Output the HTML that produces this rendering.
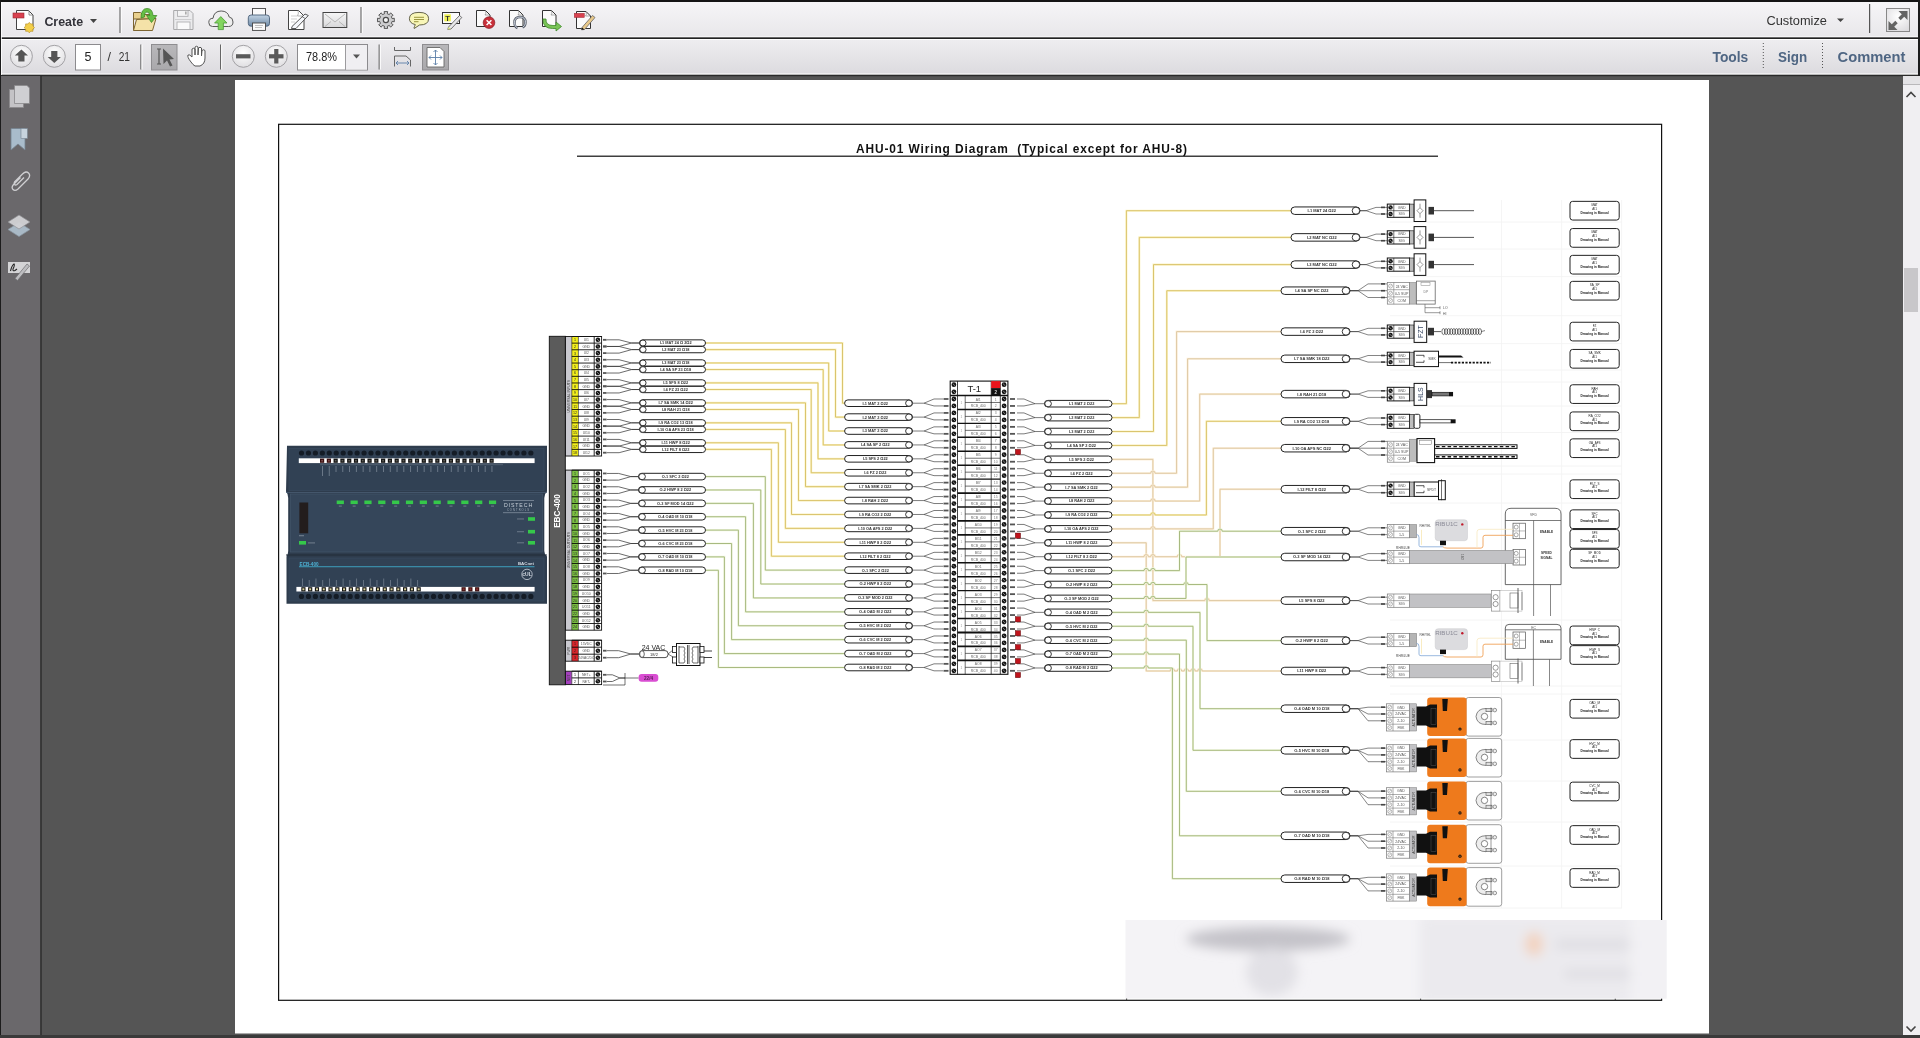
<!DOCTYPE html>
<html><head><meta charset="utf-8"><title>AHU-01 Wiring Diagram</title>
<style>html,body{margin:0;padding:0;width:1920px;height:1038px;overflow:hidden;background:#555555;font-family:"Liberation Sans",sans-serif;} svg{display:block;will-change:transform;}</style>
</head><body>
<svg width="1920" height="1038" viewBox="0 0 1920 1038"><defs>
<linearGradient id="tb1" x1="0" y1="0" x2="0" y2="1"><stop offset="0" stop-color="#f6f5f7"/><stop offset="1" stop-color="#e8e7ea"/></linearGradient>
<linearGradient id="tb2" x1="0" y1="0" x2="0" y2="1"><stop offset="0" stop-color="#eeedf0"/><stop offset="1" stop-color="#dcdbdf"/></linearGradient>
<radialGradient id="btnc" cx="0.5" cy="0.35" r="0.7"><stop offset="0" stop-color="#ffffff"/><stop offset="1" stop-color="#dddcdf"/></radialGradient>
<linearGradient id="prn" x1="0" y1="0" x2="0" y2="1"><stop offset="0" stop-color="#c2d3e3"/><stop offset="1" stop-color="#6f8aa6"/></linearGradient>
<linearGradient id="mail" x1="0" y1="0" x2="0" y2="1"><stop offset="0" stop-color="#f7f7f7"/><stop offset="1" stop-color="#d8d8da"/></linearGradient>
<linearGradient id="selbg" x1="0" y1="0" x2="0" y2="1"><stop offset="0" stop-color="#b9b8bb"/><stop offset="1" stop-color="#a9a8ab"/></linearGradient>
<filter id="blur6" x="-5%" y="-20%" width="110%" height="140%"><feGaussianBlur stdDeviation="6"/></filter></defs><rect x="0" y="0" width="1920" height="1038" fill="#555555"/>
<rect x="0" y="0" width="1920" height="2" fill="#151515"/>
<rect x="0" y="2" width="1920" height="35" fill="url(#tb1)"/>
<rect x="0" y="36.5" width="1920" height="1" fill="#ffffff"/>
<rect x="0" y="37.5" width="1920" height="1.5" fill="#222"/>
<rect x="0" y="39" width="1920" height="1" fill="#ffffff"/>
<rect x="0" y="40" width="1920" height="34" fill="url(#tb2)"/>
<rect x="0" y="73.5" width="1920" height="1.3" fill="#ffffff"/>
<rect x="0" y="74.8" width="1920" height="1.4" fill="#2a2a2a"/>
<rect x="0" y="0" width="1" height="1038" fill="#1c1c1c"/>
<rect x="1" y="2" width="1" height="73" fill="#ffffff" opacity="0.8"/>
<rect x="1918" y="0" width="2" height="76" fill="#1c1c1c"/>
<rect x="1" y="76" width="39.5" height="962" fill="#6a686b"/>
<rect x="40.3" y="76" width="1.4" height="962" fill="#2b2b2b"/>
<rect x="1903" y="76" width="17" height="962" fill="#f0eff2"/>
<rect x="1903" y="76" width="17" height="8" fill="#e4e3e6"/>
<rect x="1903" y="84" width="17" height="1" fill="#b9b8bb"/>
<path d="M1906.5 97 L1911 92.5 L1915.5 97" stroke="#444" stroke-width="1.6" fill="none"/>
<rect x="1904" y="268" width="14" height="44" fill="#c8c7ca"/>
<path d="M1906.5 1026.5 L1911 1031 L1915.5 1026.5" stroke="#444" stroke-width="1.6" fill="none"/>
<rect x="0" y="1035" width="1920" height="3" fill="#3a3a3a"/><path d="M16.5 10.5 L28.5 10.5 L33 15 L33 29.5 L16.5 29.5 Z" fill="#fff" stroke="#444" stroke-width="1"/>
<path d="M29 11 L29 15 L33 15" fill="none" stroke="#777" stroke-width="0.8"/>
<rect x="13" y="13" width="11" height="5" fill="#d8414f" stroke="#9b2a33" stroke-width="0.6"/>
<path d="M34.50 27.60 L32.90 29.09 L32.98 31.28 L30.79 31.20 L29.30 32.80 L27.81 31.20 L25.62 31.28 L25.70 29.09 L24.10 27.60 L25.70 26.11 L25.62 23.92 L27.81 24.00 L29.30 22.40 L30.79 24.00 L32.98 23.92 L32.90 26.11 Z" fill="#f3cf4a" stroke="#b8902a" stroke-width="0.7"/>
<text x="44.4" y="25.5" font-family="Liberation Sans, sans-serif" font-size="13.5" font-weight="bold" fill="#33333a" textLength="38.7" lengthAdjust="spacingAndGlyphs">Create</text>
<path d="M90 19 L97 19 L93.5 23 Z" fill="#444"/>
<rect x="119.5" y="7" width="1.2" height="26" fill="#555"/>
<rect x="120.7" y="7" width="1" height="26" fill="#fff"/>
<rect x="360.5" y="7" width="1.2" height="26" fill="#555"/>
<rect x="361.7" y="7" width="1" height="26" fill="#fff"/>
<path d="M133.5 30.5 V12.5 H140.5 L142.5 14.5 H150 V19 H133.5" fill="#e9d08e" stroke="#7d6530" stroke-width="1"/>
<path d="M136.5 19.5 L156 18.5 L152.5 30.5 L133.5 30.5 Z" fill="#f4e2a8" stroke="#7d6530" stroke-width="1"/>
<path d="M141 18 Q141 8.5 147 8.5 Q152.5 8.5 153 15.5 L156.8 15.5 L151.5 22.5 L146.5 15.5 L149.8 15.5 Q149.5 12 147 12 Q144.5 12 144.5 17 Z" fill="#66bf45" stroke="#3f8a2a" stroke-width="0.8"/>
<path d="M173.7 10.5 L190 10.5 L193 13.5 L193 29.5 L173.7 29.5 Z" fill="#ececee" stroke="#a9a9ab" stroke-width="1"/>
<rect x="177.5" y="10.5" width="10.5" height="5.8" fill="#f4f4f5" stroke="#a9a9ab" stroke-width="0.8"/>
<rect x="185" y="11.5" width="1.6" height="3" fill="#aaa"/>
<rect x="177" y="22" width="13" height="7.5" fill="#fafafa" stroke="#a9a9ab" stroke-width="0.8"/>
<path d="M175 19.5 H191.5" stroke="#c5c5c7" stroke-width="0.8"/>
<path d="M212.5 26.5 Q208.8 26.5 208.8 22.5 Q208.8 18.3 213 18.3 Q214 11 221.2 11 Q227.8 11 229.2 17 Q233 17.5 233 22 Q233 26.5 228.5 26.5 Z" fill="#eeeeee" stroke="#5a5a5a" stroke-width="1"/>
<path d="M220.8 16.6 L227 23 L223.4 23 L223.4 29.6 L218.2 29.6 L218.2 23 L214.6 23 Z" fill="#82d45e" stroke="#4a9a35" stroke-width="0.8"/>
<rect x="252.5" y="8.5" width="13" height="8.5" fill="#fafafa" stroke="#444" stroke-width="0.9"/>
<rect x="248.3" y="15" width="21.2" height="11.2" rx="2.8" fill="url(#prn)" stroke="#4a6078" stroke-width="0.9"/>
<rect x="252.5" y="23" width="13" height="7.4" fill="#fafafa" stroke="#444" stroke-width="0.9"/>
<path d="M255 25.5 H263 M255 27.5 H262" stroke="#999" stroke-width="0.6"/>
<path d="M288.5 10.5 L298.5 10.5 L304 16 L304 29.5 L288.5 29.5 Z" fill="#fff" stroke="#444" stroke-width="1"/>
<path d="M298 10.5 Q299 13.5 297.5 16 H304" fill="none" stroke="#888" stroke-width="0.6"/>
<path d="M291 16 H297 M291 19 H297 M291 22 H295" stroke="#bbb" stroke-width="0.7"/>
<path d="M292 26.5 L305 14 L308.3 15.5 L296 28.5 L291.5 28.5 Z" fill="#f4f6fa" stroke="#444" stroke-width="0.9"/>
<path d="M302 16.5 L305 18.5" stroke="#444" stroke-width="0.7"/>
<rect x="323" y="12.5" width="23.8" height="15" fill="url(#mail)" stroke="#444" stroke-width="1"/>
<path d="M325 14 L335 22 L345 14 M325 26.5 L331 21.5 M345 26.5 L339 21.5" fill="none" stroke="#aaa" stroke-width="0.8"/>
<path d="M394.31 18.21 L394.31 21.79 L392.15 21.39 L391.30 23.44 L393.11 24.68 L390.58 27.21 L389.34 25.40 L387.29 26.25 L387.69 28.41 L384.11 28.41 L384.51 26.25 L382.46 25.40 L381.22 27.21 L378.69 24.68 L380.50 23.44 L379.65 21.39 L377.49 21.79 L377.49 18.21 L379.65 18.61 L380.50 16.56 L378.69 15.32 L381.22 12.79 L382.46 14.60 L384.51 13.75 L384.11 11.59 L387.69 11.59 L387.29 13.75 L389.34 14.60 L390.58 12.79 L393.11 15.32 L391.30 16.56 L392.15 18.61 Z" fill="#cdcdcf" stroke="#4a4a4a" stroke-width="0.9" stroke-linejoin="round"/>
<circle cx="385.9" cy="20" r="2.6" fill="#f4f4f4" stroke="#4a4a4a" stroke-width="1.2"/>
<path d="M419 12.4 Q428.6 12.4 428.6 18.7 Q428.6 25 419.5 25 L414.2 28.5 Q413.5 28.5 414.5 26.5 L415.3 24.6 Q409.4 23.2 409.4 18.7 Q409.4 12.4 419 12.4 Z" fill="#f8f6b8" stroke="#55543a" stroke-width="0.9"/>
<path d="M414 17.3 H424 M414 19.5 H424 M414 21.7 H418.5" stroke="#8f8a30" stroke-width="0.9"/>
<rect x="442.5" y="12.5" width="17" height="11" fill="#fbfbfb" stroke="#333" stroke-width="1"/>
<rect x="444.3" y="14.3" width="6.6" height="7" fill="#eef050"/>
<text x="447.6" y="20.6" font-family="Liberation Sans, sans-serif" font-size="7.5" font-weight="bold" fill="#333" text-anchor="middle">T</text>
<path d="M448.5 27 L459.5 15.5 L461.8 17.5 L451 29 L447.8 29.5 Z" fill="#e8e8ea" stroke="#555" stroke-width="0.8"/>
<path d="M447.8 29.5 L448.5 27 L451 29 Z" fill="#d7e27a"/>
<path d="M476.5 10.5 H485.5 L490 15.0 V26.5 H476.5 Z" fill="#fbfbfb" stroke="#333" stroke-width="1"/><path d="M485.5 10.5 Q486.5 14.0 485.0 15.0 H490" fill="none" stroke="#777" stroke-width="0.6"/>
<circle cx="489" cy="22.6" r="5.8" fill="#c8303a" stroke="#8a1a22" stroke-width="0.7"/>
<path d="M486.6 20.2 L491.4 25 M491.4 20.2 L486.6 25" stroke="#fff" stroke-width="1.5"/>
<path d="M509.5 10.5 H518.5 L523 15.0 V26.5 H509.5 Z" fill="#fbfbfb" stroke="#333" stroke-width="1"/><path d="M518.5 10.5 Q519.5 14.0 518.0 15.0 H523" fill="none" stroke="#777" stroke-width="0.6"/>
<path d="M517.5 28 Q514.5 27 514.5 22.5 Q514.5 17 520 17 Q525.5 17 525.5 22.5 Q525.5 26 522.5 27.5" fill="none" stroke="#555b66" stroke-width="2.4"/>
<path d="M517.5 28 Q514.5 27 514.5 22.5 Q514.5 17 520 17 Q525.5 17 525.5 22.5 Q525.5 26 522.5 27.5" fill="none" stroke="#cfd6e2" stroke-width="1"/>
<path d="M542.5 10.5 H551.5 L556 15.0 V26.5 H542.5 Z" fill="#fbfbfb" stroke="#333" stroke-width="1"/><path d="M551.5 10.5 Q552.5 14.0 551.0 15.0 H556" fill="none" stroke="#777" stroke-width="0.6"/>
<path d="M546 19 Q545.5 25.5 553 25.5 L556 25.5 L556 22 L561.5 26.5 L556 31 L556 28.5 L552.5 28.5 Q542.5 28.5 543 19 Z" fill="#79c456" stroke="#3f8a2a" stroke-width="0.8"/>
<path d="M576.5 11.5 H586.0 L590.5 16.0 V28.5 H576.5 Z" fill="#fbfbfb" stroke="#333" stroke-width="1"/><path d="M586.0 11.5 Q587.0 15.0 585.5 16.0 H590.5" fill="none" stroke="#777" stroke-width="0.6"/>
<rect x="574.3" y="13.3" width="10" height="4.2" fill="#d8414f" stroke="#9b2a33" stroke-width="0.5"/>
<path d="M582 27.5 L592.5 15.5 L595 17.5 L584.5 29.5 L581.5 29.8 Z" fill="#e9c98a" stroke="#666" stroke-width="0.8"/>
<path d="M581.5 29.8 L582 27.5 L584.5 29.5 Z" fill="#111"/>
<text x="1766.5" y="24.5" font-family="Liberation Sans, sans-serif" font-size="12.8" fill="#333">Customize</text>
<path d="M1837 18.5 L1844 18.5 L1840.5 22 Z" fill="#444"/>
<rect x="1869" y="4" width="1.2" height="29" fill="#555"/>
<rect x="1886.5" y="8.5" width="23" height="23" fill="url(#btnc)" stroke="#888" stroke-width="1"/>
<path d="M1898.5 11 L1907.5 11 L1907.5 20 Z M1888.5 30 L1888.5 21 L1897.5 30 Z" fill="#646464"/>
<path d="M1904 14.5 L1899.5 19 M1892 26.5 L1896.5 22" stroke="#646464" stroke-width="3.4"/>
<circle cx="21.4" cy="56.3" r="11" fill="url(#btnc)" stroke="#9b9a9d" stroke-width="0.9"/>
<circle cx="54.3" cy="56.3" r="11" fill="url(#btnc)" stroke="#9b9a9d" stroke-width="0.9"/>
<path d="M21.4 49.5 L28 55.5 L24.5 55.5 L24.5 61.5 L18.3 61.5 L18.3 55.5 L14.8 55.5 Z" fill="#555"/>
<path d="M54.3 63 L60.9 57 L57.4 57 L57.4 51 L51.2 51 L51.2 57 L47.7 57 Z" fill="#555"/>
<rect x="75.5" y="44.5" width="25" height="25.5" fill="#fff" stroke="#8c8b8e" stroke-width="1"/>
<text x="88" y="61" font-family="Liberation Sans, sans-serif" font-size="12.5" fill="#222" text-anchor="middle">5</text>
<text x="107.5" y="61" font-family="Liberation Sans, sans-serif" font-size="12.5" fill="#333">/</text>
<text x="118.7" y="61" font-family="Liberation Sans, sans-serif" font-size="12.5" fill="#333" textLength="11.3" lengthAdjust="spacingAndGlyphs">21</text>
<rect x="140.3" y="44.5" width="1.2" height="25" fill="#666"/>
<rect x="141.5" y="44.5" width="1" height="25" fill="#fff"/>
<rect x="220" y="44.5" width="1.2" height="25" fill="#666"/>
<rect x="221.2" y="44.5" width="1" height="25" fill="#fff"/>
<rect x="378.6" y="44.5" width="1.2" height="25" fill="#666"/>
<rect x="379.8" y="44.5" width="1" height="25" fill="#fff"/>
<rect x="151.5" y="44.5" width="25.5" height="25.5" fill="url(#selbg)" stroke="#8e8d90" stroke-width="1"/>
<path d="M157 49 H161 M159 49 V64 M157 64 H161" stroke="#555" stroke-width="1.2" fill="none"/>
<path d="M163 48.5 L174 59 L169.5 59.5 L172.5 65.5 L170 66.5 L167 60.5 L163.5 64 Z" fill="#555"/>
<path d="M191 62 Q187 57 188 55 Q189.5 54 192 57 L192 49 Q193.5 47.5 195 49 L195 55 L195 47 Q196.5 45.5 198 47 L198 55 L198.5 48 Q200 46.5 201.5 48 L201.5 56 L202 50.5 Q203.5 49 205 50.5 L205 58 Q205 64 200 66 L195 66 Q193 65 191 62 Z" fill="#fff" stroke="#555" stroke-width="1"/>
<circle cx="243.3" cy="56.3" r="11" fill="url(#btnc)" stroke="#9b9a9d" stroke-width="0.9"/>
<rect x="236" y="54.2" width="14.5" height="4.2" fill="#5a5a5a"/>
<circle cx="276.3" cy="56.3" r="11" fill="url(#btnc)" stroke="#9b9a9d" stroke-width="0.9"/>
<rect x="269" y="54.2" width="14.5" height="4.2" fill="#5a5a5a"/><rect x="274.2" y="49" width="4.2" height="14.5" fill="#5a5a5a"/>
<rect x="297.5" y="44.5" width="70" height="25.5" fill="#fff" stroke="#8c8b8e" stroke-width="1"/>
<rect x="345.5" y="45" width="21.5" height="24.5" fill="#f0eff2"/>
<rect x="345" y="44.5" width="1" height="25.5" fill="#9c9b9e"/>
<text x="306" y="61" font-family="Liberation Sans, sans-serif" font-size="12.5" fill="#222" textLength="31" lengthAdjust="spacingAndGlyphs">78.8%</text>
<path d="M353 54.5 L360 54.5 L356.5 58.5 Z" fill="#555"/>
<path d="M394.5 47 V50.5 H410.5 V47" fill="none" stroke="#666" stroke-width="1"/>
<path d="M394.5 66.5 V56 H406 L410.5 60 V66.5" fill="none" stroke="#666" stroke-width="1"/>
<path d="M396 63 H409 M396 63 L398 61 M396 63 L398 65 M409 63 L407 61 M409 63 L407 65" stroke="#5b7fa8" stroke-width="0.9" fill="none"/>
<rect x="422.5" y="44.5" width="26" height="25.5" fill="url(#selbg)" stroke="#8e8d90" stroke-width="1"/>
<path d="M427 47.5 H440 L444 51.5 V67 H427 Z" fill="#fff" stroke="#666" stroke-width="0.9"/>
<path d="M435.5 50 V65 M429 57.5 H442" stroke="#5b7fa8" stroke-width="0.9"/>
<path d="M433.5 52 L435.5 50 L437.5 52 M433.5 63 L435.5 65 L437.5 63 M431 55.5 L429 57.5 L431 59.5 M440 55.5 L442 57.5 L440 59.5" stroke="#5b7fa8" stroke-width="0.9" fill="none"/>
<text x="1712.5" y="62" font-family="Liberation Sans, sans-serif" font-size="15.5" font-weight="bold" fill="#4f6683" textLength="35.8" lengthAdjust="spacingAndGlyphs">Tools</text>
<text x="1778" y="62" font-family="Liberation Sans, sans-serif" font-size="15.5" font-weight="bold" fill="#4f6683" textLength="29.1" lengthAdjust="spacingAndGlyphs">Sign</text>
<text x="1837.5" y="62" font-family="Liberation Sans, sans-serif" font-size="15.5" font-weight="bold" fill="#4f6683" textLength="67.9" lengthAdjust="spacingAndGlyphs">Comment</text>
<line x1="1763.3" y1="43" x2="1763.3" y2="70" stroke="#444" stroke-width="0.9" stroke-dasharray="1,2"/>
<line x1="1822.5" y1="43" x2="1822.5" y2="70" stroke="#444" stroke-width="0.9" stroke-dasharray="1,2"/>
<rect x="9.5" y="89.5" width="14" height="18" fill="#c4c3c6" stroke="#8a898c" stroke-width="0.8"/>
<path d="M14.5 85.5 L27 85.5 L29.5 88 L29.5 103.5 L14.5 103.5 Z" fill="#cfcfd2" stroke="#8a898c" stroke-width="0.8"/>
<path d="M11 128.5 L25 128.5 L25 150 L18 144 L11 150 Z" fill="#a9bccb" stroke="#75838f" stroke-width="0.8"/>
<rect x="21" y="128.5" width="6.5" height="10" fill="#c7d4de" stroke="#75838f" stroke-width="0.6"/>
<path d="M20.5 177.5 L13.5 184.5 Q11 187.5 13 189.5 Q15 191.5 18 189 L28 179 Q31 175.5 28.5 173 Q26 170.5 22.5 174 L14.5 182 Q13.5 183.5 14.5 184.5 Q15.5 185.5 17 184.5 L24 177.5" fill="none" stroke="#cfcfd2" stroke-width="1.3"/>
<path d="M19 222.5 L30 229.5 L19 236.5 L8 229.5 Z" fill="#a9b9c6" stroke="#8a97a2" stroke-width="0.7"/>
<path d="M19 215 L30 222 L19 229 L8 222 Z" fill="#d2d2d5" stroke="#8f8f93" stroke-width="0.7" opacity="0.95"/>
<rect x="8" y="262" width="22" height="11" fill="#d4d4d6"/>
<path d="M10.5 271 Q12 265 14 264 Q15 265 13 269 Q12.5 271.5 15 270.5 L17 269" fill="none" stroke="#222" stroke-width="1.1"/>
<path d="M15 278.5 L27 264 L29.5 266 L17.5 280.5 Z" fill="#bdbdc0" stroke="#6d6d70" stroke-width="0.7"/><rect x="235" y="80" width="1474" height="953.5" fill="#ffffff"/>
<rect x="278.6" y="124.3" width="1383" height="876" fill="none" stroke="#111" stroke-width="1.2"/>
<text x="856" y="152.7" font-family="Liberation Sans, sans-serif" font-size="11.9" font-weight="bold" fill="#111" textLength="331" lengthAdjust="spacing" xml:space="preserve">AHU-01 Wiring Diagram  (Typical except for AHU-8)</text>
<rect x="577" y="155.6" width="861" height="1.2" fill="#111"/>
<rect x="1126.3" y="996" width="0.8" height="4" fill="#222"/>
<rect x="1420.3" y="996" width="0.8" height="4" fill="#222"/>
<rect x="1614.8" y="996" width="0.8" height="4" fill="#222"/><path d="M287 445.7 H547 V491.5 Q544.5 493.5 544.3 498 V551 Q544.5 555 547 556.5 V603.7 H286.5 V556.5 Q288 555 288.2 551 V498 Q288 493.5 286 491.5 Z" fill="#2e3c4d"/>
<rect x="289" y="448.5" width="255" height="42" fill="#314154" stroke="#3b4d61" stroke-width="0.6"/>
<rect x="290.5" y="494" width="252" height="58" fill="#35465a" stroke="#43566b" stroke-width="0.7"/>
<line x1="286" y1="492.5" x2="547" y2="492.5" stroke="#4a5d73" stroke-width="0.8"/>
<line x1="286" y1="555" x2="547" y2="555" stroke="#222c38" stroke-width="1"/>
<rect x="289" y="558" width="255" height="43" fill="#314154" stroke="#3b4d61" stroke-width="0.6"/>
<circle cx="301.50" cy="453" r="2.6" fill="#141c26"/>
<circle cx="308.45" cy="453" r="2.6" fill="#141c26"/>
<circle cx="315.40" cy="453" r="2.6" fill="#141c26"/>
<circle cx="322.35" cy="453" r="2.6" fill="#141c26"/>
<circle cx="329.30" cy="453" r="2.6" fill="#141c26"/>
<circle cx="336.25" cy="453" r="2.6" fill="#141c26"/>
<circle cx="343.20" cy="453" r="2.6" fill="#141c26"/>
<circle cx="350.15" cy="453" r="2.6" fill="#141c26"/>
<circle cx="357.10" cy="453" r="2.6" fill="#141c26"/>
<circle cx="364.05" cy="453" r="2.6" fill="#141c26"/>
<circle cx="371.00" cy="453" r="2.6" fill="#141c26"/>
<circle cx="377.95" cy="453" r="2.6" fill="#141c26"/>
<circle cx="384.90" cy="453" r="2.6" fill="#141c26"/>
<circle cx="391.85" cy="453" r="2.6" fill="#141c26"/>
<circle cx="398.80" cy="453" r="2.6" fill="#141c26"/>
<circle cx="405.75" cy="453" r="2.6" fill="#141c26"/>
<circle cx="412.70" cy="453" r="2.6" fill="#141c26"/>
<circle cx="419.65" cy="453" r="2.6" fill="#141c26"/>
<circle cx="426.60" cy="453" r="2.6" fill="#141c26"/>
<circle cx="433.55" cy="453" r="2.6" fill="#141c26"/>
<circle cx="440.50" cy="453" r="2.6" fill="#141c26"/>
<circle cx="447.45" cy="453" r="2.6" fill="#141c26"/>
<circle cx="454.40" cy="453" r="2.6" fill="#141c26"/>
<circle cx="461.35" cy="453" r="2.6" fill="#141c26"/>
<circle cx="468.30" cy="453" r="2.6" fill="#141c26"/>
<circle cx="475.25" cy="453" r="2.6" fill="#141c26"/>
<circle cx="482.20" cy="453" r="2.6" fill="#141c26"/>
<circle cx="489.15" cy="453" r="2.6" fill="#141c26"/>
<circle cx="496.10" cy="453" r="2.6" fill="#141c26"/>
<circle cx="503.05" cy="453" r="2.6" fill="#141c26"/>
<circle cx="510.00" cy="453" r="2.6" fill="#141c26"/>
<circle cx="516.95" cy="453" r="2.6" fill="#141c26"/>
<circle cx="523.90" cy="453" r="2.6" fill="#141c26"/>
<circle cx="530.85" cy="453" r="2.6" fill="#141c26"/>
<rect x="298.8" y="458.3" width="235.8" height="4.8" fill="#ffffff"/>
<rect x="320.00" y="458.6" width="4.2" height="4.2" fill="#3a0f10"/><rect x="321.20" y="459.9" width="1.8" height="1.6" fill="#7a4a4a"/>
<rect x="326.78" y="458.6" width="4.2" height="4.2" fill="#3a0f10"/><rect x="327.98" y="459.9" width="1.8" height="1.6" fill="#7a4a4a"/>
<rect x="333.56" y="458.6" width="4.2" height="4.2" fill="#131313"/><rect x="334.76" y="459.9" width="1.8" height="1.6" fill="#5a5a55"/>
<rect x="340.34" y="458.6" width="4.2" height="4.2" fill="#131313"/><rect x="341.54" y="459.9" width="1.8" height="1.6" fill="#5a5a55"/>
<rect x="347.12" y="458.6" width="4.2" height="4.2" fill="#131313"/><rect x="348.32" y="459.9" width="1.8" height="1.6" fill="#5a5a55"/>
<rect x="353.90" y="458.6" width="4.2" height="4.2" fill="#131313"/><rect x="355.10" y="459.9" width="1.8" height="1.6" fill="#5a5a55"/>
<rect x="360.68" y="458.6" width="4.2" height="4.2" fill="#131313"/><rect x="361.88" y="459.9" width="1.8" height="1.6" fill="#5a5a55"/>
<rect x="367.46" y="458.6" width="4.2" height="4.2" fill="#131313"/><rect x="368.66" y="459.9" width="1.8" height="1.6" fill="#5a5a55"/>
<rect x="374.24" y="458.6" width="4.2" height="4.2" fill="#131313"/><rect x="375.44" y="459.9" width="1.8" height="1.6" fill="#5a5a55"/>
<rect x="381.02" y="458.6" width="4.2" height="4.2" fill="#131313"/><rect x="382.22" y="459.9" width="1.8" height="1.6" fill="#5a5a55"/>
<rect x="387.80" y="458.6" width="4.2" height="4.2" fill="#131313"/><rect x="389.00" y="459.9" width="1.8" height="1.6" fill="#5a5a55"/>
<rect x="394.58" y="458.6" width="4.2" height="4.2" fill="#131313"/><rect x="395.78" y="459.9" width="1.8" height="1.6" fill="#5a5a55"/>
<rect x="401.36" y="458.6" width="4.2" height="4.2" fill="#131313"/><rect x="402.56" y="459.9" width="1.8" height="1.6" fill="#5a5a55"/>
<rect x="408.14" y="458.6" width="4.2" height="4.2" fill="#131313"/><rect x="409.34" y="459.9" width="1.8" height="1.6" fill="#5a5a55"/>
<rect x="414.92" y="458.6" width="4.2" height="4.2" fill="#131313"/><rect x="416.12" y="459.9" width="1.8" height="1.6" fill="#5a5a55"/>
<rect x="421.70" y="458.6" width="4.2" height="4.2" fill="#131313"/><rect x="422.90" y="459.9" width="1.8" height="1.6" fill="#5a5a55"/>
<rect x="428.48" y="458.6" width="4.2" height="4.2" fill="#131313"/><rect x="429.68" y="459.9" width="1.8" height="1.6" fill="#5a5a55"/>
<rect x="435.26" y="458.6" width="4.2" height="4.2" fill="#131313"/><rect x="436.46" y="459.9" width="1.8" height="1.6" fill="#5a5a55"/>
<rect x="442.04" y="458.6" width="4.2" height="4.2" fill="#131313"/><rect x="443.24" y="459.9" width="1.8" height="1.6" fill="#5a5a55"/>
<rect x="448.82" y="458.6" width="4.2" height="4.2" fill="#131313"/><rect x="450.02" y="459.9" width="1.8" height="1.6" fill="#5a5a55"/>
<rect x="455.60" y="458.6" width="4.2" height="4.2" fill="#131313"/><rect x="456.80" y="459.9" width="1.8" height="1.6" fill="#5a5a55"/>
<rect x="462.38" y="458.6" width="4.2" height="4.2" fill="#131313"/><rect x="463.58" y="459.9" width="1.8" height="1.6" fill="#5a5a55"/>
<rect x="469.16" y="458.6" width="4.2" height="4.2" fill="#131313"/><rect x="470.36" y="459.9" width="1.8" height="1.6" fill="#5a5a55"/>
<rect x="475.94" y="458.6" width="4.2" height="4.2" fill="#131313"/><rect x="477.14" y="459.9" width="1.8" height="1.6" fill="#5a5a55"/>
<rect x="482.72" y="458.6" width="4.2" height="4.2" fill="#131313"/><rect x="483.92" y="459.9" width="1.8" height="1.6" fill="#5a5a55"/>
<rect x="489.50" y="458.6" width="4.2" height="4.2" fill="#131313"/><rect x="490.70" y="459.9" width="1.8" height="1.6" fill="#5a5a55"/>
<rect x="322.00" y="466" width="0.9" height="10" fill="#8c97a5" opacity="0.7"/>
<rect x="328.78" y="466" width="0.9" height="10" fill="#8c97a5" opacity="0.7"/>
<rect x="335.56" y="466" width="0.9" height="6" fill="#8c97a5" opacity="0.7"/>
<rect x="342.34" y="466" width="0.9" height="6" fill="#8c97a5" opacity="0.7"/>
<rect x="349.12" y="466" width="0.9" height="6" fill="#8c97a5" opacity="0.7"/>
<rect x="355.90" y="466" width="0.9" height="6" fill="#8c97a5" opacity="0.7"/>
<rect x="362.68" y="466" width="0.9" height="6" fill="#8c97a5" opacity="0.7"/>
<rect x="369.46" y="466" width="0.9" height="6" fill="#8c97a5" opacity="0.7"/>
<rect x="376.24" y="466" width="0.9" height="6" fill="#8c97a5" opacity="0.7"/>
<rect x="383.02" y="466" width="0.9" height="6" fill="#8c97a5" opacity="0.7"/>
<rect x="389.80" y="466" width="0.9" height="6" fill="#8c97a5" opacity="0.7"/>
<rect x="396.58" y="466" width="0.9" height="6" fill="#8c97a5" opacity="0.7"/>
<rect x="403.36" y="466" width="0.9" height="6" fill="#8c97a5" opacity="0.7"/>
<rect x="410.14" y="466" width="0.9" height="6" fill="#8c97a5" opacity="0.7"/>
<rect x="416.92" y="466" width="0.9" height="6" fill="#8c97a5" opacity="0.7"/>
<rect x="423.70" y="466" width="0.9" height="6" fill="#8c97a5" opacity="0.7"/>
<rect x="430.48" y="466" width="0.9" height="6" fill="#8c97a5" opacity="0.7"/>
<rect x="437.26" y="466" width="0.9" height="6" fill="#8c97a5" opacity="0.7"/>
<rect x="444.04" y="466" width="0.9" height="6" fill="#8c97a5" opacity="0.7"/>
<rect x="450.82" y="466" width="0.9" height="6" fill="#8c97a5" opacity="0.7"/>
<rect x="457.60" y="466" width="0.9" height="6" fill="#8c97a5" opacity="0.7"/>
<rect x="464.38" y="466" width="0.9" height="6" fill="#8c97a5" opacity="0.7"/>
<rect x="471.16" y="466" width="0.9" height="6" fill="#8c97a5" opacity="0.7"/>
<rect x="477.94" y="466" width="0.9" height="6" fill="#8c97a5" opacity="0.7"/>
<rect x="484.72" y="466" width="0.9" height="6" fill="#8c97a5" opacity="0.7"/>
<rect x="491.50" y="466" width="0.9" height="6" fill="#8c97a5" opacity="0.7"/>
<rect x="320" y="464.5" width="183" height="0.6" fill="#7e8a99" opacity="0.7"/>
<rect x="336.70" y="500.5" width="7.2" height="3.6" fill="#35c84a"/>
<rect x="338.80" y="505.5" width="3" height="1.2" fill="#8a96a3" opacity="0.6"/>
<rect x="350.54" y="500.5" width="7.2" height="3.6" fill="#35c84a"/>
<rect x="352.64" y="505.5" width="3" height="1.2" fill="#8a96a3" opacity="0.6"/>
<rect x="364.38" y="500.5" width="7.2" height="3.6" fill="#35c84a"/>
<rect x="366.48" y="505.5" width="3" height="1.2" fill="#8a96a3" opacity="0.6"/>
<rect x="378.22" y="500.5" width="7.2" height="3.6" fill="#35c84a"/>
<rect x="380.32" y="505.5" width="3" height="1.2" fill="#8a96a3" opacity="0.6"/>
<rect x="392.06" y="500.5" width="7.2" height="3.6" fill="#35c84a"/>
<rect x="394.16" y="505.5" width="3" height="1.2" fill="#8a96a3" opacity="0.6"/>
<rect x="405.90" y="500.5" width="7.2" height="3.6" fill="#35c84a"/>
<rect x="408.00" y="505.5" width="3" height="1.2" fill="#8a96a3" opacity="0.6"/>
<rect x="419.74" y="500.5" width="7.2" height="3.6" fill="#35c84a"/>
<rect x="421.84" y="505.5" width="3" height="1.2" fill="#8a96a3" opacity="0.6"/>
<rect x="433.58" y="500.5" width="7.2" height="3.6" fill="#35c84a"/>
<rect x="435.68" y="505.5" width="3" height="1.2" fill="#8a96a3" opacity="0.6"/>
<rect x="447.42" y="500.5" width="7.2" height="3.6" fill="#35c84a"/>
<rect x="449.52" y="505.5" width="3" height="1.2" fill="#8a96a3" opacity="0.6"/>
<rect x="461.26" y="500.5" width="7.2" height="3.6" fill="#35c84a"/>
<rect x="463.36" y="505.5" width="3" height="1.2" fill="#8a96a3" opacity="0.6"/>
<rect x="475.10" y="500.5" width="7.2" height="3.6" fill="#35c84a"/>
<rect x="477.20" y="505.5" width="3" height="1.2" fill="#8a96a3" opacity="0.6"/>
<rect x="488.94" y="500.5" width="7.2" height="3.6" fill="#35c84a"/>
<rect x="491.04" y="505.5" width="3" height="1.2" fill="#8a96a3" opacity="0.6"/>
<rect x="528" y="517.2" width="7" height="3.6" fill="#35c84a"/>
<rect x="517" y="518.3" width="7" height="1.3" fill="#8a96a3" opacity="0.5"/>
<rect x="528" y="529.9000000000001" width="7" height="3.6" fill="#35c84a"/>
<rect x="517" y="531.0" width="7" height="1.3" fill="#8a96a3" opacity="0.5"/>
<rect x="528" y="541.0" width="7" height="3.6" fill="#35c84a"/>
<rect x="517" y="542.0999999999999" width="7" height="1.3" fill="#8a96a3" opacity="0.5"/>
<rect x="299" y="541" width="7" height="3.6" fill="#35c84a"/><rect x="308" y="542.3" width="7" height="1.2" fill="#8a96a3" opacity="0.6"/>
<rect x="299.4" y="502.5" width="8.8" height="30.8" fill="#231d1d"/>
<rect x="299" y="535" width="5" height="1.3" fill="#8a96a3" opacity="0.6"/>
<rect x="503" y="500" width="31" height="0.6" fill="#9aa6b4"/><rect x="503" y="512.5" width="31" height="0.6" fill="#9aa6b4"/>
<text x="518.5" y="506.5" font-family="Liberation Sans, sans-serif" font-size="5.2" fill="#c9d1da" text-anchor="middle" letter-spacing="0.9">DISTECH</text>
<text x="518.5" y="510.8" font-family="Liberation Sans, sans-serif" font-size="2.6" fill="#aab4c0" text-anchor="middle" letter-spacing="1.1">CONTROLS</text>
<text x="299.6" y="565.8" font-family="Liberation Sans, sans-serif" font-size="4.6" font-weight="bold" fill="#4fb3d6">ECB-400</text>
<rect x="299" y="566.3" width="235.5" height="0.9" fill="#3fa8c8"/>
<text x="534" y="564.6" font-family="Liberation Sans, sans-serif" font-size="4.4" font-weight="bold" fill="#d5dce4" text-anchor="end">BACnet</text>
<circle cx="527" cy="574.4" r="5.2" fill="none" stroke="#c9d1da" stroke-width="0.8"/><text x="527" y="576.2" font-family="Liberation Sans, sans-serif" font-size="5" font-weight="bold" fill="#d5dce4" text-anchor="middle">cUL</text>
<rect x="302.00" y="578.5" width="0.8" height="7.5" fill="#8c97a5" opacity="0.7"/>
<rect x="308.78" y="580" width="0.8" height="6" fill="#8c97a5" opacity="0.7"/>
<rect x="315.56" y="578.5" width="0.8" height="7.5" fill="#8c97a5" opacity="0.7"/>
<rect x="322.34" y="580" width="0.8" height="6" fill="#8c97a5" opacity="0.7"/>
<rect x="329.12" y="578.5" width="0.8" height="7.5" fill="#8c97a5" opacity="0.7"/>
<rect x="335.90" y="580" width="0.8" height="6" fill="#8c97a5" opacity="0.7"/>
<rect x="342.68" y="578.5" width="0.8" height="7.5" fill="#8c97a5" opacity="0.7"/>
<rect x="349.46" y="580" width="0.8" height="6" fill="#8c97a5" opacity="0.7"/>
<rect x="356.24" y="578.5" width="0.8" height="7.5" fill="#8c97a5" opacity="0.7"/>
<rect x="363.02" y="580" width="0.8" height="6" fill="#8c97a5" opacity="0.7"/>
<rect x="369.80" y="578.5" width="0.8" height="7.5" fill="#8c97a5" opacity="0.7"/>
<rect x="376.58" y="580" width="0.8" height="6" fill="#8c97a5" opacity="0.7"/>
<rect x="383.36" y="578.5" width="0.8" height="7.5" fill="#8c97a5" opacity="0.7"/>
<rect x="390.14" y="580" width="0.8" height="6" fill="#8c97a5" opacity="0.7"/>
<rect x="396.92" y="578.5" width="0.8" height="7.5" fill="#8c97a5" opacity="0.7"/>
<rect x="403.70" y="580" width="0.8" height="6" fill="#8c97a5" opacity="0.7"/>
<rect x="410.48" y="578.5" width="0.8" height="7.5" fill="#8c97a5" opacity="0.7"/>
<rect x="417.26" y="580" width="0.8" height="6" fill="#8c97a5" opacity="0.7"/>
<rect x="296.4" y="586.9" width="238.2" height="4.6" fill="#ffffff"/>
<rect x="301.30" y="587.2" width="4.2" height="4.2" fill="#141414"/><rect x="302.40" y="588.3" width="2" height="2" fill="#d8d19a"/>
<rect x="308.08" y="587.2" width="4.2" height="4.2" fill="#141414"/><rect x="309.18" y="588.3" width="2" height="2" fill="#d8d19a"/>
<rect x="314.86" y="587.2" width="4.2" height="4.2" fill="#141414"/><rect x="315.96" y="588.3" width="2" height="2" fill="#d8d19a"/>
<rect x="321.64" y="587.2" width="4.2" height="4.2" fill="#141414"/><rect x="322.74" y="588.3" width="2" height="2" fill="#d8d19a"/>
<rect x="328.42" y="587.2" width="4.2" height="4.2" fill="#141414"/><rect x="329.52" y="588.3" width="2" height="2" fill="#d8d19a"/>
<rect x="335.20" y="587.2" width="4.2" height="4.2" fill="#141414"/><rect x="336.30" y="588.3" width="2" height="2" fill="#d8d19a"/>
<rect x="341.98" y="587.2" width="4.2" height="4.2" fill="#141414"/><rect x="343.08" y="588.3" width="2" height="2" fill="#d8d19a"/>
<rect x="348.76" y="587.2" width="4.2" height="4.2" fill="#141414"/><rect x="349.86" y="588.3" width="2" height="2" fill="#d8d19a"/>
<rect x="355.54" y="587.2" width="4.2" height="4.2" fill="#141414"/><rect x="356.64" y="588.3" width="2" height="2" fill="#d8d19a"/>
<rect x="362.32" y="587.2" width="4.2" height="4.2" fill="#141414"/><rect x="363.42" y="588.3" width="2" height="2" fill="#d8d19a"/>
<rect x="369.10" y="587.2" width="4.2" height="4.2" fill="#141414"/><rect x="370.20" y="588.3" width="2" height="2" fill="#d8d19a"/>
<rect x="375.88" y="587.2" width="4.2" height="4.2" fill="#141414"/><rect x="376.98" y="588.3" width="2" height="2" fill="#d8d19a"/>
<rect x="382.66" y="587.2" width="4.2" height="4.2" fill="#141414"/><rect x="383.76" y="588.3" width="2" height="2" fill="#d8d19a"/>
<rect x="389.44" y="587.2" width="4.2" height="4.2" fill="#141414"/><rect x="390.54" y="588.3" width="2" height="2" fill="#d8d19a"/>
<rect x="396.22" y="587.2" width="4.2" height="4.2" fill="#141414"/><rect x="397.32" y="588.3" width="2" height="2" fill="#d8d19a"/>
<rect x="403.00" y="587.2" width="4.2" height="4.2" fill="#141414"/><rect x="404.10" y="588.3" width="2" height="2" fill="#d8d19a"/>
<rect x="409.78" y="587.2" width="4.2" height="4.2" fill="#141414"/><rect x="410.88" y="588.3" width="2" height="2" fill="#d8d19a"/>
<rect x="416.56" y="587.2" width="4.2" height="4.2" fill="#141414"/><rect x="417.66" y="588.3" width="2" height="2" fill="#d8d19a"/>
<rect x="461.50" y="587.2" width="4.2" height="4.2" fill="#3a1010"/><rect x="462.60" y="588.3" width="2" height="2" fill="#8a3030"/>
<rect x="468.28" y="587.2" width="4.2" height="4.2" fill="#3a1010"/><rect x="469.38" y="588.3" width="2" height="2" fill="#8a3030"/>
<rect x="475.06" y="587.2" width="4.2" height="4.2" fill="#3a1010"/><rect x="476.16" y="588.3" width="2" height="2" fill="#8a3030"/>
<circle cx="301.50" cy="596.4" r="2.6" fill="#141c26"/>
<circle cx="308.45" cy="596.4" r="2.6" fill="#141c26"/>
<circle cx="315.40" cy="596.4" r="2.6" fill="#141c26"/>
<circle cx="322.35" cy="596.4" r="2.6" fill="#141c26"/>
<circle cx="329.30" cy="596.4" r="2.6" fill="#141c26"/>
<circle cx="336.25" cy="596.4" r="2.6" fill="#141c26"/>
<circle cx="343.20" cy="596.4" r="2.6" fill="#141c26"/>
<circle cx="350.15" cy="596.4" r="2.6" fill="#141c26"/>
<circle cx="357.10" cy="596.4" r="2.6" fill="#141c26"/>
<circle cx="364.05" cy="596.4" r="2.6" fill="#141c26"/>
<circle cx="371.00" cy="596.4" r="2.6" fill="#141c26"/>
<circle cx="377.95" cy="596.4" r="2.6" fill="#141c26"/>
<circle cx="384.90" cy="596.4" r="2.6" fill="#141c26"/>
<circle cx="391.85" cy="596.4" r="2.6" fill="#141c26"/>
<circle cx="398.80" cy="596.4" r="2.6" fill="#141c26"/>
<circle cx="405.75" cy="596.4" r="2.6" fill="#141c26"/>
<circle cx="412.70" cy="596.4" r="2.6" fill="#141c26"/>
<circle cx="419.65" cy="596.4" r="2.6" fill="#141c26"/>
<circle cx="426.60" cy="596.4" r="2.6" fill="#141c26"/>
<circle cx="433.55" cy="596.4" r="2.6" fill="#141c26"/>
<circle cx="440.50" cy="596.4" r="2.6" fill="#141c26"/>
<circle cx="447.45" cy="596.4" r="2.6" fill="#141c26"/>
<circle cx="454.40" cy="596.4" r="2.6" fill="#141c26"/>
<circle cx="461.35" cy="596.4" r="2.6" fill="#141c26"/>
<circle cx="468.30" cy="596.4" r="2.6" fill="#141c26"/>
<circle cx="475.25" cy="596.4" r="2.6" fill="#141c26"/>
<circle cx="482.20" cy="596.4" r="2.6" fill="#141c26"/>
<circle cx="489.15" cy="596.4" r="2.6" fill="#141c26"/>
<circle cx="496.10" cy="596.4" r="2.6" fill="#141c26"/>
<circle cx="503.05" cy="596.4" r="2.6" fill="#141c26"/>
<circle cx="510.00" cy="596.4" r="2.6" fill="#141c26"/>
<circle cx="516.95" cy="596.4" r="2.6" fill="#141c26"/>
<circle cx="523.90" cy="596.4" r="2.6" fill="#141c26"/>
<circle cx="530.85" cy="596.4" r="2.6" fill="#141c26"/><path d="M705 343.00 H842.5 V403.20 H845" fill="none" stroke="#fcf4c4" stroke-width="2.1"/><path d="M705 343.00 H842.5 V403.20 H845" fill="none" stroke="#d8c168" stroke-width="0.95"/>
<path d="M705 349.60 H835.5 V417.11 H845" fill="none" stroke="#fcf4c4" stroke-width="2.1"/><path d="M705 349.60 H835.5 V417.11 H845" fill="none" stroke="#d8c168" stroke-width="0.95"/>
<path d="M705 362.96 H828.7 V431.02 H845" fill="none" stroke="#fcf4c4" stroke-width="2.1"/><path d="M705 362.96 H828.7 V431.02 H845" fill="none" stroke="#d8c168" stroke-width="0.95"/>
<path d="M705 369.56 H823.2 V444.93 H845" fill="none" stroke="#fcf4c4" stroke-width="2.1"/><path d="M705 369.56 H823.2 V444.93 H845" fill="none" stroke="#d8c168" stroke-width="0.95"/>
<path d="M705 382.92 H818 V458.84 H845" fill="none" stroke="#fcf4c4" stroke-width="2.1"/><path d="M705 382.92 H818 V458.84 H845" fill="none" stroke="#d8c168" stroke-width="0.95"/>
<path d="M705 389.52 H811.2 V472.75 H845" fill="none" stroke="#fcf4c4" stroke-width="2.1"/><path d="M705 389.52 H811.2 V472.75 H845" fill="none" stroke="#d8c168" stroke-width="0.95"/>
<path d="M705 402.88 H805.5 V486.66 H845" fill="none" stroke="#fcf4c4" stroke-width="2.1"/><path d="M705 402.88 H805.5 V486.66 H845" fill="none" stroke="#d8c168" stroke-width="0.95"/>
<path d="M705 409.48 H798.5 V500.57 H845" fill="none" stroke="#fcf4c4" stroke-width="2.1"/><path d="M705 409.48 H798.5 V500.57 H845" fill="none" stroke="#d8c168" stroke-width="0.95"/>
<path d="M705 422.84 H791.5 V514.48 H845" fill="none" stroke="#fcf4c4" stroke-width="2.1"/><path d="M705 422.84 H791.5 V514.48 H845" fill="none" stroke="#d8c168" stroke-width="0.95"/>
<path d="M705 429.44 H785.4 V528.39 H845" fill="none" stroke="#fcf4c4" stroke-width="2.1"/><path d="M705 429.44 H785.4 V528.39 H845" fill="none" stroke="#d8c168" stroke-width="0.95"/>
<path d="M705 442.80 H778.4 V542.30 H845" fill="none" stroke="#fcf4c4" stroke-width="2.1"/><path d="M705 442.80 H778.4 V542.30 H845" fill="none" stroke="#d8c168" stroke-width="0.95"/>
<path d="M705 449.40 H771.4 V556.21 H845" fill="none" stroke="#fcf4c4" stroke-width="2.1"/><path d="M705 449.40 H771.4 V556.21 H845" fill="none" stroke="#d8c168" stroke-width="0.95"/>
<path d="M705 476.60 H765.3 V570.12 H845" fill="none" stroke="#f1f7df" stroke-width="2.1"/><path d="M705 476.60 H765.3 V570.12 H845" fill="none" stroke="#a3b67a" stroke-width="0.95"/>
<path d="M705 489.98 H760.8 V584.03 H845" fill="none" stroke="#f1f7df" stroke-width="2.1"/><path d="M705 489.98 H760.8 V584.03 H845" fill="none" stroke="#a3b67a" stroke-width="0.95"/>
<path d="M705 503.36 H753.4 V597.94 H845" fill="none" stroke="#f1f7df" stroke-width="2.1"/><path d="M705 503.36 H753.4 V597.94 H845" fill="none" stroke="#a3b67a" stroke-width="0.95"/>
<path d="M705 516.74 H745.6 V611.85 H845" fill="none" stroke="#f1f7df" stroke-width="2.1"/><path d="M705 516.74 H745.6 V611.85 H845" fill="none" stroke="#a3b67a" stroke-width="0.95"/>
<path d="M705 530.12 H738.4 V625.76 H845" fill="none" stroke="#f1f7df" stroke-width="2.1"/><path d="M705 530.12 H738.4 V625.76 H845" fill="none" stroke="#a3b67a" stroke-width="0.95"/>
<path d="M705 543.50 H731.6 V639.67 H845" fill="none" stroke="#f1f7df" stroke-width="2.1"/><path d="M705 543.50 H731.6 V639.67 H845" fill="none" stroke="#a3b67a" stroke-width="0.95"/>
<path d="M705 556.88 H724.4 V653.58 H845" fill="none" stroke="#f1f7df" stroke-width="2.1"/><path d="M705 556.88 H724.4 V653.58 H845" fill="none" stroke="#a3b67a" stroke-width="0.95"/>
<path d="M705 570.26 H718.4 V667.49 H845" fill="none" stroke="#f1f7df" stroke-width="2.1"/><path d="M705 570.26 H718.4 V667.49 H845" fill="none" stroke="#a3b67a" stroke-width="0.95"/>
<path d="M607.00 339.82 L619.10 339.82 L631.64 343.00 L640.00 343.00" fill="none" stroke="#3a3a3a" stroke-width="0.75"/><rect x="603.00" y="338.92" width="3.6" height="1.8" fill="#555"/><path d="M607.00 346.46 L619.10 346.46 L631.64 343.00 L640.00 343.00" fill="none" stroke="#3a3a3a" stroke-width="0.75"/><rect x="603.00" y="345.56" width="3.6" height="1.8" fill="#555"/>
<path d="M607.00 346.46 L619.10 346.46 L631.64 349.60 L640.00 349.60" fill="none" stroke="#3a3a3a" stroke-width="0.75"/><rect x="603.00" y="345.56" width="3.6" height="1.8" fill="#555"/><path d="M607.00 353.10 L619.10 353.10 L631.64 349.60 L640.00 349.60" fill="none" stroke="#3a3a3a" stroke-width="0.75"/><rect x="603.00" y="352.20" width="3.6" height="1.8" fill="#555"/>
<path d="M607.00 359.74 L619.10 359.74 L631.64 362.96 L640.00 362.96" fill="none" stroke="#3a3a3a" stroke-width="0.75"/><rect x="603.00" y="358.84" width="3.6" height="1.8" fill="#555"/><path d="M607.00 366.38 L619.10 366.38 L631.64 362.96 L640.00 362.96" fill="none" stroke="#3a3a3a" stroke-width="0.75"/><rect x="603.00" y="365.48" width="3.6" height="1.8" fill="#555"/>
<path d="M607.00 366.38 L619.10 366.38 L631.64 369.56 L640.00 369.56" fill="none" stroke="#3a3a3a" stroke-width="0.75"/><rect x="603.00" y="365.48" width="3.6" height="1.8" fill="#555"/><path d="M607.00 373.02 L619.10 373.02 L631.64 369.56 L640.00 369.56" fill="none" stroke="#3a3a3a" stroke-width="0.75"/><rect x="603.00" y="372.12" width="3.6" height="1.8" fill="#555"/>
<path d="M607.00 379.66 L619.10 379.66 L631.64 382.92 L640.00 382.92" fill="none" stroke="#3a3a3a" stroke-width="0.75"/><rect x="603.00" y="378.76" width="3.6" height="1.8" fill="#555"/><path d="M607.00 386.30 L619.10 386.30 L631.64 382.92 L640.00 382.92" fill="none" stroke="#3a3a3a" stroke-width="0.75"/><rect x="603.00" y="385.40" width="3.6" height="1.8" fill="#555"/>
<path d="M607.00 386.30 L619.10 386.30 L631.64 389.52 L640.00 389.52" fill="none" stroke="#3a3a3a" stroke-width="0.75"/><rect x="603.00" y="385.40" width="3.6" height="1.8" fill="#555"/><path d="M607.00 392.94 L619.10 392.94 L631.64 389.52 L640.00 389.52" fill="none" stroke="#3a3a3a" stroke-width="0.75"/><rect x="603.00" y="392.04" width="3.6" height="1.8" fill="#555"/>
<path d="M607.00 399.58 L619.10 399.58 L631.64 402.88 L640.00 402.88" fill="none" stroke="#3a3a3a" stroke-width="0.75"/><rect x="603.00" y="398.68" width="3.6" height="1.8" fill="#555"/><path d="M607.00 406.22 L619.10 406.22 L631.64 402.88 L640.00 402.88" fill="none" stroke="#3a3a3a" stroke-width="0.75"/><rect x="603.00" y="405.32" width="3.6" height="1.8" fill="#555"/>
<path d="M607.00 406.22 L619.10 406.22 L631.64 409.48 L640.00 409.48" fill="none" stroke="#3a3a3a" stroke-width="0.75"/><rect x="603.00" y="405.32" width="3.6" height="1.8" fill="#555"/><path d="M607.00 412.86 L619.10 412.86 L631.64 409.48 L640.00 409.48" fill="none" stroke="#3a3a3a" stroke-width="0.75"/><rect x="603.00" y="411.96" width="3.6" height="1.8" fill="#555"/>
<path d="M607.00 419.50 L619.10 419.50 L631.64 422.84 L640.00 422.84" fill="none" stroke="#3a3a3a" stroke-width="0.75"/><rect x="603.00" y="418.60" width="3.6" height="1.8" fill="#555"/><path d="M607.00 426.14 L619.10 426.14 L631.64 422.84 L640.00 422.84" fill="none" stroke="#3a3a3a" stroke-width="0.75"/><rect x="603.00" y="425.24" width="3.6" height="1.8" fill="#555"/>
<path d="M607.00 426.14 L619.10 426.14 L631.64 429.44 L640.00 429.44" fill="none" stroke="#3a3a3a" stroke-width="0.75"/><rect x="603.00" y="425.24" width="3.6" height="1.8" fill="#555"/><path d="M607.00 432.78 L619.10 432.78 L631.64 429.44 L640.00 429.44" fill="none" stroke="#3a3a3a" stroke-width="0.75"/><rect x="603.00" y="431.88" width="3.6" height="1.8" fill="#555"/>
<path d="M607.00 439.42 L619.10 439.42 L631.64 442.80 L640.00 442.80" fill="none" stroke="#3a3a3a" stroke-width="0.75"/><rect x="603.00" y="438.52" width="3.6" height="1.8" fill="#555"/><path d="M607.00 446.06 L619.10 446.06 L631.64 442.80 L640.00 442.80" fill="none" stroke="#3a3a3a" stroke-width="0.75"/><rect x="603.00" y="445.16" width="3.6" height="1.8" fill="#555"/>
<path d="M607.00 446.06 L619.10 446.06 L631.64 449.40 L640.00 449.40" fill="none" stroke="#3a3a3a" stroke-width="0.75"/><rect x="603.00" y="445.16" width="3.6" height="1.8" fill="#555"/><path d="M607.00 452.70 L619.10 452.70 L631.64 449.40 L640.00 449.40" fill="none" stroke="#3a3a3a" stroke-width="0.75"/><rect x="603.00" y="451.80" width="3.6" height="1.8" fill="#555"/>
<path d="M607.00 473.44 L618.65 473.44 L630.86 476.60 L639.00 476.60" fill="none" stroke="#3a3a3a" stroke-width="0.75"/><rect x="603.00" y="472.54" width="3.6" height="1.8" fill="#555"/><path d="M607.00 480.11 L618.65 480.11 L630.86 476.60 L639.00 476.60" fill="none" stroke="#3a3a3a" stroke-width="0.75"/><rect x="603.00" y="479.21" width="3.6" height="1.8" fill="#555"/>
<path d="M607.00 486.78 L618.65 486.78 L630.86 489.98 L639.00 489.98" fill="none" stroke="#3a3a3a" stroke-width="0.75"/><rect x="603.00" y="485.88" width="3.6" height="1.8" fill="#555"/><path d="M607.00 493.45 L618.65 493.45 L630.86 489.98 L639.00 489.98" fill="none" stroke="#3a3a3a" stroke-width="0.75"/><rect x="603.00" y="492.55" width="3.6" height="1.8" fill="#555"/>
<path d="M607.00 500.12 L618.65 500.12 L630.86 503.36 L639.00 503.36" fill="none" stroke="#3a3a3a" stroke-width="0.75"/><rect x="603.00" y="499.22" width="3.6" height="1.8" fill="#555"/><path d="M607.00 506.79 L618.65 506.79 L630.86 503.36 L639.00 503.36" fill="none" stroke="#3a3a3a" stroke-width="0.75"/><rect x="603.00" y="505.89" width="3.6" height="1.8" fill="#555"/>
<path d="M607.00 513.46 L618.65 513.46 L630.86 516.74 L639.00 516.74" fill="none" stroke="#3a3a3a" stroke-width="0.75"/><rect x="603.00" y="512.56" width="3.6" height="1.8" fill="#555"/><path d="M607.00 520.12 L618.65 520.12 L630.86 516.74 L639.00 516.74" fill="none" stroke="#3a3a3a" stroke-width="0.75"/><rect x="603.00" y="519.23" width="3.6" height="1.8" fill="#555"/>
<path d="M607.00 526.80 L618.65 526.80 L630.86 530.12 L639.00 530.12" fill="none" stroke="#3a3a3a" stroke-width="0.75"/><rect x="603.00" y="525.90" width="3.6" height="1.8" fill="#555"/><path d="M607.00 533.47 L618.65 533.47 L630.86 530.12 L639.00 530.12" fill="none" stroke="#3a3a3a" stroke-width="0.75"/><rect x="603.00" y="532.57" width="3.6" height="1.8" fill="#555"/>
<path d="M607.00 540.13 L618.65 540.13 L630.86 543.50 L639.00 543.50" fill="none" stroke="#3a3a3a" stroke-width="0.75"/><rect x="603.00" y="539.24" width="3.6" height="1.8" fill="#555"/><path d="M607.00 546.81 L618.65 546.81 L630.86 543.50 L639.00 543.50" fill="none" stroke="#3a3a3a" stroke-width="0.75"/><rect x="603.00" y="545.91" width="3.6" height="1.8" fill="#555"/>
<path d="M607.00 553.48 L618.65 553.48 L630.86 556.88 L639.00 556.88" fill="none" stroke="#3a3a3a" stroke-width="0.75"/><rect x="603.00" y="552.58" width="3.6" height="1.8" fill="#555"/><path d="M607.00 560.14 L618.65 560.14 L630.86 556.88 L639.00 556.88" fill="none" stroke="#3a3a3a" stroke-width="0.75"/><rect x="603.00" y="559.25" width="3.6" height="1.8" fill="#555"/>
<path d="M607.00 566.82 L618.65 566.82 L630.86 570.26 L639.00 570.26" fill="none" stroke="#3a3a3a" stroke-width="0.75"/><rect x="603.00" y="565.92" width="3.6" height="1.8" fill="#555"/><path d="M607.00 573.49 L618.65 573.49 L630.86 570.26 L639.00 570.26" fill="none" stroke="#3a3a3a" stroke-width="0.75"/><rect x="603.00" y="572.59" width="3.6" height="1.8" fill="#555"/>
<rect x="639.50" y="339.85" width="66.00" height="6.30" rx="3.15" fill="#fff" stroke="#222" stroke-width="1.0"/><ellipse cx="642.95" cy="343.00" rx="3.15" ry="2.95" fill="#fff" stroke="#222" stroke-width="0.9"/><text x="675.65" y="344.40" font-family="Liberation Sans, sans-serif" font-size="3.9" font-weight="bold" fill="#333" text-anchor="middle">I-1 MAT 24 Ω 2Ω2</text>
<rect x="639.50" y="346.45" width="66.00" height="6.30" rx="3.15" fill="#fff" stroke="#222" stroke-width="1.0"/><ellipse cx="642.95" cy="349.60" rx="3.15" ry="2.95" fill="#fff" stroke="#222" stroke-width="0.9"/><text x="675.65" y="351.00" font-family="Liberation Sans, sans-serif" font-size="3.9" font-weight="bold" fill="#333" text-anchor="middle">I-2 MAT 23 Ω18</text>
<rect x="639.50" y="359.81" width="66.00" height="6.30" rx="3.15" fill="#fff" stroke="#222" stroke-width="1.0"/><ellipse cx="642.95" cy="362.96" rx="3.15" ry="2.95" fill="#fff" stroke="#222" stroke-width="0.9"/><text x="675.65" y="364.36" font-family="Liberation Sans, sans-serif" font-size="3.9" font-weight="bold" fill="#333" text-anchor="middle">I-3 MAT 23 Ω18</text>
<rect x="639.50" y="366.41" width="66.00" height="6.30" rx="3.15" fill="#fff" stroke="#222" stroke-width="1.0"/><ellipse cx="642.95" cy="369.56" rx="3.15" ry="2.95" fill="#fff" stroke="#222" stroke-width="0.9"/><text x="675.65" y="370.96" font-family="Liberation Sans, sans-serif" font-size="3.9" font-weight="bold" fill="#333" text-anchor="middle">I-4 SA SP 23 Ω18</text>
<rect x="639.50" y="379.77" width="66.00" height="6.30" rx="3.15" fill="#fff" stroke="#222" stroke-width="1.0"/><ellipse cx="642.95" cy="382.92" rx="3.15" ry="2.95" fill="#fff" stroke="#222" stroke-width="0.9"/><text x="675.65" y="384.32" font-family="Liberation Sans, sans-serif" font-size="3.9" font-weight="bold" fill="#333" text-anchor="middle">I-5 SFS 8 Ω22</text>
<rect x="639.50" y="386.37" width="66.00" height="6.30" rx="3.15" fill="#fff" stroke="#222" stroke-width="1.0"/><ellipse cx="642.95" cy="389.52" rx="3.15" ry="2.95" fill="#fff" stroke="#222" stroke-width="0.9"/><text x="675.65" y="390.92" font-family="Liberation Sans, sans-serif" font-size="3.9" font-weight="bold" fill="#333" text-anchor="middle">I-6 FZ 23 Ω22</text>
<rect x="639.50" y="399.73" width="66.00" height="6.30" rx="3.15" fill="#fff" stroke="#222" stroke-width="1.0"/><ellipse cx="642.95" cy="402.88" rx="3.15" ry="2.95" fill="#fff" stroke="#222" stroke-width="0.9"/><text x="675.65" y="404.28" font-family="Liberation Sans, sans-serif" font-size="3.9" font-weight="bold" fill="#333" text-anchor="middle">I-7 SA SMK 14 Ω22</text>
<rect x="639.50" y="406.33" width="66.00" height="6.30" rx="3.15" fill="#fff" stroke="#222" stroke-width="1.0"/><ellipse cx="642.95" cy="409.48" rx="3.15" ry="2.95" fill="#fff" stroke="#222" stroke-width="0.9"/><text x="675.65" y="410.88" font-family="Liberation Sans, sans-serif" font-size="3.9" font-weight="bold" fill="#333" text-anchor="middle">I-8 RAH 21 Ω18</text>
<rect x="639.50" y="419.69" width="66.00" height="6.30" rx="3.15" fill="#fff" stroke="#222" stroke-width="1.0"/><ellipse cx="642.95" cy="422.84" rx="3.15" ry="2.95" fill="#fff" stroke="#222" stroke-width="0.9"/><text x="675.65" y="424.24" font-family="Liberation Sans, sans-serif" font-size="3.9" font-weight="bold" fill="#333" text-anchor="middle">I-9 RA CO2 13 Ω18</text>
<rect x="639.50" y="426.29" width="66.00" height="6.30" rx="3.15" fill="#fff" stroke="#222" stroke-width="1.0"/><ellipse cx="642.95" cy="429.44" rx="3.15" ry="2.95" fill="#fff" stroke="#222" stroke-width="0.9"/><text x="675.65" y="430.84" font-family="Liberation Sans, sans-serif" font-size="3.9" font-weight="bold" fill="#333" text-anchor="middle">I-10 OA AFS 23 Ω18</text>
<rect x="639.50" y="439.65" width="66.00" height="6.30" rx="3.15" fill="#fff" stroke="#222" stroke-width="1.0"/><ellipse cx="642.95" cy="442.80" rx="3.15" ry="2.95" fill="#fff" stroke="#222" stroke-width="0.9"/><text x="675.65" y="444.20" font-family="Liberation Sans, sans-serif" font-size="3.9" font-weight="bold" fill="#333" text-anchor="middle">I-11 HWP 8 Ω22</text>
<rect x="639.50" y="446.25" width="66.00" height="6.30" rx="3.15" fill="#fff" stroke="#222" stroke-width="1.0"/><ellipse cx="642.95" cy="449.40" rx="3.15" ry="2.95" fill="#fff" stroke="#222" stroke-width="0.9"/><text x="675.65" y="450.80" font-family="Liberation Sans, sans-serif" font-size="3.9" font-weight="bold" fill="#333" text-anchor="middle">I-12 FILT 8 Ω22</text>
<rect x="638.50" y="473.30" width="67.00" height="6.60" rx="3.30" fill="#fff" stroke="#222" stroke-width="1.0"/><ellipse cx="642.10" cy="476.60" rx="3.30" ry="3.10" fill="#fff" stroke="#222" stroke-width="0.9"/><text x="675.30" y="478.00" font-family="Liberation Sans, sans-serif" font-size="3.9" font-weight="bold" fill="#333" text-anchor="middle">O-1 SFC 2 Ω22</text>
<rect x="638.50" y="486.68" width="67.00" height="6.60" rx="3.30" fill="#fff" stroke="#222" stroke-width="1.0"/><ellipse cx="642.10" cy="489.98" rx="3.30" ry="3.10" fill="#fff" stroke="#222" stroke-width="0.9"/><text x="675.30" y="491.38" font-family="Liberation Sans, sans-serif" font-size="3.9" font-weight="bold" fill="#333" text-anchor="middle">O-2 HWP 8 2 Ω22</text>
<rect x="638.50" y="500.06" width="67.00" height="6.60" rx="3.30" fill="#fff" stroke="#222" stroke-width="1.0"/><ellipse cx="642.10" cy="503.36" rx="3.30" ry="3.10" fill="#fff" stroke="#222" stroke-width="0.9"/><text x="675.30" y="504.76" font-family="Liberation Sans, sans-serif" font-size="3.9" font-weight="bold" fill="#333" text-anchor="middle">O-3 SF MOD 14 Ω22</text>
<rect x="638.50" y="513.44" width="67.00" height="6.60" rx="3.30" fill="#fff" stroke="#222" stroke-width="1.0"/><ellipse cx="642.10" cy="516.74" rx="3.30" ry="3.10" fill="#fff" stroke="#222" stroke-width="0.9"/><text x="675.30" y="518.14" font-family="Liberation Sans, sans-serif" font-size="3.9" font-weight="bold" fill="#333" text-anchor="middle">O-4 OAD M 10 Ω18</text>
<rect x="638.50" y="526.82" width="67.00" height="6.60" rx="3.30" fill="#fff" stroke="#222" stroke-width="1.0"/><ellipse cx="642.10" cy="530.12" rx="3.30" ry="3.10" fill="#fff" stroke="#222" stroke-width="0.9"/><text x="675.30" y="531.52" font-family="Liberation Sans, sans-serif" font-size="3.9" font-weight="bold" fill="#333" text-anchor="middle">O-5 HVC M 23 Ω18</text>
<rect x="638.50" y="540.20" width="67.00" height="6.60" rx="3.30" fill="#fff" stroke="#222" stroke-width="1.0"/><ellipse cx="642.10" cy="543.50" rx="3.30" ry="3.10" fill="#fff" stroke="#222" stroke-width="0.9"/><text x="675.30" y="544.90" font-family="Liberation Sans, sans-serif" font-size="3.9" font-weight="bold" fill="#333" text-anchor="middle">O-6 CVC M 23 Ω18</text>
<rect x="638.50" y="553.58" width="67.00" height="6.60" rx="3.30" fill="#fff" stroke="#222" stroke-width="1.0"/><ellipse cx="642.10" cy="556.88" rx="3.30" ry="3.10" fill="#fff" stroke="#222" stroke-width="0.9"/><text x="675.30" y="558.28" font-family="Liberation Sans, sans-serif" font-size="3.9" font-weight="bold" fill="#333" text-anchor="middle">O-7 OAD M 10 Ω18</text>
<rect x="638.50" y="566.96" width="67.00" height="6.60" rx="3.30" fill="#fff" stroke="#222" stroke-width="1.0"/><ellipse cx="642.10" cy="570.26" rx="3.30" ry="3.10" fill="#fff" stroke="#222" stroke-width="0.9"/><text x="675.30" y="571.66" font-family="Liberation Sans, sans-serif" font-size="3.9" font-weight="bold" fill="#333" text-anchor="middle">O-8 RAD M 10 Ω18</text>
<path d="M607.00 650.70 L618.65 650.70 L630.86 654.00 L639.00 654.00" fill="none" stroke="#3a3a3a" stroke-width="0.75"/><rect x="603.00" y="649.80" width="3.6" height="1.8" fill="#555"/><path d="M607.00 657.70 L618.65 657.70 L630.86 654.00 L639.00 654.00" fill="none" stroke="#3a3a3a" stroke-width="0.75"/><rect x="603.00" y="656.80" width="3.6" height="1.8" fill="#555"/>
<text x="653.5" y="650" font-family="Liberation Sans, sans-serif" font-size="7" fill="#222" text-anchor="middle">24 VAC</text>
<rect x="639.5" y="650.6" width="28.5" height="7" rx="3" fill="#fff" stroke="#222" stroke-width="0.8"/>
<ellipse cx="642" cy="654.1" rx="2.3" ry="3.3" fill="#fff" stroke="#222" stroke-width="0.7"/>
<text x="654" y="656" font-family="Liberation Sans, sans-serif" font-size="4" fill="#333" text-anchor="middle">18/2</text>
<path d="M668 654 L673 650 M668 654 L673 657" stroke="#222" stroke-width="0.6"/>
<rect x="676.5" y="643.5" width="23.5" height="22" fill="#fff" stroke="#111" stroke-width="1"/>
<rect x="672.5" y="646.5" width="4" height="6" fill="#fff" stroke="#111" stroke-width="0.8"/><rect x="672.5" y="657" width="4" height="6" fill="#fff" stroke="#111" stroke-width="0.8"/>
<rect x="700" y="646.5" width="4" height="6" fill="#fff" stroke="#111" stroke-width="0.8"/><rect x="700" y="657" width="4" height="6" fill="#fff" stroke="#111" stroke-width="0.8"/>
<path d="M679 646 V663 M698 646 V663 M687.5 645 V664 M689 645 V664" stroke="#111" stroke-width="0.7"/>
<path d="M679 647 H684 Q686 649 684 651 Q686 653 684 655 Q686 657 684 659 Q686 661 684 663 H679 M698 647 H693 Q691 649 693 651 Q691 653 693 655 Q691 657 693 659 Q691 661 693 663 H698" stroke="#111" stroke-width="0.6" fill="none"/>
<path d="M704 651 H712 M704 657.5 H712" stroke="#111" stroke-width="0.8"/>
<path d="M607.00 674.80 L612.35 674.80 L619.94 678.00 L625.00 678.00" fill="none" stroke="#3a3a3a" stroke-width="0.75"/><rect x="603.00" y="673.90" width="3.6" height="1.8" fill="#555"/><path d="M607.00 681.50 L612.35 681.50 L619.94 678.00 L625.00 678.00" fill="none" stroke="#3a3a3a" stroke-width="0.75"/><rect x="603.00" y="680.60" width="3.6" height="1.8" fill="#555"/>
<path d="M603 685 H625 V673" stroke="#111" stroke-width="0.6" fill="none"/>
<path d="M625 678 H638.6" stroke="#111" stroke-width="0.6"/>
<rect x="638.6" y="674" width="19.7" height="7.7" rx="3" fill="#d94ed2"/>
<text x="648.5" y="679.8" font-family="Liberation Sans, sans-serif" font-size="4.6" font-weight="bold" fill="#5a1b58" text-anchor="middle">22/4</text><rect x="549.3" y="336.3" width="16" height="348.5" fill="#5b5b5b" stroke="#111" stroke-width="0.9"/>
<text transform="translate(560.2,511) rotate(-90)" font-family="Liberation Sans, sans-serif" font-size="8.2" font-weight="bold" fill="#fff" text-anchor="middle">EBC-400</text>
<rect x="565.5" y="336.50" width="6.3" height="119.52" fill="#c9c9d0"/>
<rect x="571.8" y="336.50" width="6.6" height="119.52" fill="#f2ef1c"/>
<rect x="578.4" y="336.50" width="15.8" height="119.52" fill="#fff"/>
<line x1="571.8" y1="336.50" x2="601.6" y2="336.50" stroke="#000" stroke-width="0.85"/>
<text x="575.1" y="341.28" font-family="Liberation Sans, sans-serif" font-size="3.6" fill="#222" text-anchor="middle">1</text>
<text x="586.3" y="341.15" font-family="Liberation Sans, sans-serif" font-size="3.4" fill="#555" text-anchor="middle">UI1</text>
<circle cx="597.90" cy="339.82" r="2.30" fill="#141414"/><path d="M596.75 338.67 L599.05 340.97" stroke="#ddd" stroke-width="0.55"/>
<line x1="571.8" y1="343.14" x2="601.6" y2="343.14" stroke="#000" stroke-width="0.85"/>
<text x="575.1" y="347.92" font-family="Liberation Sans, sans-serif" font-size="3.6" fill="#222" text-anchor="middle">2</text>
<text x="586.3" y="347.79" font-family="Liberation Sans, sans-serif" font-size="3.4" fill="#555" text-anchor="middle">GND</text>
<circle cx="597.90" cy="346.46" r="2.30" fill="#141414"/><path d="M596.75 345.31 L599.05 347.61" stroke="#ddd" stroke-width="0.55"/>
<line x1="571.8" y1="349.78" x2="601.6" y2="349.78" stroke="#000" stroke-width="0.85"/>
<text x="575.1" y="354.56" font-family="Liberation Sans, sans-serif" font-size="3.6" fill="#222" text-anchor="middle">3</text>
<text x="586.3" y="354.43" font-family="Liberation Sans, sans-serif" font-size="3.4" fill="#555" text-anchor="middle">UI2</text>
<circle cx="597.90" cy="353.10" r="2.30" fill="#141414"/><path d="M596.75 351.95 L599.05 354.25" stroke="#ddd" stroke-width="0.55"/>
<line x1="571.8" y1="356.42" x2="601.6" y2="356.42" stroke="#000" stroke-width="0.85"/>
<text x="575.1" y="361.20" font-family="Liberation Sans, sans-serif" font-size="3.6" fill="#222" text-anchor="middle">4</text>
<text x="586.3" y="361.07" font-family="Liberation Sans, sans-serif" font-size="3.4" fill="#555" text-anchor="middle">UI3</text>
<circle cx="597.90" cy="359.74" r="2.30" fill="#141414"/><path d="M596.75 358.59 L599.05 360.89" stroke="#ddd" stroke-width="0.55"/>
<line x1="571.8" y1="363.06" x2="601.6" y2="363.06" stroke="#000" stroke-width="0.85"/>
<text x="575.1" y="367.84" font-family="Liberation Sans, sans-serif" font-size="3.6" fill="#222" text-anchor="middle">5</text>
<text x="586.3" y="367.71" font-family="Liberation Sans, sans-serif" font-size="3.4" fill="#555" text-anchor="middle">GND</text>
<circle cx="597.90" cy="366.38" r="2.30" fill="#141414"/><path d="M596.75 365.23 L599.05 367.53" stroke="#ddd" stroke-width="0.55"/>
<line x1="571.8" y1="369.70" x2="601.6" y2="369.70" stroke="#000" stroke-width="0.85"/>
<text x="575.1" y="374.48" font-family="Liberation Sans, sans-serif" font-size="3.6" fill="#222" text-anchor="middle">6</text>
<text x="586.3" y="374.35" font-family="Liberation Sans, sans-serif" font-size="3.4" fill="#555" text-anchor="middle">UI4</text>
<circle cx="597.90" cy="373.02" r="2.30" fill="#141414"/><path d="M596.75 371.87 L599.05 374.17" stroke="#ddd" stroke-width="0.55"/>
<line x1="571.8" y1="376.34" x2="601.6" y2="376.34" stroke="#000" stroke-width="0.85"/>
<text x="575.1" y="381.12" font-family="Liberation Sans, sans-serif" font-size="3.6" fill="#222" text-anchor="middle">7</text>
<text x="586.3" y="380.99" font-family="Liberation Sans, sans-serif" font-size="3.4" fill="#555" text-anchor="middle">UI5</text>
<circle cx="597.90" cy="379.66" r="2.30" fill="#141414"/><path d="M596.75 378.51 L599.05 380.81" stroke="#ddd" stroke-width="0.55"/>
<line x1="571.8" y1="382.98" x2="601.6" y2="382.98" stroke="#000" stroke-width="0.85"/>
<text x="575.1" y="387.76" font-family="Liberation Sans, sans-serif" font-size="3.6" fill="#222" text-anchor="middle">8</text>
<text x="586.3" y="387.63" font-family="Liberation Sans, sans-serif" font-size="3.4" fill="#555" text-anchor="middle">GND</text>
<circle cx="597.90" cy="386.30" r="2.30" fill="#141414"/><path d="M596.75 385.15 L599.05 387.45" stroke="#ddd" stroke-width="0.55"/>
<line x1="571.8" y1="389.62" x2="601.6" y2="389.62" stroke="#000" stroke-width="0.85"/>
<text x="575.1" y="394.40" font-family="Liberation Sans, sans-serif" font-size="3.6" fill="#222" text-anchor="middle">9</text>
<text x="586.3" y="394.27" font-family="Liberation Sans, sans-serif" font-size="3.4" fill="#555" text-anchor="middle">UI6</text>
<circle cx="597.90" cy="392.94" r="2.30" fill="#141414"/><path d="M596.75 391.79 L599.05 394.09" stroke="#ddd" stroke-width="0.55"/>
<line x1="571.8" y1="396.26" x2="601.6" y2="396.26" stroke="#000" stroke-width="0.85"/>
<text x="575.1" y="401.04" font-family="Liberation Sans, sans-serif" font-size="3.6" fill="#222" text-anchor="middle">10</text>
<text x="586.3" y="400.91" font-family="Liberation Sans, sans-serif" font-size="3.4" fill="#555" text-anchor="middle">UI7</text>
<circle cx="597.90" cy="399.58" r="2.30" fill="#141414"/><path d="M596.75 398.43 L599.05 400.73" stroke="#ddd" stroke-width="0.55"/>
<line x1="571.8" y1="402.90" x2="601.6" y2="402.90" stroke="#000" stroke-width="0.85"/>
<text x="575.1" y="407.68" font-family="Liberation Sans, sans-serif" font-size="3.6" fill="#222" text-anchor="middle">11</text>
<text x="586.3" y="407.55" font-family="Liberation Sans, sans-serif" font-size="3.4" fill="#555" text-anchor="middle">GND</text>
<circle cx="597.90" cy="406.22" r="2.30" fill="#141414"/><path d="M596.75 405.07 L599.05 407.37" stroke="#ddd" stroke-width="0.55"/>
<line x1="571.8" y1="409.54" x2="601.6" y2="409.54" stroke="#000" stroke-width="0.85"/>
<text x="575.1" y="414.32" font-family="Liberation Sans, sans-serif" font-size="3.6" fill="#222" text-anchor="middle">12</text>
<text x="586.3" y="414.19" font-family="Liberation Sans, sans-serif" font-size="3.4" fill="#555" text-anchor="middle">UI8</text>
<circle cx="597.90" cy="412.86" r="2.30" fill="#141414"/><path d="M596.75 411.71 L599.05 414.01" stroke="#ddd" stroke-width="0.55"/>
<line x1="571.8" y1="416.18" x2="601.6" y2="416.18" stroke="#000" stroke-width="0.85"/>
<text x="575.1" y="420.96" font-family="Liberation Sans, sans-serif" font-size="3.6" fill="#222" text-anchor="middle">13</text>
<text x="586.3" y="420.83" font-family="Liberation Sans, sans-serif" font-size="3.4" fill="#555" text-anchor="middle">UI9</text>
<circle cx="597.90" cy="419.50" r="2.30" fill="#141414"/><path d="M596.75 418.35 L599.05 420.65" stroke="#ddd" stroke-width="0.55"/>
<line x1="571.8" y1="422.82" x2="601.6" y2="422.82" stroke="#000" stroke-width="0.85"/>
<text x="575.1" y="427.60" font-family="Liberation Sans, sans-serif" font-size="3.6" fill="#222" text-anchor="middle">14</text>
<text x="586.3" y="427.47" font-family="Liberation Sans, sans-serif" font-size="3.4" fill="#555" text-anchor="middle">GND</text>
<circle cx="597.90" cy="426.14" r="2.30" fill="#141414"/><path d="M596.75 424.99 L599.05 427.29" stroke="#ddd" stroke-width="0.55"/>
<line x1="571.8" y1="429.46" x2="601.6" y2="429.46" stroke="#000" stroke-width="0.85"/>
<text x="575.1" y="434.24" font-family="Liberation Sans, sans-serif" font-size="3.6" fill="#222" text-anchor="middle">15</text>
<text x="586.3" y="434.11" font-family="Liberation Sans, sans-serif" font-size="3.4" fill="#555" text-anchor="middle">UI10</text>
<circle cx="597.90" cy="432.78" r="2.30" fill="#141414"/><path d="M596.75 431.63 L599.05 433.93" stroke="#ddd" stroke-width="0.55"/>
<line x1="571.8" y1="436.10" x2="601.6" y2="436.10" stroke="#000" stroke-width="0.85"/>
<text x="575.1" y="440.88" font-family="Liberation Sans, sans-serif" font-size="3.6" fill="#222" text-anchor="middle">16</text>
<text x="586.3" y="440.75" font-family="Liberation Sans, sans-serif" font-size="3.4" fill="#555" text-anchor="middle">UI11</text>
<circle cx="597.90" cy="439.42" r="2.30" fill="#141414"/><path d="M596.75 438.27 L599.05 440.57" stroke="#ddd" stroke-width="0.55"/>
<line x1="571.8" y1="442.74" x2="601.6" y2="442.74" stroke="#000" stroke-width="0.85"/>
<text x="575.1" y="447.52" font-family="Liberation Sans, sans-serif" font-size="3.6" fill="#222" text-anchor="middle">17</text>
<text x="586.3" y="447.39" font-family="Liberation Sans, sans-serif" font-size="3.4" fill="#555" text-anchor="middle">GND</text>
<circle cx="597.90" cy="446.06" r="2.30" fill="#141414"/><path d="M596.75 444.91 L599.05 447.21" stroke="#ddd" stroke-width="0.55"/>
<line x1="571.8" y1="449.38" x2="601.6" y2="449.38" stroke="#000" stroke-width="0.85"/>
<text x="575.1" y="454.16" font-family="Liberation Sans, sans-serif" font-size="3.6" fill="#222" text-anchor="middle">18</text>
<text x="586.3" y="454.03" font-family="Liberation Sans, sans-serif" font-size="3.4" fill="#555" text-anchor="middle">UI12</text>
<circle cx="597.90" cy="452.70" r="2.30" fill="#141414"/><path d="M596.75 451.55 L599.05 453.85" stroke="#ddd" stroke-width="0.55"/>
<rect x="565.5" y="336.50" width="36.1" height="119.52" fill="none" stroke="#111" stroke-width="0.9"/>
<line x1="578.4" y1="336.50" x2="578.4" y2="456.02" stroke="#111" stroke-width="0.6"/>
<line x1="594.2" y1="336.50" x2="594.2" y2="456.02" stroke="#111" stroke-width="0.9"/>
<line x1="571.8" y1="336.50" x2="571.8" y2="456.02" stroke="#111" stroke-width="0.6"/>
<text transform="translate(569.90,396.26) rotate(-90)" font-family="Liberation Sans, sans-serif" font-size="3.4" fill="#444" text-anchor="middle">UNIVERSAL INPUTS</text>
<rect x="565.5" y="470.10" width="6.3" height="160.08" fill="#c9c9d0"/>
<rect x="571.8" y="470.10" width="6.6" height="160.08" fill="#7cc143"/>
<rect x="578.4" y="470.10" width="15.8" height="160.08" fill="#fff"/>
<line x1="571.8" y1="470.10" x2="601.6" y2="470.10" stroke="#000" stroke-width="0.85"/>
<text x="575.1" y="474.90" font-family="Liberation Sans, sans-serif" font-size="3.6" fill="#222" text-anchor="middle">1</text>
<text x="586.3" y="474.77" font-family="Liberation Sans, sans-serif" font-size="3.4" fill="#555" text-anchor="middle">UO1</text>
<circle cx="597.90" cy="473.44" r="2.30" fill="#141414"/><path d="M596.75 472.29 L599.05 474.58" stroke="#ddd" stroke-width="0.55"/>
<line x1="571.8" y1="476.77" x2="601.6" y2="476.77" stroke="#000" stroke-width="0.85"/>
<text x="575.1" y="481.57" font-family="Liberation Sans, sans-serif" font-size="3.6" fill="#222" text-anchor="middle">2</text>
<text x="586.3" y="481.44" font-family="Liberation Sans, sans-serif" font-size="3.4" fill="#555" text-anchor="middle">GND</text>
<circle cx="597.90" cy="480.11" r="2.30" fill="#141414"/><path d="M596.75 478.96 L599.05 481.25" stroke="#ddd" stroke-width="0.55"/>
<line x1="571.8" y1="483.44" x2="601.6" y2="483.44" stroke="#000" stroke-width="0.85"/>
<text x="575.1" y="488.24" font-family="Liberation Sans, sans-serif" font-size="3.6" fill="#222" text-anchor="middle">3</text>
<text x="586.3" y="488.11" font-family="Liberation Sans, sans-serif" font-size="3.4" fill="#555" text-anchor="middle">UO2</text>
<circle cx="597.90" cy="486.77" r="2.30" fill="#141414"/><path d="M596.75 485.62 L599.05 487.92" stroke="#ddd" stroke-width="0.55"/>
<line x1="571.8" y1="490.11" x2="601.6" y2="490.11" stroke="#000" stroke-width="0.85"/>
<text x="575.1" y="494.91" font-family="Liberation Sans, sans-serif" font-size="3.6" fill="#222" text-anchor="middle">4</text>
<text x="586.3" y="494.78" font-family="Liberation Sans, sans-serif" font-size="3.4" fill="#555" text-anchor="middle">GND</text>
<circle cx="597.90" cy="493.44" r="2.30" fill="#141414"/><path d="M596.75 492.30 L599.05 494.59" stroke="#ddd" stroke-width="0.55"/>
<line x1="571.8" y1="496.78" x2="601.6" y2="496.78" stroke="#000" stroke-width="0.85"/>
<text x="575.1" y="501.58" font-family="Liberation Sans, sans-serif" font-size="3.6" fill="#222" text-anchor="middle">5</text>
<text x="586.3" y="501.45" font-family="Liberation Sans, sans-serif" font-size="3.4" fill="#555" text-anchor="middle">UO3</text>
<circle cx="597.90" cy="500.12" r="2.30" fill="#141414"/><path d="M596.75 498.97 L599.05 501.26" stroke="#ddd" stroke-width="0.55"/>
<line x1="571.8" y1="503.45" x2="601.6" y2="503.45" stroke="#000" stroke-width="0.85"/>
<text x="575.1" y="508.25" font-family="Liberation Sans, sans-serif" font-size="3.6" fill="#222" text-anchor="middle">6</text>
<text x="586.3" y="508.12" font-family="Liberation Sans, sans-serif" font-size="3.4" fill="#555" text-anchor="middle">GND</text>
<circle cx="597.90" cy="506.79" r="2.30" fill="#141414"/><path d="M596.75 505.64 L599.05 507.94" stroke="#ddd" stroke-width="0.55"/>
<line x1="571.8" y1="510.12" x2="601.6" y2="510.12" stroke="#000" stroke-width="0.85"/>
<text x="575.1" y="514.92" font-family="Liberation Sans, sans-serif" font-size="3.6" fill="#222" text-anchor="middle">7</text>
<text x="586.3" y="514.79" font-family="Liberation Sans, sans-serif" font-size="3.4" fill="#555" text-anchor="middle">UO4</text>
<circle cx="597.90" cy="513.46" r="2.30" fill="#141414"/><path d="M596.75 512.31 L599.05 514.61" stroke="#ddd" stroke-width="0.55"/>
<line x1="571.8" y1="516.79" x2="601.6" y2="516.79" stroke="#000" stroke-width="0.85"/>
<text x="575.1" y="521.59" font-family="Liberation Sans, sans-serif" font-size="3.6" fill="#222" text-anchor="middle">8</text>
<text x="586.3" y="521.46" font-family="Liberation Sans, sans-serif" font-size="3.4" fill="#555" text-anchor="middle">GND</text>
<circle cx="597.90" cy="520.12" r="2.30" fill="#141414"/><path d="M596.75 518.98 L599.05 521.27" stroke="#ddd" stroke-width="0.55"/>
<line x1="571.8" y1="523.46" x2="601.6" y2="523.46" stroke="#000" stroke-width="0.85"/>
<text x="575.1" y="528.26" font-family="Liberation Sans, sans-serif" font-size="3.6" fill="#222" text-anchor="middle">9</text>
<text x="586.3" y="528.13" font-family="Liberation Sans, sans-serif" font-size="3.4" fill="#555" text-anchor="middle">UO5</text>
<circle cx="597.90" cy="526.80" r="2.30" fill="#141414"/><path d="M596.75 525.65 L599.05 527.95" stroke="#ddd" stroke-width="0.55"/>
<line x1="571.8" y1="530.13" x2="601.6" y2="530.13" stroke="#000" stroke-width="0.85"/>
<text x="575.1" y="534.93" font-family="Liberation Sans, sans-serif" font-size="3.6" fill="#222" text-anchor="middle">10</text>
<text x="586.3" y="534.80" font-family="Liberation Sans, sans-serif" font-size="3.4" fill="#555" text-anchor="middle">GND</text>
<circle cx="597.90" cy="533.47" r="2.30" fill="#141414"/><path d="M596.75 532.32 L599.05 534.62" stroke="#ddd" stroke-width="0.55"/>
<line x1="571.8" y1="536.80" x2="601.6" y2="536.80" stroke="#000" stroke-width="0.85"/>
<text x="575.1" y="541.60" font-family="Liberation Sans, sans-serif" font-size="3.6" fill="#222" text-anchor="middle">11</text>
<text x="586.3" y="541.47" font-family="Liberation Sans, sans-serif" font-size="3.4" fill="#555" text-anchor="middle">UO6</text>
<circle cx="597.90" cy="540.14" r="2.30" fill="#141414"/><path d="M596.75 538.99 L599.05 541.29" stroke="#ddd" stroke-width="0.55"/>
<line x1="571.8" y1="543.47" x2="601.6" y2="543.47" stroke="#000" stroke-width="0.85"/>
<text x="575.1" y="548.27" font-family="Liberation Sans, sans-serif" font-size="3.6" fill="#222" text-anchor="middle">12</text>
<text x="586.3" y="548.14" font-family="Liberation Sans, sans-serif" font-size="3.4" fill="#555" text-anchor="middle">GND</text>
<circle cx="597.90" cy="546.81" r="2.30" fill="#141414"/><path d="M596.75 545.66 L599.05 547.96" stroke="#ddd" stroke-width="0.55"/>
<line x1="571.8" y1="550.14" x2="601.6" y2="550.14" stroke="#000" stroke-width="0.85"/>
<text x="575.1" y="554.94" font-family="Liberation Sans, sans-serif" font-size="3.6" fill="#222" text-anchor="middle">13</text>
<text x="586.3" y="554.81" font-family="Liberation Sans, sans-serif" font-size="3.4" fill="#555" text-anchor="middle">UO7</text>
<circle cx="597.90" cy="553.48" r="2.30" fill="#141414"/><path d="M596.75 552.33 L599.05 554.62" stroke="#ddd" stroke-width="0.55"/>
<line x1="571.8" y1="556.81" x2="601.6" y2="556.81" stroke="#000" stroke-width="0.85"/>
<text x="575.1" y="561.61" font-family="Liberation Sans, sans-serif" font-size="3.6" fill="#222" text-anchor="middle">14</text>
<text x="586.3" y="561.48" font-family="Liberation Sans, sans-serif" font-size="3.4" fill="#555" text-anchor="middle">GND</text>
<circle cx="597.90" cy="560.15" r="2.30" fill="#141414"/><path d="M596.75 559.00 L599.05 561.30" stroke="#ddd" stroke-width="0.55"/>
<line x1="571.8" y1="563.48" x2="601.6" y2="563.48" stroke="#000" stroke-width="0.85"/>
<text x="575.1" y="568.28" font-family="Liberation Sans, sans-serif" font-size="3.6" fill="#222" text-anchor="middle">15</text>
<text x="586.3" y="568.15" font-family="Liberation Sans, sans-serif" font-size="3.4" fill="#555" text-anchor="middle">UO8</text>
<circle cx="597.90" cy="566.82" r="2.30" fill="#141414"/><path d="M596.75 565.67 L599.05 567.97" stroke="#ddd" stroke-width="0.55"/>
<line x1="571.8" y1="570.15" x2="601.6" y2="570.15" stroke="#000" stroke-width="0.85"/>
<text x="575.1" y="574.95" font-family="Liberation Sans, sans-serif" font-size="3.6" fill="#222" text-anchor="middle">16</text>
<text x="586.3" y="574.82" font-family="Liberation Sans, sans-serif" font-size="3.4" fill="#555" text-anchor="middle">GND</text>
<circle cx="597.90" cy="573.49" r="2.30" fill="#141414"/><path d="M596.75 572.34 L599.05 574.63" stroke="#ddd" stroke-width="0.55"/>
<line x1="571.8" y1="576.82" x2="601.6" y2="576.82" stroke="#000" stroke-width="0.85"/>
<text x="575.1" y="581.62" font-family="Liberation Sans, sans-serif" font-size="3.6" fill="#222" text-anchor="middle">17</text>
<text x="586.3" y="581.49" font-family="Liberation Sans, sans-serif" font-size="3.4" fill="#555" text-anchor="middle">UO9</text>
<circle cx="597.90" cy="580.16" r="2.30" fill="#141414"/><path d="M596.75 579.01 L599.05 581.31" stroke="#ddd" stroke-width="0.55"/>
<line x1="571.8" y1="583.49" x2="601.6" y2="583.49" stroke="#000" stroke-width="0.85"/>
<text x="575.1" y="588.29" font-family="Liberation Sans, sans-serif" font-size="3.6" fill="#222" text-anchor="middle">18</text>
<text x="586.3" y="588.16" font-family="Liberation Sans, sans-serif" font-size="3.4" fill="#555" text-anchor="middle">GND</text>
<circle cx="597.90" cy="586.83" r="2.30" fill="#141414"/><path d="M596.75 585.68 L599.05 587.98" stroke="#ddd" stroke-width="0.55"/>
<line x1="571.8" y1="590.16" x2="601.6" y2="590.16" stroke="#000" stroke-width="0.85"/>
<text x="575.1" y="594.96" font-family="Liberation Sans, sans-serif" font-size="3.6" fill="#222" text-anchor="middle">19</text>
<text x="586.3" y="594.83" font-family="Liberation Sans, sans-serif" font-size="3.4" fill="#555" text-anchor="middle">UO10</text>
<circle cx="597.90" cy="593.50" r="2.30" fill="#141414"/><path d="M596.75 592.35 L599.05 594.65" stroke="#ddd" stroke-width="0.55"/>
<line x1="571.8" y1="596.83" x2="601.6" y2="596.83" stroke="#000" stroke-width="0.85"/>
<text x="575.1" y="601.63" font-family="Liberation Sans, sans-serif" font-size="3.6" fill="#222" text-anchor="middle">20</text>
<text x="586.3" y="601.50" font-family="Liberation Sans, sans-serif" font-size="3.4" fill="#555" text-anchor="middle">GND</text>
<circle cx="597.90" cy="600.17" r="2.30" fill="#141414"/><path d="M596.75 599.02 L599.05 601.32" stroke="#ddd" stroke-width="0.55"/>
<line x1="571.8" y1="603.50" x2="601.6" y2="603.50" stroke="#000" stroke-width="0.85"/>
<text x="575.1" y="608.30" font-family="Liberation Sans, sans-serif" font-size="3.6" fill="#222" text-anchor="middle">21</text>
<text x="586.3" y="608.17" font-family="Liberation Sans, sans-serif" font-size="3.4" fill="#555" text-anchor="middle">UO11</text>
<circle cx="597.90" cy="606.84" r="2.30" fill="#141414"/><path d="M596.75 605.69 L599.05 607.99" stroke="#ddd" stroke-width="0.55"/>
<line x1="571.8" y1="610.17" x2="601.6" y2="610.17" stroke="#000" stroke-width="0.85"/>
<text x="575.1" y="614.97" font-family="Liberation Sans, sans-serif" font-size="3.6" fill="#222" text-anchor="middle">22</text>
<text x="586.3" y="614.84" font-family="Liberation Sans, sans-serif" font-size="3.4" fill="#555" text-anchor="middle">GND</text>
<circle cx="597.90" cy="613.51" r="2.30" fill="#141414"/><path d="M596.75 612.36 L599.05 614.66" stroke="#ddd" stroke-width="0.55"/>
<line x1="571.8" y1="616.84" x2="601.6" y2="616.84" stroke="#000" stroke-width="0.85"/>
<text x="575.1" y="621.64" font-family="Liberation Sans, sans-serif" font-size="3.6" fill="#222" text-anchor="middle">23</text>
<text x="586.3" y="621.51" font-family="Liberation Sans, sans-serif" font-size="3.4" fill="#555" text-anchor="middle">UO12</text>
<circle cx="597.90" cy="620.18" r="2.30" fill="#141414"/><path d="M596.75 619.03 L599.05 621.33" stroke="#ddd" stroke-width="0.55"/>
<line x1="571.8" y1="623.51" x2="601.6" y2="623.51" stroke="#000" stroke-width="0.85"/>
<text x="575.1" y="628.31" font-family="Liberation Sans, sans-serif" font-size="3.6" fill="#222" text-anchor="middle">24</text>
<text x="586.3" y="628.18" font-family="Liberation Sans, sans-serif" font-size="3.4" fill="#555" text-anchor="middle">GND</text>
<circle cx="597.90" cy="626.85" r="2.30" fill="#141414"/><path d="M596.75 625.70 L599.05 628.00" stroke="#ddd" stroke-width="0.55"/>
<rect x="565.5" y="470.10" width="36.1" height="160.08" fill="none" stroke="#111" stroke-width="0.9"/>
<line x1="578.4" y1="470.10" x2="578.4" y2="630.18" stroke="#111" stroke-width="0.6"/>
<line x1="594.2" y1="470.10" x2="594.2" y2="630.18" stroke="#111" stroke-width="0.9"/>
<line x1="571.8" y1="470.10" x2="571.8" y2="630.18" stroke="#111" stroke-width="0.6"/>
<text transform="translate(569.90,550.14) rotate(-90)" font-family="Liberation Sans, sans-serif" font-size="3.4" fill="#444" text-anchor="middle">UNIVERSAL OUTPUTS</text>
<rect x="565.5" y="640.20" width="6.3" height="21.00" fill="#c9c9d0"/>
<rect x="571.8" y="640.20" width="6.6" height="21.00" fill="#d7252b"/>
<rect x="578.4" y="640.20" width="15.8" height="21.00" fill="#fff"/>
<line x1="571.8" y1="640.20" x2="601.6" y2="640.20" stroke="#000" stroke-width="0.85"/>
<text x="575.1" y="645.24" font-family="Liberation Sans, sans-serif" font-size="3.6" fill="#222" text-anchor="middle">1</text>
<text x="586.3" y="645.10" font-family="Liberation Sans, sans-serif" font-size="3.4" fill="#555" text-anchor="middle">15VDC</text>
<circle cx="597.90" cy="643.70" r="2.30" fill="#141414"/><path d="M596.75 642.55 L599.05 644.85" stroke="#ddd" stroke-width="0.55"/>
<line x1="571.8" y1="647.20" x2="601.6" y2="647.20" stroke="#000" stroke-width="0.85"/>
<text x="575.1" y="652.24" font-family="Liberation Sans, sans-serif" font-size="3.6" fill="#222" text-anchor="middle">2</text>
<text x="586.3" y="652.10" font-family="Liberation Sans, sans-serif" font-size="3.4" fill="#555" text-anchor="middle">GND</text>
<circle cx="597.90" cy="650.70" r="2.30" fill="#141414"/><path d="M596.75 649.55 L599.05 651.85" stroke="#ddd" stroke-width="0.55"/>
<line x1="571.8" y1="654.20" x2="601.6" y2="654.20" stroke="#000" stroke-width="0.85"/>
<text x="575.1" y="659.24" font-family="Liberation Sans, sans-serif" font-size="3.6" fill="#222" text-anchor="middle">3</text>
<text x="586.3" y="659.10" font-family="Liberation Sans, sans-serif" font-size="3.4" fill="#555" text-anchor="middle">24VAC/DC</text>
<circle cx="597.90" cy="657.70" r="2.30" fill="#141414"/><path d="M596.75 656.55 L599.05 658.85" stroke="#ddd" stroke-width="0.55"/>
<rect x="565.5" y="640.20" width="36.1" height="21.00" fill="none" stroke="#111" stroke-width="0.9"/>
<line x1="578.4" y1="640.20" x2="578.4" y2="661.20" stroke="#111" stroke-width="0.6"/>
<line x1="594.2" y1="640.20" x2="594.2" y2="661.20" stroke="#111" stroke-width="0.9"/>
<line x1="571.8" y1="640.20" x2="571.8" y2="661.20" stroke="#111" stroke-width="0.6"/>
<text transform="translate(569.90,650.70) rotate(-90)" font-family="Liberation Sans, sans-serif" font-size="3.4" fill="#444" text-anchor="middle">PWR</text>
<rect x="565.5" y="671.20" width="6.3" height="13.40" fill="#a43fbe"/>
<rect x="571.8" y="671.20" width="6.6" height="13.40" fill="#ffffff"/>
<rect x="578.4" y="671.20" width="15.8" height="13.40" fill="#fff"/>
<line x1="571.8" y1="671.20" x2="601.6" y2="671.20" stroke="#000" stroke-width="0.85"/>
<text x="575.1" y="676.02" font-family="Liberation Sans, sans-serif" font-size="3.6" fill="#222" text-anchor="middle">1</text>
<text x="586.3" y="675.89" font-family="Liberation Sans, sans-serif" font-size="3.4" fill="#555" text-anchor="middle">NET+</text>
<circle cx="597.90" cy="674.55" r="2.30" fill="#141414"/><path d="M596.75 673.40 L599.05 675.70" stroke="#ddd" stroke-width="0.55"/>
<line x1="571.8" y1="677.90" x2="601.6" y2="677.90" stroke="#000" stroke-width="0.85"/>
<text x="575.1" y="682.72" font-family="Liberation Sans, sans-serif" font-size="3.6" fill="#222" text-anchor="middle">2</text>
<text x="586.3" y="682.59" font-family="Liberation Sans, sans-serif" font-size="3.4" fill="#555" text-anchor="middle">NET-</text>
<circle cx="597.90" cy="681.25" r="2.30" fill="#141414"/><path d="M596.75 680.10 L599.05 682.40" stroke="#ddd" stroke-width="0.55"/>
<rect x="565.5" y="671.20" width="36.1" height="13.40" fill="none" stroke="#111" stroke-width="0.9"/>
<line x1="578.4" y1="671.20" x2="578.4" y2="684.60" stroke="#111" stroke-width="0.6"/>
<line x1="594.2" y1="671.20" x2="594.2" y2="684.60" stroke="#111" stroke-width="0.9"/>
<line x1="571.8" y1="671.20" x2="571.8" y2="684.60" stroke="#111" stroke-width="0.6"/>
<text transform="translate(569.90,677.90) rotate(-90)" font-family="Liberation Sans, sans-serif" font-size="3.4" fill="#444" text-anchor="middle">NET</text><path d="M1112.00 403.70 H1126.40 V210.70 L1126.40 210.70 H1291.00" fill="none" stroke="#fcf4c4" stroke-width="2.1"/><path d="M1112.00 403.70 H1126.40 V210.70 L1126.40 210.70 H1291.00" fill="none" stroke="#d8c168" stroke-width="0.95"/>
<path d="M1112.00 417.61 H1139.30 V237.40 L1139.30 237.40 H1291.00" fill="none" stroke="#fcf4c4" stroke-width="2.1"/><path d="M1112.00 417.61 H1139.30 V237.40 L1139.30 237.40 H1291.00" fill="none" stroke="#d8c168" stroke-width="0.95"/>
<path d="M1112.00 431.52 H1153.50 V264.60 L1153.50 264.60 H1291.00" fill="none" stroke="#fcf4c4" stroke-width="2.1"/><path d="M1112.00 431.52 H1153.50 V264.60 L1153.50 264.60 H1291.00" fill="none" stroke="#d8c168" stroke-width="0.95"/>
<path d="M1112.00 445.43 H1166.80 V290.70 L1166.80 290.70 H1281.00" fill="none" stroke="#fcf4c4" stroke-width="2.1"/><path d="M1112.00 445.43 H1166.80 V290.70 L1166.80 290.70 H1281.00" fill="none" stroke="#d8c168" stroke-width="0.95"/>
<path d="M1112.00 459.34 H1152.90 V600.60 L1152.90 600.60 H1204.80 A2.2 2.2 0 0 1 1209.20 600.60 H1281.00" fill="none" stroke="#fdf0da" stroke-width="2.1"/><path d="M1112.00 459.34 H1152.90 V600.60 L1152.90 600.60 H1204.80 A2.2 2.2 0 0 1 1209.20 600.60 H1281.00" fill="none" stroke="#dcc6a0" stroke-width="0.95"/>
<path d="M1112.00 473.25 H1150.70 A2.2 2.2 0 0 1 1155.10 473.25 H1176.60 V331.60 L1176.60 331.60 H1281.00" fill="none" stroke="#fdf0da" stroke-width="2.1"/><path d="M1112.00 473.25 H1150.70 A2.2 2.2 0 0 1 1155.10 473.25 H1176.60 V331.60 L1176.60 331.60 H1281.00" fill="none" stroke="#dcc6a0" stroke-width="0.95"/>
<path d="M1112.00 487.16 H1150.70 A2.2 2.2 0 0 1 1155.10 487.16 H1187.60 V358.80 L1187.60 358.80 H1281.00" fill="none" stroke="#fdf0da" stroke-width="2.1"/><path d="M1112.00 487.16 H1150.70 A2.2 2.2 0 0 1 1155.10 487.16 H1187.60 V358.80 L1187.60 358.80 H1281.00" fill="none" stroke="#dcc6a0" stroke-width="0.95"/>
<path d="M1112.00 501.07 H1150.70 A2.2 2.2 0 0 1 1155.10 501.07 H1199.70 V394.10 L1199.70 394.10 H1281.00" fill="none" stroke="#fdf0da" stroke-width="2.1"/><path d="M1112.00 501.07 H1150.70 A2.2 2.2 0 0 1 1155.10 501.07 H1199.70 V394.10 L1199.70 394.10 H1281.00" fill="none" stroke="#dcc6a0" stroke-width="0.95"/>
<path d="M1112.00 514.98 H1150.70 A2.2 2.2 0 0 1 1155.10 514.98 H1206.40 V421.30 L1206.40 421.30 H1281.00" fill="none" stroke="#fcf4c4" stroke-width="2.1"/><path d="M1112.00 514.98 H1150.70 A2.2 2.2 0 0 1 1155.10 514.98 H1206.40 V421.30 L1206.40 421.30 H1281.00" fill="none" stroke="#d8c168" stroke-width="0.95"/>
<path d="M1112.00 528.89 H1150.70 A2.2 2.2 0 0 1 1155.10 528.89 H1213.30 V448.20 L1213.30 448.20 H1281.00" fill="none" stroke="#fdf0da" stroke-width="2.1"/><path d="M1112.00 528.89 H1150.70 A2.2 2.2 0 0 1 1155.10 528.89 H1213.30 V448.20 L1213.30 448.20 H1281.00" fill="none" stroke="#dcc6a0" stroke-width="0.95"/>
<path d="M1112.00 542.80 H1146.20 V671.00 L1146.20 671.00 H1170.20 A2.2 2.2 0 0 1 1174.60 671.00 H1177.30 A2.2 2.2 0 0 1 1181.70 671.00 H1184.10 A2.2 2.2 0 0 1 1188.50 671.00 H1190.80 A2.2 2.2 0 0 1 1195.20 671.00 H1197.80 A2.2 2.2 0 0 1 1202.20 671.00 H1281.00" fill="none" stroke="#fdf0da" stroke-width="2.1"/><path d="M1112.00 542.80 H1146.20 V671.00 L1146.20 671.00 H1170.20 A2.2 2.2 0 0 1 1174.60 671.00 H1177.30 A2.2 2.2 0 0 1 1181.70 671.00 H1184.10 A2.2 2.2 0 0 1 1188.50 671.00 H1190.80 A2.2 2.2 0 0 1 1195.20 671.00 H1197.80 A2.2 2.2 0 0 1 1202.20 671.00 H1281.00" fill="none" stroke="#dcc6a0" stroke-width="0.95"/>
<path d="M1112.00 556.71 H1144.00 A2.2 2.2 0 0 1 1148.40 556.71 H1150.70 A2.2 2.2 0 0 1 1155.10 556.71 H1177.30 A2.2 2.2 0 0 1 1181.70 556.71 H1220.00 V489.20 L1220.00 489.20 H1281.00" fill="none" stroke="#fdf0da" stroke-width="2.1"/><path d="M1112.00 556.71 H1144.00 A2.2 2.2 0 0 1 1148.40 556.71 H1150.70 A2.2 2.2 0 0 1 1155.10 556.71 H1177.30 A2.2 2.2 0 0 1 1181.70 556.71 H1220.00 V489.20 L1220.00 489.20 H1281.00" fill="none" stroke="#dcc6a0" stroke-width="0.95"/>
<path d="M1112.00 570.62 H1144.00 A2.2 2.2 0 0 1 1148.40 570.62 H1150.70 A2.2 2.2 0 0 1 1155.10 570.62 H1179.50 V531.20 L1179.50 531.20 H1217.80 A2.2 2.2 0 0 1 1222.20 531.20 H1281.00" fill="none" stroke="#f1f7df" stroke-width="2.1"/><path d="M1112.00 570.62 H1144.00 A2.2 2.2 0 0 1 1148.40 570.62 H1150.70 A2.2 2.2 0 0 1 1155.10 570.62 H1179.50 V531.20 L1179.50 531.20 H1217.80 A2.2 2.2 0 0 1 1222.20 531.20 H1281.00" fill="none" stroke="#a3b67a" stroke-width="0.95"/>
<path d="M1112.00 584.53 H1144.00 A2.2 2.2 0 0 1 1148.40 584.53 H1150.70 A2.2 2.2 0 0 1 1155.10 584.53 H1183.80 A2.2 2.2 0 0 1 1188.20 584.53 H1207.00 V640.60 L1207.00 640.60 H1281.00" fill="none" stroke="#f1f7df" stroke-width="2.1"/><path d="M1112.00 584.53 H1144.00 A2.2 2.2 0 0 1 1148.40 584.53 H1150.70 A2.2 2.2 0 0 1 1155.10 584.53 H1183.80 A2.2 2.2 0 0 1 1188.20 584.53 H1207.00 V640.60 L1207.00 640.60 H1281.00" fill="none" stroke="#a3b67a" stroke-width="0.95"/>
<path d="M1112.00 598.44 H1144.00 A2.2 2.2 0 0 1 1148.40 598.44 H1150.70 A2.2 2.2 0 0 1 1155.10 598.44 H1186.00 V557.00 L1186.00 557.00 H1281.00" fill="none" stroke="#f1f7df" stroke-width="2.1"/><path d="M1112.00 598.44 H1144.00 A2.2 2.2 0 0 1 1148.40 598.44 H1150.70 A2.2 2.2 0 0 1 1155.10 598.44 H1186.00 V557.00 L1186.00 557.00 H1281.00" fill="none" stroke="#a3b67a" stroke-width="0.95"/>
<path d="M1112.00 612.35 H1144.00 A2.2 2.2 0 0 1 1148.40 612.35 H1200.00 V708.70 L1200.00 708.70 H1281.00" fill="none" stroke="#f1f7df" stroke-width="2.1"/><path d="M1112.00 612.35 H1144.00 A2.2 2.2 0 0 1 1148.40 612.35 H1200.00 V708.70 L1200.00 708.70 H1281.00" fill="none" stroke="#a3b67a" stroke-width="0.95"/>
<path d="M1112.00 626.26 H1144.00 A2.2 2.2 0 0 1 1148.40 626.26 H1193.00 V750.30 L1193.00 750.30 H1281.00" fill="none" stroke="#f1f7df" stroke-width="2.1"/><path d="M1112.00 626.26 H1144.00 A2.2 2.2 0 0 1 1148.40 626.26 H1193.00 V750.30 L1193.00 750.30 H1281.00" fill="none" stroke="#a3b67a" stroke-width="0.95"/>
<path d="M1112.00 640.17 H1144.00 A2.2 2.2 0 0 1 1148.40 640.17 H1186.30 V791.30 L1186.30 791.30 H1281.00" fill="none" stroke="#f1f7df" stroke-width="2.1"/><path d="M1112.00 640.17 H1144.00 A2.2 2.2 0 0 1 1148.40 640.17 H1186.30 V791.30 L1186.30 791.30 H1281.00" fill="none" stroke="#a3b67a" stroke-width="0.95"/>
<path d="M1112.00 654.08 H1144.00 A2.2 2.2 0 0 1 1148.40 654.08 H1179.50 V835.80 L1179.50 835.80 H1281.00" fill="none" stroke="#f1f7df" stroke-width="2.1"/><path d="M1112.00 654.08 H1144.00 A2.2 2.2 0 0 1 1148.40 654.08 H1179.50 V835.80 L1179.50 835.80 H1281.00" fill="none" stroke="#a3b67a" stroke-width="0.95"/>
<path d="M1112.00 667.99 H1144.00 A2.2 2.2 0 0 1 1148.40 667.99 H1172.40 V878.70 L1172.40 878.70 H1281.00" fill="none" stroke="#f1f7df" stroke-width="2.1"/><path d="M1112.00 667.99 H1144.00 A2.2 2.2 0 0 1 1148.40 667.99 H1172.40 V878.70 L1172.40 878.70 H1281.00" fill="none" stroke="#a3b67a" stroke-width="0.95"/><path d="M912.5 403.20 L924 403.20 L934 398.99 L943 398.99 M924 403.20 L934 405.95 L943 405.95" fill="none" stroke="#444" stroke-width="0.7"/>
<rect x="943.5" y="398.09" width="5" height="1.8" fill="#555"/><rect x="943.5" y="405.06" width="5" height="1.8" fill="#555"/>
<path d="M1017 398.99 L1024 398.99 L1035 403.70 L1045 403.70 M1017 405.95 L1024 405.95 L1035 403.70" fill="none" stroke="#444" stroke-width="0.7"/>
<rect x="1010" y="398.09" width="5" height="1.8" fill="#555"/><rect x="1010" y="405.06" width="5" height="1.8" fill="#555"/>
<rect x="844.60" y="399.90" width="67.90" height="6.60" rx="3.30" fill="#fff" stroke="#222" stroke-width="1.0"/><ellipse cx="908.90" cy="403.20" rx="3.30" ry="3.10" fill="#fff" stroke="#222" stroke-width="0.9"/><text x="875.25" y="404.60" font-family="Liberation Sans, sans-serif" font-size="3.9" font-weight="bold" fill="#333" text-anchor="middle">I-1 MAT 2 Ω22</text>
<rect x="1044.50" y="400.40" width="67.50" height="6.60" rx="3.30" fill="#fff" stroke="#222" stroke-width="1.0"/><ellipse cx="1048.10" cy="403.70" rx="3.30" ry="3.10" fill="#fff" stroke="#222" stroke-width="0.9"/><text x="1081.55" y="405.10" font-family="Liberation Sans, sans-serif" font-size="3.9" font-weight="bold" fill="#333" text-anchor="middle">I-1 MAT 2 Ω22</text>
<path d="M912.5 417.11 L924 417.11 L934 412.93 L943 412.93 M924 417.11 L934 419.89 L943 419.89" fill="none" stroke="#444" stroke-width="0.7"/>
<rect x="943.5" y="412.03" width="5" height="1.8" fill="#555"/><rect x="943.5" y="419.00" width="5" height="1.8" fill="#555"/>
<path d="M1017 412.93 L1024 412.93 L1035 417.61 L1045 417.61 M1017 419.89 L1024 419.89 L1035 417.61" fill="none" stroke="#444" stroke-width="0.7"/>
<rect x="1010" y="412.03" width="5" height="1.8" fill="#555"/><rect x="1010" y="419.00" width="5" height="1.8" fill="#555"/>
<rect x="844.60" y="413.81" width="67.90" height="6.60" rx="3.30" fill="#fff" stroke="#222" stroke-width="1.0"/><ellipse cx="908.90" cy="417.11" rx="3.30" ry="3.10" fill="#fff" stroke="#222" stroke-width="0.9"/><text x="875.25" y="418.51" font-family="Liberation Sans, sans-serif" font-size="3.9" font-weight="bold" fill="#333" text-anchor="middle">I-2 MAT 2 Ω22</text>
<rect x="1044.50" y="414.31" width="67.50" height="6.60" rx="3.30" fill="#fff" stroke="#222" stroke-width="1.0"/><ellipse cx="1048.10" cy="417.61" rx="3.30" ry="3.10" fill="#fff" stroke="#222" stroke-width="0.9"/><text x="1081.55" y="419.01" font-family="Liberation Sans, sans-serif" font-size="3.9" font-weight="bold" fill="#333" text-anchor="middle">I-2 MAT 2 Ω22</text>
<path d="M912.5 431.02 L924 431.02 L934 426.87 L943 426.87 M924 431.02 L934 433.83 L943 433.83" fill="none" stroke="#444" stroke-width="0.7"/>
<rect x="943.5" y="425.97" width="5" height="1.8" fill="#555"/><rect x="943.5" y="432.94" width="5" height="1.8" fill="#555"/>
<path d="M1017 426.87 L1024 426.87 L1035 431.52 L1045 431.52 M1017 433.83 L1024 433.83 L1035 431.52" fill="none" stroke="#444" stroke-width="0.7"/>
<rect x="1010" y="425.97" width="5" height="1.8" fill="#555"/><rect x="1010" y="432.94" width="5" height="1.8" fill="#555"/>
<rect x="844.60" y="427.72" width="67.90" height="6.60" rx="3.30" fill="#fff" stroke="#222" stroke-width="1.0"/><ellipse cx="908.90" cy="431.02" rx="3.30" ry="3.10" fill="#fff" stroke="#222" stroke-width="0.9"/><text x="875.25" y="432.42" font-family="Liberation Sans, sans-serif" font-size="3.9" font-weight="bold" fill="#333" text-anchor="middle">I-3 MAT 2 Ω22</text>
<rect x="1044.50" y="428.22" width="67.50" height="6.60" rx="3.30" fill="#fff" stroke="#222" stroke-width="1.0"/><ellipse cx="1048.10" cy="431.52" rx="3.30" ry="3.10" fill="#fff" stroke="#222" stroke-width="0.9"/><text x="1081.55" y="432.92" font-family="Liberation Sans, sans-serif" font-size="3.9" font-weight="bold" fill="#333" text-anchor="middle">I-3 MAT 2 Ω22</text>
<path d="M912.5 444.93 L924 444.93 L934 440.81 L943 440.81 M924 444.93 L934 447.77 L943 447.77" fill="none" stroke="#444" stroke-width="0.7"/>
<rect x="943.5" y="439.91" width="5" height="1.8" fill="#555"/><rect x="943.5" y="446.88" width="5" height="1.8" fill="#555"/>
<path d="M1017 440.81 L1024 440.81 L1035 445.43 L1045 445.43 M1017 447.77 L1024 447.77 L1035 445.43" fill="none" stroke="#444" stroke-width="0.7"/>
<rect x="1010" y="439.91" width="5" height="1.8" fill="#555"/><rect x="1010" y="446.88" width="5" height="1.8" fill="#555"/>
<rect x="844.60" y="441.63" width="67.90" height="6.60" rx="3.30" fill="#fff" stroke="#222" stroke-width="1.0"/><ellipse cx="908.90" cy="444.93" rx="3.30" ry="3.10" fill="#fff" stroke="#222" stroke-width="0.9"/><text x="875.25" y="446.33" font-family="Liberation Sans, sans-serif" font-size="3.9" font-weight="bold" fill="#333" text-anchor="middle">I-4 SA SP 2 Ω22</text>
<rect x="1044.50" y="442.13" width="67.50" height="6.60" rx="3.30" fill="#fff" stroke="#222" stroke-width="1.0"/><ellipse cx="1048.10" cy="445.43" rx="3.30" ry="3.10" fill="#fff" stroke="#222" stroke-width="0.9"/><text x="1081.55" y="446.83" font-family="Liberation Sans, sans-serif" font-size="3.9" font-weight="bold" fill="#333" text-anchor="middle">I-4 SA SP 2 Ω22</text>
<path d="M912.5 458.84 L924 458.84 L934 454.75 L943 454.75 M924 458.84 L934 461.72 L943 461.72" fill="none" stroke="#444" stroke-width="0.7"/>
<rect x="943.5" y="453.85" width="5" height="1.8" fill="#555"/><rect x="943.5" y="460.82" width="5" height="1.8" fill="#555"/>
<path d="M1017 454.75 L1024 454.75 L1035 459.34 L1045 459.34 M1017 461.72 L1024 461.72 L1035 459.34" fill="none" stroke="#444" stroke-width="0.7"/>
<rect x="1010" y="453.85" width="5" height="1.8" fill="#555"/><rect x="1010" y="460.82" width="5" height="1.8" fill="#555"/>
<rect x="844.60" y="455.54" width="67.90" height="6.60" rx="3.30" fill="#fff" stroke="#222" stroke-width="1.0"/><ellipse cx="908.90" cy="458.84" rx="3.30" ry="3.10" fill="#fff" stroke="#222" stroke-width="0.9"/><text x="875.25" y="460.24" font-family="Liberation Sans, sans-serif" font-size="3.9" font-weight="bold" fill="#333" text-anchor="middle">I-5 SFS 2 Ω22</text>
<rect x="1044.50" y="456.04" width="67.50" height="6.60" rx="3.30" fill="#fff" stroke="#222" stroke-width="1.0"/><ellipse cx="1048.10" cy="459.34" rx="3.30" ry="3.10" fill="#fff" stroke="#222" stroke-width="0.9"/><text x="1081.55" y="460.74" font-family="Liberation Sans, sans-serif" font-size="3.9" font-weight="bold" fill="#333" text-anchor="middle">I-5 SFS 2 Ω22</text>
<path d="M912.5 472.75 L924 472.75 L934 468.69 L943 468.69 M924 472.75 L934 475.65 L943 475.65" fill="none" stroke="#444" stroke-width="0.7"/>
<rect x="943.5" y="467.79" width="5" height="1.8" fill="#555"/><rect x="943.5" y="474.75" width="5" height="1.8" fill="#555"/>
<path d="M1017 468.69 L1024 468.69 L1035 473.25 L1045 473.25 M1017 475.65 L1024 475.65 L1035 473.25" fill="none" stroke="#444" stroke-width="0.7"/>
<rect x="1010" y="467.79" width="5" height="1.8" fill="#555"/><rect x="1010" y="474.75" width="5" height="1.8" fill="#555"/>
<rect x="844.60" y="469.45" width="67.90" height="6.60" rx="3.30" fill="#fff" stroke="#222" stroke-width="1.0"/><ellipse cx="908.90" cy="472.75" rx="3.30" ry="3.10" fill="#fff" stroke="#222" stroke-width="0.9"/><text x="875.25" y="474.15" font-family="Liberation Sans, sans-serif" font-size="3.9" font-weight="bold" fill="#333" text-anchor="middle">I-6 FZ 2 Ω22</text>
<rect x="1044.50" y="469.95" width="67.50" height="6.60" rx="3.30" fill="#fff" stroke="#222" stroke-width="1.0"/><ellipse cx="1048.10" cy="473.25" rx="3.30" ry="3.10" fill="#fff" stroke="#222" stroke-width="0.9"/><text x="1081.55" y="474.65" font-family="Liberation Sans, sans-serif" font-size="3.9" font-weight="bold" fill="#333" text-anchor="middle">I-6 FZ 2 Ω22</text>
<path d="M912.5 486.66 L924 486.66 L934 482.62 L943 482.62 M924 486.66 L934 489.60 L943 489.60" fill="none" stroke="#444" stroke-width="0.7"/>
<rect x="943.5" y="481.73" width="5" height="1.8" fill="#555"/><rect x="943.5" y="488.70" width="5" height="1.8" fill="#555"/>
<path d="M1017 482.62 L1024 482.62 L1035 487.16 L1045 487.16 M1017 489.60 L1024 489.60 L1035 487.16" fill="none" stroke="#444" stroke-width="0.7"/>
<rect x="1010" y="481.73" width="5" height="1.8" fill="#555"/><rect x="1010" y="488.70" width="5" height="1.8" fill="#555"/>
<rect x="844.60" y="483.36" width="67.90" height="6.60" rx="3.30" fill="#fff" stroke="#222" stroke-width="1.0"/><ellipse cx="908.90" cy="486.66" rx="3.30" ry="3.10" fill="#fff" stroke="#222" stroke-width="0.9"/><text x="875.25" y="488.06" font-family="Liberation Sans, sans-serif" font-size="3.9" font-weight="bold" fill="#333" text-anchor="middle">I-7 SA SMK 2 Ω22</text>
<rect x="1044.50" y="483.86" width="67.50" height="6.60" rx="3.30" fill="#fff" stroke="#222" stroke-width="1.0"/><ellipse cx="1048.10" cy="487.16" rx="3.30" ry="3.10" fill="#fff" stroke="#222" stroke-width="0.9"/><text x="1081.55" y="488.56" font-family="Liberation Sans, sans-serif" font-size="3.9" font-weight="bold" fill="#333" text-anchor="middle">I-7 SA SMK 2 Ω22</text>
<path d="M912.5 500.57 L924 500.57 L934 496.56 L943 496.56 M924 500.57 L934 503.53 L943 503.53" fill="none" stroke="#444" stroke-width="0.7"/>
<rect x="943.5" y="495.67" width="5" height="1.8" fill="#555"/><rect x="943.5" y="502.63" width="5" height="1.8" fill="#555"/>
<path d="M1017 496.56 L1024 496.56 L1035 501.07 L1045 501.07 M1017 503.53 L1024 503.53 L1035 501.07" fill="none" stroke="#444" stroke-width="0.7"/>
<rect x="1010" y="495.67" width="5" height="1.8" fill="#555"/><rect x="1010" y="502.63" width="5" height="1.8" fill="#555"/>
<rect x="844.60" y="497.27" width="67.90" height="6.60" rx="3.30" fill="#fff" stroke="#222" stroke-width="1.0"/><ellipse cx="908.90" cy="500.57" rx="3.30" ry="3.10" fill="#fff" stroke="#222" stroke-width="0.9"/><text x="875.25" y="501.97" font-family="Liberation Sans, sans-serif" font-size="3.9" font-weight="bold" fill="#333" text-anchor="middle">I-8 RAH 2 Ω22</text>
<rect x="1044.50" y="497.77" width="67.50" height="6.60" rx="3.30" fill="#fff" stroke="#222" stroke-width="1.0"/><ellipse cx="1048.10" cy="501.07" rx="3.30" ry="3.10" fill="#fff" stroke="#222" stroke-width="0.9"/><text x="1081.55" y="502.47" font-family="Liberation Sans, sans-serif" font-size="3.9" font-weight="bold" fill="#333" text-anchor="middle">I-8 RAH 2 Ω22</text>
<path d="M912.5 514.48 L924 514.48 L934 510.50 L943 510.50 M924 514.48 L934 517.48 L943 517.48" fill="none" stroke="#444" stroke-width="0.7"/>
<rect x="943.5" y="509.61" width="5" height="1.8" fill="#555"/><rect x="943.5" y="516.58" width="5" height="1.8" fill="#555"/>
<path d="M1017 510.50 L1024 510.50 L1035 514.98 L1045 514.98 M1017 517.48 L1024 517.48 L1035 514.98" fill="none" stroke="#444" stroke-width="0.7"/>
<rect x="1010" y="509.61" width="5" height="1.8" fill="#555"/><rect x="1010" y="516.58" width="5" height="1.8" fill="#555"/>
<rect x="844.60" y="511.18" width="67.90" height="6.60" rx="3.30" fill="#fff" stroke="#222" stroke-width="1.0"/><ellipse cx="908.90" cy="514.48" rx="3.30" ry="3.10" fill="#fff" stroke="#222" stroke-width="0.9"/><text x="875.25" y="515.88" font-family="Liberation Sans, sans-serif" font-size="3.9" font-weight="bold" fill="#333" text-anchor="middle">I-9 RA CO2 2 Ω22</text>
<rect x="1044.50" y="511.68" width="67.50" height="6.60" rx="3.30" fill="#fff" stroke="#222" stroke-width="1.0"/><ellipse cx="1048.10" cy="514.98" rx="3.30" ry="3.10" fill="#fff" stroke="#222" stroke-width="0.9"/><text x="1081.55" y="516.38" font-family="Liberation Sans, sans-serif" font-size="3.9" font-weight="bold" fill="#333" text-anchor="middle">I-9 RA CO2 2 Ω22</text>
<path d="M912.5 528.39 L924 528.39 L934 524.44 L943 524.44 M924 528.39 L934 531.41 L943 531.41" fill="none" stroke="#444" stroke-width="0.7"/>
<rect x="943.5" y="523.54" width="5" height="1.8" fill="#555"/><rect x="943.5" y="530.51" width="5" height="1.8" fill="#555"/>
<path d="M1017 524.44 L1024 524.44 L1035 528.89 L1045 528.89 M1017 531.41 L1024 531.41 L1035 528.89" fill="none" stroke="#444" stroke-width="0.7"/>
<rect x="1010" y="523.54" width="5" height="1.8" fill="#555"/><rect x="1010" y="530.51" width="5" height="1.8" fill="#555"/>
<rect x="844.60" y="525.09" width="67.90" height="6.60" rx="3.30" fill="#fff" stroke="#222" stroke-width="1.0"/><ellipse cx="908.90" cy="528.39" rx="3.30" ry="3.10" fill="#fff" stroke="#222" stroke-width="0.9"/><text x="875.25" y="529.79" font-family="Liberation Sans, sans-serif" font-size="3.9" font-weight="bold" fill="#333" text-anchor="middle">I-10 OA AFS 2 Ω22</text>
<rect x="1044.50" y="525.59" width="67.50" height="6.60" rx="3.30" fill="#fff" stroke="#222" stroke-width="1.0"/><ellipse cx="1048.10" cy="528.89" rx="3.30" ry="3.10" fill="#fff" stroke="#222" stroke-width="0.9"/><text x="1081.55" y="530.29" font-family="Liberation Sans, sans-serif" font-size="3.9" font-weight="bold" fill="#333" text-anchor="middle">I-10 OA AFS 2 Ω22</text>
<path d="M912.5 542.30 L924 542.30 L934 538.38 L943 538.38 M924 542.30 L934 545.36 L943 545.36" fill="none" stroke="#444" stroke-width="0.7"/>
<rect x="943.5" y="537.49" width="5" height="1.8" fill="#555"/><rect x="943.5" y="544.46" width="5" height="1.8" fill="#555"/>
<path d="M1017 538.38 L1024 538.38 L1035 542.80 L1045 542.80 M1017 545.36 L1024 545.36 L1035 542.80" fill="none" stroke="#444" stroke-width="0.7"/>
<rect x="1010" y="537.49" width="5" height="1.8" fill="#555"/><rect x="1010" y="544.46" width="5" height="1.8" fill="#555"/>
<rect x="844.60" y="539.00" width="67.90" height="6.60" rx="3.30" fill="#fff" stroke="#222" stroke-width="1.0"/><ellipse cx="908.90" cy="542.30" rx="3.30" ry="3.10" fill="#fff" stroke="#222" stroke-width="0.9"/><text x="875.25" y="543.70" font-family="Liberation Sans, sans-serif" font-size="3.9" font-weight="bold" fill="#333" text-anchor="middle">I-11 HWP 8 2 Ω22</text>
<rect x="1044.50" y="539.50" width="67.50" height="6.60" rx="3.30" fill="#fff" stroke="#222" stroke-width="1.0"/><ellipse cx="1048.10" cy="542.80" rx="3.30" ry="3.10" fill="#fff" stroke="#222" stroke-width="0.9"/><text x="1081.55" y="544.20" font-family="Liberation Sans, sans-serif" font-size="3.9" font-weight="bold" fill="#333" text-anchor="middle">I-11 HWP 8 2 Ω22</text>
<path d="M912.5 556.21 L924 556.21 L934 552.33 L943 552.33 M924 556.21 L934 559.29 L943 559.29" fill="none" stroke="#444" stroke-width="0.7"/>
<rect x="943.5" y="551.43" width="5" height="1.8" fill="#555"/><rect x="943.5" y="558.39" width="5" height="1.8" fill="#555"/>
<path d="M1017 552.33 L1024 552.33 L1035 556.71 L1045 556.71 M1017 559.29 L1024 559.29 L1035 556.71" fill="none" stroke="#444" stroke-width="0.7"/>
<rect x="1010" y="551.43" width="5" height="1.8" fill="#555"/><rect x="1010" y="558.39" width="5" height="1.8" fill="#555"/>
<rect x="844.60" y="552.91" width="67.90" height="6.60" rx="3.30" fill="#fff" stroke="#222" stroke-width="1.0"/><ellipse cx="908.90" cy="556.21" rx="3.30" ry="3.10" fill="#fff" stroke="#222" stroke-width="0.9"/><text x="875.25" y="557.61" font-family="Liberation Sans, sans-serif" font-size="3.9" font-weight="bold" fill="#333" text-anchor="middle">I-12 FILT 8 2 Ω22</text>
<rect x="1044.50" y="553.41" width="67.50" height="6.60" rx="3.30" fill="#fff" stroke="#222" stroke-width="1.0"/><ellipse cx="1048.10" cy="556.71" rx="3.30" ry="3.10" fill="#fff" stroke="#222" stroke-width="0.9"/><text x="1081.55" y="558.11" font-family="Liberation Sans, sans-serif" font-size="3.9" font-weight="bold" fill="#333" text-anchor="middle">I-12 FILT 8 2 Ω22</text>
<path d="M912.5 570.12 L924 570.12 L934 566.26 L943 566.26 M924 570.12 L934 573.24 L943 573.24" fill="none" stroke="#444" stroke-width="0.7"/>
<rect x="943.5" y="565.37" width="5" height="1.8" fill="#555"/><rect x="943.5" y="572.34" width="5" height="1.8" fill="#555"/>
<path d="M1017 566.26 L1024 566.26 L1035 570.62 L1045 570.62 M1017 573.24 L1024 573.24 L1035 570.62" fill="none" stroke="#444" stroke-width="0.7"/>
<rect x="1010" y="565.37" width="5" height="1.8" fill="#555"/><rect x="1010" y="572.34" width="5" height="1.8" fill="#555"/>
<rect x="844.60" y="566.82" width="67.90" height="6.60" rx="3.30" fill="#fff" stroke="#222" stroke-width="1.0"/><ellipse cx="908.90" cy="570.12" rx="3.30" ry="3.10" fill="#fff" stroke="#222" stroke-width="0.9"/><text x="875.25" y="571.52" font-family="Liberation Sans, sans-serif" font-size="3.9" font-weight="bold" fill="#333" text-anchor="middle">O-1 SFC 2 Ω22</text>
<rect x="1044.50" y="567.32" width="67.50" height="6.60" rx="3.30" fill="#fff" stroke="#222" stroke-width="1.0"/><ellipse cx="1048.10" cy="570.62" rx="3.30" ry="3.10" fill="#fff" stroke="#222" stroke-width="0.9"/><text x="1081.55" y="572.02" font-family="Liberation Sans, sans-serif" font-size="3.9" font-weight="bold" fill="#333" text-anchor="middle">O-1 SFC 2 Ω22</text>
<path d="M912.5 584.03 L924 584.03 L934 580.20 L943 580.20 M924 584.03 L934 587.17 L943 587.17" fill="none" stroke="#444" stroke-width="0.7"/>
<rect x="943.5" y="579.30" width="5" height="1.8" fill="#555"/><rect x="943.5" y="586.27" width="5" height="1.8" fill="#555"/>
<path d="M1017 580.20 L1024 580.20 L1035 584.53 L1045 584.53 M1017 587.17 L1024 587.17 L1035 584.53" fill="none" stroke="#444" stroke-width="0.7"/>
<rect x="1010" y="579.30" width="5" height="1.8" fill="#555"/><rect x="1010" y="586.27" width="5" height="1.8" fill="#555"/>
<rect x="844.60" y="580.73" width="67.90" height="6.60" rx="3.30" fill="#fff" stroke="#222" stroke-width="1.0"/><ellipse cx="908.90" cy="584.03" rx="3.30" ry="3.10" fill="#fff" stroke="#222" stroke-width="0.9"/><text x="875.25" y="585.43" font-family="Liberation Sans, sans-serif" font-size="3.9" font-weight="bold" fill="#333" text-anchor="middle">O-2 HWP 8 2 Ω22</text>
<rect x="1044.50" y="581.23" width="67.50" height="6.60" rx="3.30" fill="#fff" stroke="#222" stroke-width="1.0"/><ellipse cx="1048.10" cy="584.53" rx="3.30" ry="3.10" fill="#fff" stroke="#222" stroke-width="0.9"/><text x="1081.55" y="585.93" font-family="Liberation Sans, sans-serif" font-size="3.9" font-weight="bold" fill="#333" text-anchor="middle">O-2 HWP 8 2 Ω22</text>
<path d="M912.5 597.94 L924 597.94 L934 594.14 L943 594.14 M924 597.94 L934 601.12 L943 601.12" fill="none" stroke="#444" stroke-width="0.7"/>
<rect x="943.5" y="593.25" width="5" height="1.8" fill="#555"/><rect x="943.5" y="600.22" width="5" height="1.8" fill="#555"/>
<path d="M1017 594.14 L1024 594.14 L1035 598.44 L1045 598.44 M1017 601.12 L1024 601.12 L1035 598.44" fill="none" stroke="#444" stroke-width="0.7"/>
<rect x="1010" y="593.25" width="5" height="1.8" fill="#555"/><rect x="1010" y="600.22" width="5" height="1.8" fill="#555"/>
<rect x="844.60" y="594.64" width="67.90" height="6.60" rx="3.30" fill="#fff" stroke="#222" stroke-width="1.0"/><ellipse cx="908.90" cy="597.94" rx="3.30" ry="3.10" fill="#fff" stroke="#222" stroke-width="0.9"/><text x="875.25" y="599.34" font-family="Liberation Sans, sans-serif" font-size="3.9" font-weight="bold" fill="#333" text-anchor="middle">O-3 SF MOD 2 Ω22</text>
<rect x="1044.50" y="595.14" width="67.50" height="6.60" rx="3.30" fill="#fff" stroke="#222" stroke-width="1.0"/><ellipse cx="1048.10" cy="598.44" rx="3.30" ry="3.10" fill="#fff" stroke="#222" stroke-width="0.9"/><text x="1081.55" y="599.84" font-family="Liberation Sans, sans-serif" font-size="3.9" font-weight="bold" fill="#333" text-anchor="middle">O-3 SF MOD 2 Ω22</text>
<path d="M912.5 611.85 L924 611.85 L934 608.09 L943 608.09 M924 611.85 L934 615.05 L943 615.05" fill="none" stroke="#444" stroke-width="0.7"/>
<rect x="943.5" y="607.19" width="5" height="1.8" fill="#555"/><rect x="943.5" y="614.15" width="5" height="1.8" fill="#555"/>
<path d="M1017 608.09 L1024 608.09 L1035 612.35 L1045 612.35 M1017 615.05 L1024 615.05 L1035 612.35" fill="none" stroke="#444" stroke-width="0.7"/>
<rect x="1010" y="607.19" width="5" height="1.8" fill="#555"/><rect x="1010" y="614.15" width="5" height="1.8" fill="#555"/>
<rect x="844.60" y="608.55" width="67.90" height="6.60" rx="3.30" fill="#fff" stroke="#222" stroke-width="1.0"/><ellipse cx="908.90" cy="611.85" rx="3.30" ry="3.10" fill="#fff" stroke="#222" stroke-width="0.9"/><text x="875.25" y="613.25" font-family="Liberation Sans, sans-serif" font-size="3.9" font-weight="bold" fill="#333" text-anchor="middle">O-4 OAD M 2 Ω22</text>
<rect x="1044.50" y="609.05" width="67.50" height="6.60" rx="3.30" fill="#fff" stroke="#222" stroke-width="1.0"/><ellipse cx="1048.10" cy="612.35" rx="3.30" ry="3.10" fill="#fff" stroke="#222" stroke-width="0.9"/><text x="1081.55" y="613.75" font-family="Liberation Sans, sans-serif" font-size="3.9" font-weight="bold" fill="#333" text-anchor="middle">O-4 OAD M 2 Ω22</text>
<path d="M912.5 625.76 L924 625.76 L934 622.02 L943 622.02 M924 625.76 L934 629.00 L943 629.00" fill="none" stroke="#444" stroke-width="0.7"/>
<rect x="943.5" y="621.12" width="5" height="1.8" fill="#555"/><rect x="943.5" y="628.10" width="5" height="1.8" fill="#555"/>
<path d="M1017 622.02 L1024 622.02 L1035 626.26 L1045 626.26 M1017 629.00 L1024 629.00 L1035 626.26" fill="none" stroke="#444" stroke-width="0.7"/>
<rect x="1010" y="621.12" width="5" height="1.8" fill="#555"/><rect x="1010" y="628.10" width="5" height="1.8" fill="#555"/>
<rect x="844.60" y="622.46" width="67.90" height="6.60" rx="3.30" fill="#fff" stroke="#222" stroke-width="1.0"/><ellipse cx="908.90" cy="625.76" rx="3.30" ry="3.10" fill="#fff" stroke="#222" stroke-width="0.9"/><text x="875.25" y="627.16" font-family="Liberation Sans, sans-serif" font-size="3.9" font-weight="bold" fill="#333" text-anchor="middle">O-5 HVC M 2 Ω22</text>
<rect x="1044.50" y="622.96" width="67.50" height="6.60" rx="3.30" fill="#fff" stroke="#222" stroke-width="1.0"/><ellipse cx="1048.10" cy="626.26" rx="3.30" ry="3.10" fill="#fff" stroke="#222" stroke-width="0.9"/><text x="1081.55" y="627.66" font-family="Liberation Sans, sans-serif" font-size="3.9" font-weight="bold" fill="#333" text-anchor="middle">O-5 HVC M 2 Ω22</text>
<path d="M912.5 639.67 L924 639.67 L934 635.97 L943 635.97 M924 639.67 L934 642.93 L943 642.93" fill="none" stroke="#444" stroke-width="0.7"/>
<rect x="943.5" y="635.07" width="5" height="1.8" fill="#555"/><rect x="943.5" y="642.03" width="5" height="1.8" fill="#555"/>
<path d="M1017 635.97 L1024 635.97 L1035 640.17 L1045 640.17 M1017 642.93 L1024 642.93 L1035 640.17" fill="none" stroke="#444" stroke-width="0.7"/>
<rect x="1010" y="635.07" width="5" height="1.8" fill="#555"/><rect x="1010" y="642.03" width="5" height="1.8" fill="#555"/>
<rect x="844.60" y="636.37" width="67.90" height="6.60" rx="3.30" fill="#fff" stroke="#222" stroke-width="1.0"/><ellipse cx="908.90" cy="639.67" rx="3.30" ry="3.10" fill="#fff" stroke="#222" stroke-width="0.9"/><text x="875.25" y="641.07" font-family="Liberation Sans, sans-serif" font-size="3.9" font-weight="bold" fill="#333" text-anchor="middle">O-6 CVC M 2 Ω22</text>
<rect x="1044.50" y="636.87" width="67.50" height="6.60" rx="3.30" fill="#fff" stroke="#222" stroke-width="1.0"/><ellipse cx="1048.10" cy="640.17" rx="3.30" ry="3.10" fill="#fff" stroke="#222" stroke-width="0.9"/><text x="1081.55" y="641.57" font-family="Liberation Sans, sans-serif" font-size="3.9" font-weight="bold" fill="#333" text-anchor="middle">O-6 CVC M 2 Ω22</text>
<path d="M912.5 653.58 L924 653.58 L934 649.90 L943 649.90 M924 653.58 L934 656.88 L943 656.88" fill="none" stroke="#444" stroke-width="0.7"/>
<rect x="943.5" y="649.00" width="5" height="1.8" fill="#555"/><rect x="943.5" y="655.98" width="5" height="1.8" fill="#555"/>
<path d="M1017 649.90 L1024 649.90 L1035 654.08 L1045 654.08 M1017 656.88 L1024 656.88 L1035 654.08" fill="none" stroke="#444" stroke-width="0.7"/>
<rect x="1010" y="649.00" width="5" height="1.8" fill="#555"/><rect x="1010" y="655.98" width="5" height="1.8" fill="#555"/>
<rect x="844.60" y="650.28" width="67.90" height="6.60" rx="3.30" fill="#fff" stroke="#222" stroke-width="1.0"/><ellipse cx="908.90" cy="653.58" rx="3.30" ry="3.10" fill="#fff" stroke="#222" stroke-width="0.9"/><text x="875.25" y="654.98" font-family="Liberation Sans, sans-serif" font-size="3.9" font-weight="bold" fill="#333" text-anchor="middle">O-7 OAD M 2 Ω22</text>
<rect x="1044.50" y="650.78" width="67.50" height="6.60" rx="3.30" fill="#fff" stroke="#222" stroke-width="1.0"/><ellipse cx="1048.10" cy="654.08" rx="3.30" ry="3.10" fill="#fff" stroke="#222" stroke-width="0.9"/><text x="1081.55" y="655.48" font-family="Liberation Sans, sans-serif" font-size="3.9" font-weight="bold" fill="#333" text-anchor="middle">O-7 OAD M 2 Ω22</text>
<path d="M912.5 667.49 L924 667.49 L934 663.85 L943 663.85 M924 667.49 L934 670.82 L943 670.82" fill="none" stroke="#444" stroke-width="0.7"/>
<rect x="943.5" y="662.95" width="5" height="1.8" fill="#555"/><rect x="943.5" y="669.92" width="5" height="1.8" fill="#555"/>
<path d="M1017 663.85 L1024 663.85 L1035 667.99 L1045 667.99 M1017 670.82 L1024 670.82 L1035 667.99" fill="none" stroke="#444" stroke-width="0.7"/>
<rect x="1010" y="662.95" width="5" height="1.8" fill="#555"/><rect x="1010" y="669.92" width="5" height="1.8" fill="#555"/>
<rect x="844.60" y="664.19" width="67.90" height="6.60" rx="3.30" fill="#fff" stroke="#222" stroke-width="1.0"/><ellipse cx="908.90" cy="667.49" rx="3.30" ry="3.10" fill="#fff" stroke="#222" stroke-width="0.9"/><text x="875.25" y="668.89" font-family="Liberation Sans, sans-serif" font-size="3.9" font-weight="bold" fill="#333" text-anchor="middle">O-8 RAD M 2 Ω22</text>
<rect x="1044.50" y="664.69" width="67.50" height="6.60" rx="3.30" fill="#fff" stroke="#222" stroke-width="1.0"/><ellipse cx="1048.10" cy="667.99" rx="3.30" ry="3.10" fill="#fff" stroke="#222" stroke-width="0.9"/><text x="1081.55" y="669.39" font-family="Liberation Sans, sans-serif" font-size="3.9" font-weight="bold" fill="#333" text-anchor="middle">O-8 RAD M 2 Ω22</text>
<rect x="1015.3" y="449.38" width="5.3" height="5.3" fill="#c0141c" stroke="#400" stroke-width="0.4"/>
<rect x="1015.3" y="533.01" width="5.3" height="5.3" fill="#c0141c" stroke="#400" stroke-width="0.4"/>
<rect x="1015.3" y="616.65" width="5.3" height="5.3" fill="#c0141c" stroke="#400" stroke-width="0.4"/>
<rect x="1015.3" y="630.60" width="5.3" height="5.3" fill="#c0141c" stroke="#400" stroke-width="0.4"/>
<rect x="1015.3" y="644.53" width="5.3" height="5.3" fill="#c0141c" stroke="#400" stroke-width="0.4"/>
<rect x="1015.3" y="658.48" width="5.3" height="5.3" fill="#c0141c" stroke="#400" stroke-width="0.4"/>
<rect x="1015.3" y="672.42" width="5.3" height="5.3" fill="#c0141c" stroke="#400" stroke-width="0.4"/><rect x="950.2" y="381.1" width="57.70" height="293.20" fill="#fff" stroke="#111" stroke-width="1.1"/>
<line x1="957.5" y1="381.1" x2="957.5" y2="674.30" stroke="#111" stroke-width="0.8"/>
<line x1="1000.3" y1="381.1" x2="1000.3" y2="674.30" stroke="#111" stroke-width="0.8"/>
<line x1="965.2" y1="395.5" x2="965.2" y2="674.30" stroke="#111" stroke-width="0.6"/>
<line x1="991.2" y1="381.1" x2="991.2" y2="674.30" stroke="#111" stroke-width="0.7"/>
<rect x="991.2" y="381.1" width="9.1" height="7" fill="#e8141b"/>
<rect x="991.2" y="388.1" width="9.1" height="7.4" fill="#111"/>
<text x="995.7" y="394" font-family="Liberation Sans, sans-serif" font-size="4.5" font-weight="bold" fill="#ddd" text-anchor="middle">2</text>
<text x="974.3" y="391.5" font-family="Liberation Sans, sans-serif" font-size="9.5" fill="#222" text-anchor="middle">T-1</text>
<line x1="950.2" y1="395.5" x2="1007.9" y2="395.5" stroke="#111" stroke-width="1.5"/>
<circle cx="953.90" cy="384.70" r="2.40" fill="#141414"/><path d="M952.70 383.50 L955.10 385.90" stroke="#ddd" stroke-width="0.55"/>
<circle cx="953.90" cy="391.80" r="2.40" fill="#141414"/><path d="M952.70 390.60 L955.10 393.00" stroke="#ddd" stroke-width="0.55"/>
<circle cx="1004.10" cy="384.70" r="2.40" fill="#141414"/><path d="M1002.90 383.50 L1005.30 385.90" stroke="#ddd" stroke-width="0.55"/>
<circle cx="1004.10" cy="391.80" r="2.40" fill="#141414"/><path d="M1002.90 390.60 L1005.30 393.00" stroke="#ddd" stroke-width="0.55"/>
<circle cx="953.90" cy="398.99" r="2.40" fill="#141414"/><path d="M952.70 397.79 L955.10 400.19" stroke="#ddd" stroke-width="0.55"/>
<circle cx="1004.10" cy="398.99" r="2.40" fill="#141414"/><path d="M1002.90 397.79 L1005.30 400.19" stroke="#ddd" stroke-width="0.55"/>
<text x="978.2" y="400.52" font-family="Liberation Sans, sans-serif" font-size="3.4" fill="#666" text-anchor="middle">AI1</text>
<text x="995.7" y="400.52" font-family="Liberation Sans, sans-serif" font-size="3.4" fill="#777" text-anchor="middle">1</text>
<text x="961.3" y="403.67" font-family="Liberation Sans, sans-serif" font-size="3.2" fill="#999" text-anchor="middle">1</text>
<line x1="965.2" y1="402.47" x2="1000.3" y2="402.47" stroke="#111" stroke-width="0.6"/>
<circle cx="953.90" cy="405.96" r="2.40" fill="#141414"/><path d="M952.70 404.76 L955.10 407.16" stroke="#ddd" stroke-width="0.55"/>
<circle cx="1004.10" cy="405.96" r="2.40" fill="#141414"/><path d="M1002.90 404.76 L1005.30 407.16" stroke="#ddd" stroke-width="0.55"/>
<text x="978.2" y="407.49" font-family="Liberation Sans, sans-serif" font-size="3.4" fill="#666" text-anchor="middle">RCB_400</text>
<text x="995.7" y="407.49" font-family="Liberation Sans, sans-serif" font-size="3.4" fill="#777" text-anchor="middle">2</text>
<line x1="957.5" y1="409.44" x2="1000.3" y2="409.44" stroke="#111" stroke-width="1.4"/>
<circle cx="953.90" cy="412.93" r="2.40" fill="#141414"/><path d="M952.70 411.73 L955.10 414.12" stroke="#ddd" stroke-width="0.55"/>
<circle cx="1004.10" cy="412.93" r="2.40" fill="#141414"/><path d="M1002.90 411.73 L1005.30 414.12" stroke="#ddd" stroke-width="0.55"/>
<text x="978.2" y="414.46" font-family="Liberation Sans, sans-serif" font-size="3.4" fill="#666" text-anchor="middle">AI2</text>
<text x="995.7" y="414.46" font-family="Liberation Sans, sans-serif" font-size="3.4" fill="#777" text-anchor="middle">3</text>
<text x="961.3" y="417.61" font-family="Liberation Sans, sans-serif" font-size="3.2" fill="#999" text-anchor="middle">1</text>
<line x1="965.2" y1="416.41" x2="1000.3" y2="416.41" stroke="#111" stroke-width="0.6"/>
<circle cx="953.90" cy="419.90" r="2.40" fill="#141414"/><path d="M952.70 418.70 L955.10 421.10" stroke="#ddd" stroke-width="0.55"/>
<circle cx="1004.10" cy="419.90" r="2.40" fill="#141414"/><path d="M1002.90 418.70 L1005.30 421.10" stroke="#ddd" stroke-width="0.55"/>
<text x="978.2" y="421.43" font-family="Liberation Sans, sans-serif" font-size="3.4" fill="#666" text-anchor="middle">RCB_400</text>
<text x="995.7" y="421.43" font-family="Liberation Sans, sans-serif" font-size="3.4" fill="#777" text-anchor="middle">4</text>
<line x1="957.5" y1="423.38" x2="1000.3" y2="423.38" stroke="#111" stroke-width="1.4"/>
<circle cx="953.90" cy="426.87" r="2.40" fill="#141414"/><path d="M952.70 425.67 L955.10 428.06" stroke="#ddd" stroke-width="0.55"/>
<circle cx="1004.10" cy="426.87" r="2.40" fill="#141414"/><path d="M1002.90 425.67 L1005.30 428.06" stroke="#ddd" stroke-width="0.55"/>
<text x="978.2" y="428.40" font-family="Liberation Sans, sans-serif" font-size="3.4" fill="#666" text-anchor="middle">AI3</text>
<text x="995.7" y="428.40" font-family="Liberation Sans, sans-serif" font-size="3.4" fill="#777" text-anchor="middle">5</text>
<text x="961.3" y="431.55" font-family="Liberation Sans, sans-serif" font-size="3.2" fill="#999" text-anchor="middle">1</text>
<line x1="965.2" y1="430.35" x2="1000.3" y2="430.35" stroke="#111" stroke-width="0.6"/>
<circle cx="953.90" cy="433.84" r="2.40" fill="#141414"/><path d="M952.70 432.64 L955.10 435.04" stroke="#ddd" stroke-width="0.55"/>
<circle cx="1004.10" cy="433.84" r="2.40" fill="#141414"/><path d="M1002.90 432.64 L1005.30 435.04" stroke="#ddd" stroke-width="0.55"/>
<text x="978.2" y="435.37" font-family="Liberation Sans, sans-serif" font-size="3.4" fill="#666" text-anchor="middle">RCB_400</text>
<text x="995.7" y="435.37" font-family="Liberation Sans, sans-serif" font-size="3.4" fill="#777" text-anchor="middle">6</text>
<line x1="957.5" y1="437.32" x2="1000.3" y2="437.32" stroke="#111" stroke-width="1.4"/>
<circle cx="953.90" cy="440.81" r="2.40" fill="#141414"/><path d="M952.70 439.61 L955.10 442.00" stroke="#ddd" stroke-width="0.55"/>
<circle cx="1004.10" cy="440.81" r="2.40" fill="#141414"/><path d="M1002.90 439.61 L1005.30 442.00" stroke="#ddd" stroke-width="0.55"/>
<text x="978.2" y="442.34" font-family="Liberation Sans, sans-serif" font-size="3.4" fill="#666" text-anchor="middle">BI4</text>
<text x="995.7" y="442.34" font-family="Liberation Sans, sans-serif" font-size="3.4" fill="#777" text-anchor="middle">7</text>
<text x="961.3" y="445.49" font-family="Liberation Sans, sans-serif" font-size="3.2" fill="#999" text-anchor="middle">1</text>
<line x1="965.2" y1="444.29" x2="1000.3" y2="444.29" stroke="#111" stroke-width="0.6"/>
<circle cx="953.90" cy="447.78" r="2.40" fill="#141414"/><path d="M952.70 446.58 L955.10 448.98" stroke="#ddd" stroke-width="0.55"/>
<circle cx="1004.10" cy="447.78" r="2.40" fill="#141414"/><path d="M1002.90 446.58 L1005.30 448.98" stroke="#ddd" stroke-width="0.55"/>
<text x="978.2" y="449.31" font-family="Liberation Sans, sans-serif" font-size="3.4" fill="#666" text-anchor="middle">RCB_400</text>
<text x="995.7" y="449.31" font-family="Liberation Sans, sans-serif" font-size="3.4" fill="#777" text-anchor="middle">8</text>
<line x1="957.5" y1="451.26" x2="1000.3" y2="451.26" stroke="#111" stroke-width="1.4"/>
<circle cx="953.90" cy="454.75" r="2.40" fill="#141414"/><path d="M952.70 453.55 L955.10 455.94" stroke="#ddd" stroke-width="0.55"/>
<circle cx="1004.10" cy="454.75" r="2.40" fill="#141414"/><path d="M1002.90 453.55 L1005.30 455.94" stroke="#ddd" stroke-width="0.55"/>
<text x="978.2" y="456.28" font-family="Liberation Sans, sans-serif" font-size="3.4" fill="#666" text-anchor="middle">BI5</text>
<text x="995.7" y="456.28" font-family="Liberation Sans, sans-serif" font-size="3.4" fill="#777" text-anchor="middle">9</text>
<text x="961.3" y="459.43" font-family="Liberation Sans, sans-serif" font-size="3.2" fill="#999" text-anchor="middle">1</text>
<line x1="965.2" y1="458.23" x2="1000.3" y2="458.23" stroke="#111" stroke-width="0.6"/>
<circle cx="953.90" cy="461.72" r="2.40" fill="#141414"/><path d="M952.70 460.52 L955.10 462.92" stroke="#ddd" stroke-width="0.55"/>
<circle cx="1004.10" cy="461.72" r="2.40" fill="#141414"/><path d="M1002.90 460.52 L1005.30 462.92" stroke="#ddd" stroke-width="0.55"/>
<text x="978.2" y="463.25" font-family="Liberation Sans, sans-serif" font-size="3.4" fill="#666" text-anchor="middle">RCB_400</text>
<text x="995.7" y="463.25" font-family="Liberation Sans, sans-serif" font-size="3.4" fill="#777" text-anchor="middle">10</text>
<line x1="957.5" y1="465.20" x2="1000.3" y2="465.20" stroke="#111" stroke-width="1.4"/>
<circle cx="953.90" cy="468.69" r="2.40" fill="#141414"/><path d="M952.70 467.49 L955.10 469.88" stroke="#ddd" stroke-width="0.55"/>
<circle cx="1004.10" cy="468.69" r="2.40" fill="#141414"/><path d="M1002.90 467.49 L1005.30 469.88" stroke="#ddd" stroke-width="0.55"/>
<text x="978.2" y="470.22" font-family="Liberation Sans, sans-serif" font-size="3.4" fill="#666" text-anchor="middle">BI6</text>
<text x="995.7" y="470.22" font-family="Liberation Sans, sans-serif" font-size="3.4" fill="#777" text-anchor="middle">11</text>
<text x="961.3" y="473.37" font-family="Liberation Sans, sans-serif" font-size="3.2" fill="#999" text-anchor="middle">1</text>
<line x1="965.2" y1="472.17" x2="1000.3" y2="472.17" stroke="#111" stroke-width="0.6"/>
<circle cx="953.90" cy="475.66" r="2.40" fill="#141414"/><path d="M952.70 474.46 L955.10 476.86" stroke="#ddd" stroke-width="0.55"/>
<circle cx="1004.10" cy="475.66" r="2.40" fill="#141414"/><path d="M1002.90 474.46 L1005.30 476.86" stroke="#ddd" stroke-width="0.55"/>
<text x="978.2" y="477.19" font-family="Liberation Sans, sans-serif" font-size="3.4" fill="#666" text-anchor="middle">RCB_400</text>
<text x="995.7" y="477.19" font-family="Liberation Sans, sans-serif" font-size="3.4" fill="#777" text-anchor="middle">12</text>
<line x1="957.5" y1="479.14" x2="1000.3" y2="479.14" stroke="#111" stroke-width="1.4"/>
<circle cx="953.90" cy="482.62" r="2.40" fill="#141414"/><path d="M952.70 481.43 L955.10 483.82" stroke="#ddd" stroke-width="0.55"/>
<circle cx="1004.10" cy="482.62" r="2.40" fill="#141414"/><path d="M1002.90 481.43 L1005.30 483.82" stroke="#ddd" stroke-width="0.55"/>
<text x="978.2" y="484.16" font-family="Liberation Sans, sans-serif" font-size="3.4" fill="#666" text-anchor="middle">BI7</text>
<text x="995.7" y="484.16" font-family="Liberation Sans, sans-serif" font-size="3.4" fill="#777" text-anchor="middle">13</text>
<text x="961.3" y="487.31" font-family="Liberation Sans, sans-serif" font-size="3.2" fill="#999" text-anchor="middle">1</text>
<line x1="965.2" y1="486.11" x2="1000.3" y2="486.11" stroke="#111" stroke-width="0.6"/>
<circle cx="953.90" cy="489.60" r="2.40" fill="#141414"/><path d="M952.70 488.40 L955.10 490.80" stroke="#ddd" stroke-width="0.55"/>
<circle cx="1004.10" cy="489.60" r="2.40" fill="#141414"/><path d="M1002.90 488.40 L1005.30 490.80" stroke="#ddd" stroke-width="0.55"/>
<text x="978.2" y="491.13" font-family="Liberation Sans, sans-serif" font-size="3.4" fill="#666" text-anchor="middle">RCB_400</text>
<text x="995.7" y="491.13" font-family="Liberation Sans, sans-serif" font-size="3.4" fill="#777" text-anchor="middle">14</text>
<line x1="957.5" y1="493.08" x2="1000.3" y2="493.08" stroke="#111" stroke-width="1.8"/>
<circle cx="953.90" cy="496.56" r="2.40" fill="#141414"/><path d="M952.70 495.37 L955.10 497.76" stroke="#ddd" stroke-width="0.55"/>
<circle cx="1004.10" cy="496.56" r="2.40" fill="#141414"/><path d="M1002.90 495.37 L1005.30 497.76" stroke="#ddd" stroke-width="0.55"/>
<text x="978.2" y="498.10" font-family="Liberation Sans, sans-serif" font-size="3.4" fill="#666" text-anchor="middle">AI8</text>
<text x="995.7" y="498.10" font-family="Liberation Sans, sans-serif" font-size="3.4" fill="#777" text-anchor="middle">15</text>
<text x="961.3" y="501.25" font-family="Liberation Sans, sans-serif" font-size="3.2" fill="#999" text-anchor="middle">1</text>
<line x1="965.2" y1="500.05" x2="1000.3" y2="500.05" stroke="#111" stroke-width="0.6"/>
<circle cx="953.90" cy="503.54" r="2.40" fill="#141414"/><path d="M952.70 502.34 L955.10 504.74" stroke="#ddd" stroke-width="0.55"/>
<circle cx="1004.10" cy="503.54" r="2.40" fill="#141414"/><path d="M1002.90 502.34 L1005.30 504.74" stroke="#ddd" stroke-width="0.55"/>
<text x="978.2" y="505.07" font-family="Liberation Sans, sans-serif" font-size="3.4" fill="#666" text-anchor="middle">RCB_400</text>
<text x="995.7" y="505.07" font-family="Liberation Sans, sans-serif" font-size="3.4" fill="#777" text-anchor="middle">16</text>
<line x1="957.5" y1="507.02" x2="1000.3" y2="507.02" stroke="#111" stroke-width="1.4"/>
<circle cx="953.90" cy="510.50" r="2.40" fill="#141414"/><path d="M952.70 509.31 L955.10 511.70" stroke="#ddd" stroke-width="0.55"/>
<circle cx="1004.10" cy="510.50" r="2.40" fill="#141414"/><path d="M1002.90 509.31 L1005.30 511.70" stroke="#ddd" stroke-width="0.55"/>
<text x="978.2" y="512.04" font-family="Liberation Sans, sans-serif" font-size="3.4" fill="#666" text-anchor="middle">AI9</text>
<text x="995.7" y="512.04" font-family="Liberation Sans, sans-serif" font-size="3.4" fill="#777" text-anchor="middle">17</text>
<text x="961.3" y="515.19" font-family="Liberation Sans, sans-serif" font-size="3.2" fill="#999" text-anchor="middle">1</text>
<line x1="965.2" y1="513.99" x2="1000.3" y2="513.99" stroke="#111" stroke-width="0.6"/>
<circle cx="953.90" cy="517.48" r="2.40" fill="#141414"/><path d="M952.70 516.27 L955.10 518.68" stroke="#ddd" stroke-width="0.55"/>
<circle cx="1004.10" cy="517.48" r="2.40" fill="#141414"/><path d="M1002.90 516.27 L1005.30 518.68" stroke="#ddd" stroke-width="0.55"/>
<text x="978.2" y="519.01" font-family="Liberation Sans, sans-serif" font-size="3.4" fill="#666" text-anchor="middle">RCB_400</text>
<text x="995.7" y="519.01" font-family="Liberation Sans, sans-serif" font-size="3.4" fill="#777" text-anchor="middle">18</text>
<line x1="957.5" y1="520.96" x2="1000.3" y2="520.96" stroke="#111" stroke-width="1.8"/>
<circle cx="953.90" cy="524.45" r="2.40" fill="#141414"/><path d="M952.70 523.25 L955.10 525.65" stroke="#ddd" stroke-width="0.55"/>
<circle cx="1004.10" cy="524.45" r="2.40" fill="#141414"/><path d="M1002.90 523.25 L1005.30 525.65" stroke="#ddd" stroke-width="0.55"/>
<text x="978.2" y="525.98" font-family="Liberation Sans, sans-serif" font-size="3.4" fill="#666" text-anchor="middle">AI10</text>
<text x="995.7" y="525.98" font-family="Liberation Sans, sans-serif" font-size="3.4" fill="#777" text-anchor="middle">19</text>
<text x="961.3" y="529.13" font-family="Liberation Sans, sans-serif" font-size="3.2" fill="#999" text-anchor="middle">1</text>
<line x1="965.2" y1="527.93" x2="1000.3" y2="527.93" stroke="#111" stroke-width="0.6"/>
<circle cx="953.90" cy="531.42" r="2.40" fill="#141414"/><path d="M952.70 530.22 L955.10 532.62" stroke="#ddd" stroke-width="0.55"/>
<circle cx="1004.10" cy="531.42" r="2.40" fill="#141414"/><path d="M1002.90 530.22 L1005.30 532.62" stroke="#ddd" stroke-width="0.55"/>
<text x="978.2" y="532.95" font-family="Liberation Sans, sans-serif" font-size="3.4" fill="#666" text-anchor="middle">RCB_400</text>
<text x="995.7" y="532.95" font-family="Liberation Sans, sans-serif" font-size="3.4" fill="#777" text-anchor="middle">20</text>
<line x1="957.5" y1="534.90" x2="1000.3" y2="534.90" stroke="#111" stroke-width="1.8"/>
<circle cx="953.90" cy="538.38" r="2.40" fill="#141414"/><path d="M952.70 537.18 L955.10 539.59" stroke="#ddd" stroke-width="0.55"/>
<circle cx="1004.10" cy="538.38" r="2.40" fill="#141414"/><path d="M1002.90 537.18 L1005.30 539.59" stroke="#ddd" stroke-width="0.55"/>
<text x="978.2" y="539.92" font-family="Liberation Sans, sans-serif" font-size="3.4" fill="#666" text-anchor="middle">BI11</text>
<text x="995.7" y="539.92" font-family="Liberation Sans, sans-serif" font-size="3.4" fill="#777" text-anchor="middle">21</text>
<text x="961.3" y="543.07" font-family="Liberation Sans, sans-serif" font-size="3.2" fill="#999" text-anchor="middle">1</text>
<line x1="965.2" y1="541.87" x2="1000.3" y2="541.87" stroke="#111" stroke-width="0.6"/>
<circle cx="953.90" cy="545.36" r="2.40" fill="#141414"/><path d="M952.70 544.15 L955.10 546.56" stroke="#ddd" stroke-width="0.55"/>
<circle cx="1004.10" cy="545.36" r="2.40" fill="#141414"/><path d="M1002.90 544.15 L1005.30 546.56" stroke="#ddd" stroke-width="0.55"/>
<text x="978.2" y="546.89" font-family="Liberation Sans, sans-serif" font-size="3.4" fill="#666" text-anchor="middle">RCB_400</text>
<text x="995.7" y="546.89" font-family="Liberation Sans, sans-serif" font-size="3.4" fill="#777" text-anchor="middle">22</text>
<line x1="957.5" y1="548.84" x2="1000.3" y2="548.84" stroke="#111" stroke-width="1.4"/>
<circle cx="953.90" cy="552.33" r="2.40" fill="#141414"/><path d="M952.70 551.12 L955.10 553.53" stroke="#ddd" stroke-width="0.55"/>
<circle cx="1004.10" cy="552.33" r="2.40" fill="#141414"/><path d="M1002.90 551.12 L1005.30 553.53" stroke="#ddd" stroke-width="0.55"/>
<text x="978.2" y="553.86" font-family="Liberation Sans, sans-serif" font-size="3.4" fill="#666" text-anchor="middle">BI12</text>
<text x="995.7" y="553.86" font-family="Liberation Sans, sans-serif" font-size="3.4" fill="#777" text-anchor="middle">23</text>
<text x="961.3" y="557.01" font-family="Liberation Sans, sans-serif" font-size="3.2" fill="#999" text-anchor="middle">1</text>
<line x1="965.2" y1="555.81" x2="1000.3" y2="555.81" stroke="#111" stroke-width="0.6"/>
<circle cx="953.90" cy="559.29" r="2.40" fill="#141414"/><path d="M952.70 558.09 L955.10 560.50" stroke="#ddd" stroke-width="0.55"/>
<circle cx="1004.10" cy="559.29" r="2.40" fill="#141414"/><path d="M1002.90 558.09 L1005.30 560.50" stroke="#ddd" stroke-width="0.55"/>
<text x="978.2" y="560.83" font-family="Liberation Sans, sans-serif" font-size="3.4" fill="#666" text-anchor="middle">RCB_400</text>
<text x="995.7" y="560.83" font-family="Liberation Sans, sans-serif" font-size="3.4" fill="#777" text-anchor="middle">24</text>
<line x1="957.5" y1="562.78" x2="1000.3" y2="562.78" stroke="#111" stroke-width="1.4"/>
<circle cx="953.90" cy="566.26" r="2.40" fill="#141414"/><path d="M952.70 565.06 L955.10 567.47" stroke="#ddd" stroke-width="0.55"/>
<circle cx="1004.10" cy="566.26" r="2.40" fill="#141414"/><path d="M1002.90 565.06 L1005.30 567.47" stroke="#ddd" stroke-width="0.55"/>
<text x="978.2" y="567.80" font-family="Liberation Sans, sans-serif" font-size="3.4" fill="#666" text-anchor="middle">BO1</text>
<text x="995.7" y="567.80" font-family="Liberation Sans, sans-serif" font-size="3.4" fill="#777" text-anchor="middle">25</text>
<text x="961.3" y="570.95" font-family="Liberation Sans, sans-serif" font-size="3.2" fill="#999" text-anchor="middle">1</text>
<line x1="965.2" y1="569.75" x2="1000.3" y2="569.75" stroke="#111" stroke-width="0.6"/>
<circle cx="953.90" cy="573.24" r="2.40" fill="#141414"/><path d="M952.70 572.03 L955.10 574.44" stroke="#ddd" stroke-width="0.55"/>
<circle cx="1004.10" cy="573.24" r="2.40" fill="#141414"/><path d="M1002.90 572.03 L1005.30 574.44" stroke="#ddd" stroke-width="0.55"/>
<text x="978.2" y="574.77" font-family="Liberation Sans, sans-serif" font-size="3.4" fill="#666" text-anchor="middle">RCB_400</text>
<text x="995.7" y="574.77" font-family="Liberation Sans, sans-serif" font-size="3.4" fill="#777" text-anchor="middle">26</text>
<line x1="957.5" y1="576.72" x2="1000.3" y2="576.72" stroke="#111" stroke-width="1.4"/>
<circle cx="953.90" cy="580.21" r="2.40" fill="#141414"/><path d="M952.70 579.00 L955.10 581.41" stroke="#ddd" stroke-width="0.55"/>
<circle cx="1004.10" cy="580.21" r="2.40" fill="#141414"/><path d="M1002.90 579.00 L1005.30 581.41" stroke="#ddd" stroke-width="0.55"/>
<text x="978.2" y="581.74" font-family="Liberation Sans, sans-serif" font-size="3.4" fill="#666" text-anchor="middle">BO2</text>
<text x="995.7" y="581.74" font-family="Liberation Sans, sans-serif" font-size="3.4" fill="#777" text-anchor="middle">27</text>
<text x="961.3" y="584.89" font-family="Liberation Sans, sans-serif" font-size="3.2" fill="#999" text-anchor="middle">1</text>
<line x1="965.2" y1="583.69" x2="1000.3" y2="583.69" stroke="#111" stroke-width="0.6"/>
<circle cx="953.90" cy="587.18" r="2.40" fill="#141414"/><path d="M952.70 585.98 L955.10 588.38" stroke="#ddd" stroke-width="0.55"/>
<circle cx="1004.10" cy="587.18" r="2.40" fill="#141414"/><path d="M1002.90 585.98 L1005.30 588.38" stroke="#ddd" stroke-width="0.55"/>
<text x="978.2" y="588.71" font-family="Liberation Sans, sans-serif" font-size="3.4" fill="#666" text-anchor="middle">RCB_400</text>
<text x="995.7" y="588.71" font-family="Liberation Sans, sans-serif" font-size="3.4" fill="#777" text-anchor="middle">28</text>
<line x1="957.5" y1="590.66" x2="1000.3" y2="590.66" stroke="#111" stroke-width="1.4"/>
<circle cx="953.90" cy="594.14" r="2.40" fill="#141414"/><path d="M952.70 592.94 L955.10 595.35" stroke="#ddd" stroke-width="0.55"/>
<circle cx="1004.10" cy="594.14" r="2.40" fill="#141414"/><path d="M1002.90 592.94 L1005.30 595.35" stroke="#ddd" stroke-width="0.55"/>
<text x="978.2" y="595.68" font-family="Liberation Sans, sans-serif" font-size="3.4" fill="#666" text-anchor="middle">AO3</text>
<text x="995.7" y="595.68" font-family="Liberation Sans, sans-serif" font-size="3.4" fill="#777" text-anchor="middle">29</text>
<text x="961.3" y="598.83" font-family="Liberation Sans, sans-serif" font-size="3.2" fill="#999" text-anchor="middle">1</text>
<line x1="965.2" y1="597.63" x2="1000.3" y2="597.63" stroke="#111" stroke-width="0.6"/>
<circle cx="953.90" cy="601.12" r="2.40" fill="#141414"/><path d="M952.70 599.91 L955.10 602.32" stroke="#ddd" stroke-width="0.55"/>
<circle cx="1004.10" cy="601.12" r="2.40" fill="#141414"/><path d="M1002.90 599.91 L1005.30 602.32" stroke="#ddd" stroke-width="0.55"/>
<text x="978.2" y="602.65" font-family="Liberation Sans, sans-serif" font-size="3.4" fill="#666" text-anchor="middle">RCB_400</text>
<text x="995.7" y="602.65" font-family="Liberation Sans, sans-serif" font-size="3.4" fill="#777" text-anchor="middle">30</text>
<line x1="957.5" y1="604.60" x2="1000.3" y2="604.60" stroke="#111" stroke-width="1.4"/>
<circle cx="953.90" cy="608.09" r="2.40" fill="#141414"/><path d="M952.70 606.88 L955.10 609.29" stroke="#ddd" stroke-width="0.55"/>
<circle cx="1004.10" cy="608.09" r="2.40" fill="#141414"/><path d="M1002.90 606.88 L1005.30 609.29" stroke="#ddd" stroke-width="0.55"/>
<text x="978.2" y="609.62" font-family="Liberation Sans, sans-serif" font-size="3.4" fill="#666" text-anchor="middle">AO4</text>
<text x="995.7" y="609.62" font-family="Liberation Sans, sans-serif" font-size="3.4" fill="#777" text-anchor="middle">31</text>
<text x="961.3" y="612.77" font-family="Liberation Sans, sans-serif" font-size="3.2" fill="#999" text-anchor="middle">1</text>
<line x1="965.2" y1="611.57" x2="1000.3" y2="611.57" stroke="#111" stroke-width="0.6"/>
<circle cx="953.90" cy="615.05" r="2.40" fill="#141414"/><path d="M952.70 613.85 L955.10 616.25" stroke="#ddd" stroke-width="0.55"/>
<circle cx="1004.10" cy="615.05" r="2.40" fill="#141414"/><path d="M1002.90 613.85 L1005.30 616.25" stroke="#ddd" stroke-width="0.55"/>
<text x="978.2" y="616.59" font-family="Liberation Sans, sans-serif" font-size="3.4" fill="#666" text-anchor="middle">RCB_400</text>
<text x="995.7" y="616.59" font-family="Liberation Sans, sans-serif" font-size="3.4" fill="#777" text-anchor="middle">32</text>
<line x1="957.5" y1="618.54" x2="1000.3" y2="618.54" stroke="#111" stroke-width="1.4"/>
<circle cx="953.90" cy="622.02" r="2.40" fill="#141414"/><path d="M952.70 620.82 L955.10 623.23" stroke="#ddd" stroke-width="0.55"/>
<circle cx="1004.10" cy="622.02" r="2.40" fill="#141414"/><path d="M1002.90 620.82 L1005.30 623.23" stroke="#ddd" stroke-width="0.55"/>
<text x="978.2" y="623.56" font-family="Liberation Sans, sans-serif" font-size="3.4" fill="#666" text-anchor="middle">AO5</text>
<text x="995.7" y="623.56" font-family="Liberation Sans, sans-serif" font-size="3.4" fill="#777" text-anchor="middle">33</text>
<text x="961.3" y="626.71" font-family="Liberation Sans, sans-serif" font-size="3.2" fill="#999" text-anchor="middle">1</text>
<line x1="965.2" y1="625.51" x2="1000.3" y2="625.51" stroke="#111" stroke-width="0.6"/>
<circle cx="953.90" cy="629.00" r="2.40" fill="#141414"/><path d="M952.70 627.79 L955.10 630.20" stroke="#ddd" stroke-width="0.55"/>
<circle cx="1004.10" cy="629.00" r="2.40" fill="#141414"/><path d="M1002.90 627.79 L1005.30 630.20" stroke="#ddd" stroke-width="0.55"/>
<text x="978.2" y="630.53" font-family="Liberation Sans, sans-serif" font-size="3.4" fill="#666" text-anchor="middle">RCB_400</text>
<text x="995.7" y="630.53" font-family="Liberation Sans, sans-serif" font-size="3.4" fill="#777" text-anchor="middle">34</text>
<line x1="957.5" y1="632.48" x2="1000.3" y2="632.48" stroke="#111" stroke-width="1.8"/>
<circle cx="953.90" cy="635.97" r="2.40" fill="#141414"/><path d="M952.70 634.76 L955.10 637.17" stroke="#ddd" stroke-width="0.55"/>
<circle cx="1004.10" cy="635.97" r="2.40" fill="#141414"/><path d="M1002.90 634.76 L1005.30 637.17" stroke="#ddd" stroke-width="0.55"/>
<text x="978.2" y="637.50" font-family="Liberation Sans, sans-serif" font-size="3.4" fill="#666" text-anchor="middle">AO6</text>
<text x="995.7" y="637.50" font-family="Liberation Sans, sans-serif" font-size="3.4" fill="#777" text-anchor="middle">35</text>
<text x="961.3" y="640.65" font-family="Liberation Sans, sans-serif" font-size="3.2" fill="#999" text-anchor="middle">1</text>
<line x1="965.2" y1="639.45" x2="1000.3" y2="639.45" stroke="#111" stroke-width="0.6"/>
<circle cx="953.90" cy="642.94" r="2.40" fill="#141414"/><path d="M952.70 641.74 L955.10 644.14" stroke="#ddd" stroke-width="0.55"/>
<circle cx="1004.10" cy="642.94" r="2.40" fill="#141414"/><path d="M1002.90 641.74 L1005.30 644.14" stroke="#ddd" stroke-width="0.55"/>
<text x="978.2" y="644.47" font-family="Liberation Sans, sans-serif" font-size="3.4" fill="#666" text-anchor="middle">RCB_400</text>
<text x="995.7" y="644.47" font-family="Liberation Sans, sans-serif" font-size="3.4" fill="#777" text-anchor="middle">36</text>
<line x1="957.5" y1="646.42" x2="1000.3" y2="646.42" stroke="#111" stroke-width="1.8"/>
<circle cx="953.90" cy="649.90" r="2.40" fill="#141414"/><path d="M952.70 648.70 L955.10 651.11" stroke="#ddd" stroke-width="0.55"/>
<circle cx="1004.10" cy="649.90" r="2.40" fill="#141414"/><path d="M1002.90 648.70 L1005.30 651.11" stroke="#ddd" stroke-width="0.55"/>
<text x="978.2" y="651.44" font-family="Liberation Sans, sans-serif" font-size="3.4" fill="#666" text-anchor="middle">AO7</text>
<text x="995.7" y="651.44" font-family="Liberation Sans, sans-serif" font-size="3.4" fill="#777" text-anchor="middle">37</text>
<text x="961.3" y="654.59" font-family="Liberation Sans, sans-serif" font-size="3.2" fill="#999" text-anchor="middle">1</text>
<line x1="965.2" y1="653.39" x2="1000.3" y2="653.39" stroke="#111" stroke-width="0.6"/>
<circle cx="953.90" cy="656.88" r="2.40" fill="#141414"/><path d="M952.70 655.67 L955.10 658.08" stroke="#ddd" stroke-width="0.55"/>
<circle cx="1004.10" cy="656.88" r="2.40" fill="#141414"/><path d="M1002.90 655.67 L1005.30 658.08" stroke="#ddd" stroke-width="0.55"/>
<text x="978.2" y="658.41" font-family="Liberation Sans, sans-serif" font-size="3.4" fill="#666" text-anchor="middle">RCB_400</text>
<text x="995.7" y="658.41" font-family="Liberation Sans, sans-serif" font-size="3.4" fill="#777" text-anchor="middle">38</text>
<line x1="957.5" y1="660.36" x2="1000.3" y2="660.36" stroke="#111" stroke-width="1.8"/>
<circle cx="953.90" cy="663.85" r="2.40" fill="#141414"/><path d="M952.70 662.64 L955.10 665.05" stroke="#ddd" stroke-width="0.55"/>
<circle cx="1004.10" cy="663.85" r="2.40" fill="#141414"/><path d="M1002.90 662.64 L1005.30 665.05" stroke="#ddd" stroke-width="0.55"/>
<text x="978.2" y="665.38" font-family="Liberation Sans, sans-serif" font-size="3.4" fill="#666" text-anchor="middle">AO8</text>
<text x="995.7" y="665.38" font-family="Liberation Sans, sans-serif" font-size="3.4" fill="#777" text-anchor="middle">39</text>
<text x="961.3" y="668.53" font-family="Liberation Sans, sans-serif" font-size="3.2" fill="#999" text-anchor="middle">1</text>
<line x1="965.2" y1="667.33" x2="1000.3" y2="667.33" stroke="#111" stroke-width="0.6"/>
<circle cx="953.90" cy="670.81" r="2.40" fill="#141414"/><path d="M952.70 669.61 L955.10 672.01" stroke="#ddd" stroke-width="0.55"/>
<circle cx="1004.10" cy="670.81" r="2.40" fill="#141414"/><path d="M1002.90 669.61 L1005.30 672.01" stroke="#ddd" stroke-width="0.55"/>
<text x="978.2" y="672.35" font-family="Liberation Sans, sans-serif" font-size="3.4" fill="#666" text-anchor="middle">RCB_400</text>
<text x="995.7" y="672.35" font-family="Liberation Sans, sans-serif" font-size="3.4" fill="#777" text-anchor="middle">40</text><line x1="1390" y1="222.00" x2="1622" y2="222.00" stroke="#f1f1f1" stroke-width="0.8"/>
<line x1="1390" y1="249.00" x2="1622" y2="249.00" stroke="#f1f1f1" stroke-width="0.8"/>
<line x1="1390" y1="276.60" x2="1622" y2="276.60" stroke="#f1f1f1" stroke-width="0.8"/>
<line x1="1390" y1="315.70" x2="1622" y2="315.70" stroke="#f1f1f1" stroke-width="0.8"/>
<line x1="1390" y1="343.60" x2="1622" y2="343.60" stroke="#f1f1f1" stroke-width="0.8"/>
<line x1="1390" y1="370.00" x2="1622" y2="370.00" stroke="#f1f1f1" stroke-width="0.8"/>
<line x1="1390" y1="382.00" x2="1622" y2="382.00" stroke="#f1f1f1" stroke-width="0.8"/>
<line x1="1390" y1="406.00" x2="1622" y2="406.00" stroke="#f1f1f1" stroke-width="0.8"/>
<line x1="1390" y1="432.50" x2="1622" y2="432.50" stroke="#f1f1f1" stroke-width="0.8"/>
<line x1="1390" y1="466.00" x2="1622" y2="466.00" stroke="#f1f1f1" stroke-width="0.8"/>
<line x1="1390" y1="474.00" x2="1622" y2="474.00" stroke="#f1f1f1" stroke-width="0.8"/>
<line x1="1390" y1="503.00" x2="1622" y2="503.00" stroke="#f1f1f1" stroke-width="0.8"/>
<line x1="1390" y1="620.00" x2="1622" y2="620.00" stroke="#f1f1f1" stroke-width="0.8"/>
<line x1="1390" y1="686.00" x2="1622" y2="686.00" stroke="#f1f1f1" stroke-width="0.8"/>
<line x1="1390" y1="694.00" x2="1622" y2="694.00" stroke="#f1f1f1" stroke-width="0.8"/>
<line x1="1390" y1="740.00" x2="1622" y2="740.00" stroke="#f1f1f1" stroke-width="0.8"/>
<line x1="1390" y1="781.00" x2="1622" y2="781.00" stroke="#f1f1f1" stroke-width="0.8"/>
<line x1="1390" y1="822.00" x2="1622" y2="822.00" stroke="#f1f1f1" stroke-width="0.8"/>
<line x1="1390" y1="866.00" x2="1622" y2="866.00" stroke="#f1f1f1" stroke-width="0.8"/>
<line x1="1390" y1="908.00" x2="1622" y2="908.00" stroke="#f1f1f1" stroke-width="0.8"/>
<line x1="1501.5" y1="200" x2="1501.5" y2="908" stroke="#f3f3f3" stroke-width="0.8"/>
<line x1="1561.6" y1="200" x2="1561.6" y2="908" stroke="#f3f3f3" stroke-width="0.8"/>
<line x1="1621.6" y1="200" x2="1621.6" y2="908" stroke="#f3f3f3" stroke-width="0.8"/>
<rect x="1291.00" y="206.95" width="69.00" height="7.50" rx="3.75" fill="#fff" stroke="#222" stroke-width="1.0"/><ellipse cx="1355.95" cy="210.70" rx="3.75" ry="3.55" fill="#fff" stroke="#222" stroke-width="0.9"/><text x="1321.75" y="212.10" font-family="Liberation Sans, sans-serif" font-size="4" font-weight="bold" fill="#333" text-anchor="middle">I-1 MAT 24 Ω22</text>
<rect x="1291.00" y="233.65" width="69.00" height="7.50" rx="3.75" fill="#fff" stroke="#222" stroke-width="1.0"/><ellipse cx="1355.95" cy="237.40" rx="3.75" ry="3.55" fill="#fff" stroke="#222" stroke-width="0.9"/><text x="1321.75" y="238.80" font-family="Liberation Sans, sans-serif" font-size="4" font-weight="bold" fill="#333" text-anchor="middle">I-2 MAT NC Ω22</text>
<rect x="1291.00" y="260.85" width="69.00" height="7.50" rx="3.75" fill="#fff" stroke="#222" stroke-width="1.0"/><ellipse cx="1355.95" cy="264.60" rx="3.75" ry="3.55" fill="#fff" stroke="#222" stroke-width="0.9"/><text x="1321.75" y="266.00" font-family="Liberation Sans, sans-serif" font-size="4" font-weight="bold" fill="#333" text-anchor="middle">I-3 MAT NC Ω22</text>
<rect x="1281.00" y="286.95" width="69.00" height="7.50" rx="3.75" fill="#fff" stroke="#222" stroke-width="1.0"/><ellipse cx="1345.95" cy="290.70" rx="3.75" ry="3.55" fill="#fff" stroke="#222" stroke-width="0.9"/><text x="1311.75" y="292.10" font-family="Liberation Sans, sans-serif" font-size="4" font-weight="bold" fill="#333" text-anchor="middle">I-4 SA SP NC Ω22</text>
<rect x="1281.00" y="327.85" width="69.00" height="7.50" rx="3.75" fill="#fff" stroke="#222" stroke-width="1.0"/><ellipse cx="1345.95" cy="331.60" rx="3.75" ry="3.55" fill="#fff" stroke="#222" stroke-width="0.9"/><text x="1311.75" y="333.00" font-family="Liberation Sans, sans-serif" font-size="4" font-weight="bold" fill="#333" text-anchor="middle">I-6 FZ 2 Ω22</text>
<rect x="1281.00" y="355.05" width="69.00" height="7.50" rx="3.75" fill="#fff" stroke="#222" stroke-width="1.0"/><ellipse cx="1345.95" cy="358.80" rx="3.75" ry="3.55" fill="#fff" stroke="#222" stroke-width="0.9"/><text x="1311.75" y="360.20" font-family="Liberation Sans, sans-serif" font-size="4" font-weight="bold" fill="#333" text-anchor="middle">I-7 SA SMK 18 Ω22</text>
<rect x="1281.00" y="390.35" width="69.00" height="7.50" rx="3.75" fill="#fff" stroke="#222" stroke-width="1.0"/><ellipse cx="1345.95" cy="394.10" rx="3.75" ry="3.55" fill="#fff" stroke="#222" stroke-width="0.9"/><text x="1311.75" y="395.50" font-family="Liberation Sans, sans-serif" font-size="4" font-weight="bold" fill="#333" text-anchor="middle">I-8 RAH 21 Ω18</text>
<rect x="1281.00" y="417.55" width="69.00" height="7.50" rx="3.75" fill="#fff" stroke="#222" stroke-width="1.0"/><ellipse cx="1345.95" cy="421.30" rx="3.75" ry="3.55" fill="#fff" stroke="#222" stroke-width="0.9"/><text x="1311.75" y="422.70" font-family="Liberation Sans, sans-serif" font-size="4" font-weight="bold" fill="#333" text-anchor="middle">I-9 RA CO2 13 Ω18</text>
<rect x="1281.00" y="444.45" width="69.00" height="7.50" rx="3.75" fill="#fff" stroke="#222" stroke-width="1.0"/><ellipse cx="1345.95" cy="448.20" rx="3.75" ry="3.55" fill="#fff" stroke="#222" stroke-width="0.9"/><text x="1311.75" y="449.60" font-family="Liberation Sans, sans-serif" font-size="4" font-weight="bold" fill="#333" text-anchor="middle">I-10 OA AFS NC Ω22</text>
<rect x="1281.00" y="485.45" width="69.00" height="7.50" rx="3.75" fill="#fff" stroke="#222" stroke-width="1.0"/><ellipse cx="1345.95" cy="489.20" rx="3.75" ry="3.55" fill="#fff" stroke="#222" stroke-width="0.9"/><text x="1311.75" y="490.60" font-family="Liberation Sans, sans-serif" font-size="4" font-weight="bold" fill="#333" text-anchor="middle">I-12 FILT 8 Ω22</text>
<rect x="1281.00" y="527.45" width="69.00" height="7.50" rx="3.75" fill="#fff" stroke="#222" stroke-width="1.0"/><ellipse cx="1345.95" cy="531.20" rx="3.75" ry="3.55" fill="#fff" stroke="#222" stroke-width="0.9"/><text x="1311.75" y="532.60" font-family="Liberation Sans, sans-serif" font-size="4" font-weight="bold" fill="#333" text-anchor="middle">O-1 SFC 2 Ω22</text>
<rect x="1281.00" y="553.25" width="69.00" height="7.50" rx="3.75" fill="#fff" stroke="#222" stroke-width="1.0"/><ellipse cx="1345.95" cy="557.00" rx="3.75" ry="3.55" fill="#fff" stroke="#222" stroke-width="0.9"/><text x="1311.75" y="558.40" font-family="Liberation Sans, sans-serif" font-size="4" font-weight="bold" fill="#333" text-anchor="middle">O-3 SF MOD 14 Ω22</text>
<rect x="1281.00" y="596.85" width="69.00" height="7.50" rx="3.75" fill="#fff" stroke="#222" stroke-width="1.0"/><ellipse cx="1345.95" cy="600.60" rx="3.75" ry="3.55" fill="#fff" stroke="#222" stroke-width="0.9"/><text x="1311.75" y="602.00" font-family="Liberation Sans, sans-serif" font-size="4" font-weight="bold" fill="#333" text-anchor="middle">I-5 SFS 8 Ω22</text>
<rect x="1281.00" y="636.85" width="69.00" height="7.50" rx="3.75" fill="#fff" stroke="#222" stroke-width="1.0"/><ellipse cx="1345.95" cy="640.60" rx="3.75" ry="3.55" fill="#fff" stroke="#222" stroke-width="0.9"/><text x="1311.75" y="642.00" font-family="Liberation Sans, sans-serif" font-size="4" font-weight="bold" fill="#333" text-anchor="middle">O-2 HWP 8 2 Ω22</text>
<rect x="1281.00" y="667.25" width="69.00" height="7.50" rx="3.75" fill="#fff" stroke="#222" stroke-width="1.0"/><ellipse cx="1345.95" cy="671.00" rx="3.75" ry="3.55" fill="#fff" stroke="#222" stroke-width="0.9"/><text x="1311.75" y="672.40" font-family="Liberation Sans, sans-serif" font-size="4" font-weight="bold" fill="#333" text-anchor="middle">I-11 HWP 8 Ω22</text>
<rect x="1281.00" y="704.95" width="69.00" height="7.50" rx="3.75" fill="#fff" stroke="#222" stroke-width="1.0"/><ellipse cx="1345.95" cy="708.70" rx="3.75" ry="3.55" fill="#fff" stroke="#222" stroke-width="0.9"/><text x="1311.75" y="710.10" font-family="Liberation Sans, sans-serif" font-size="4" font-weight="bold" fill="#333" text-anchor="middle">O-4 OAD M 10 Ω18</text>
<rect x="1281.00" y="746.55" width="69.00" height="7.50" rx="3.75" fill="#fff" stroke="#222" stroke-width="1.0"/><ellipse cx="1345.95" cy="750.30" rx="3.75" ry="3.55" fill="#fff" stroke="#222" stroke-width="0.9"/><text x="1311.75" y="751.70" font-family="Liberation Sans, sans-serif" font-size="4" font-weight="bold" fill="#333" text-anchor="middle">O-5 HVC M 10 Ω18</text>
<rect x="1281.00" y="787.55" width="69.00" height="7.50" rx="3.75" fill="#fff" stroke="#222" stroke-width="1.0"/><ellipse cx="1345.95" cy="791.30" rx="3.75" ry="3.55" fill="#fff" stroke="#222" stroke-width="0.9"/><text x="1311.75" y="792.70" font-family="Liberation Sans, sans-serif" font-size="4" font-weight="bold" fill="#333" text-anchor="middle">O-6 CVC M 10 Ω18</text>
<rect x="1281.00" y="832.05" width="69.00" height="7.50" rx="3.75" fill="#fff" stroke="#222" stroke-width="1.0"/><ellipse cx="1345.95" cy="835.80" rx="3.75" ry="3.55" fill="#fff" stroke="#222" stroke-width="0.9"/><text x="1311.75" y="837.20" font-family="Liberation Sans, sans-serif" font-size="4" font-weight="bold" fill="#333" text-anchor="middle">O-7 OAD M 10 Ω18</text>
<rect x="1281.00" y="874.95" width="69.00" height="7.50" rx="3.75" fill="#fff" stroke="#222" stroke-width="1.0"/><ellipse cx="1345.95" cy="878.70" rx="3.75" ry="3.55" fill="#fff" stroke="#222" stroke-width="0.9"/><text x="1311.75" y="880.10" font-family="Liberation Sans, sans-serif" font-size="4" font-weight="bold" fill="#333" text-anchor="middle">O-8 RAD M 10 Ω18</text>
<path d="M1360 210.70 L1366 210.70 L1376 207.40 L1387 207.40" fill="none" stroke="#333" stroke-width="0.6"/><rect x="1381" y="206.60" width="4" height="1.6" fill="#444"/><path d="M1360 210.70 L1366 210.70 L1376 214.00 L1387 214.00" fill="none" stroke="#333" stroke-width="0.6"/><rect x="1381" y="213.20" width="4" height="1.6" fill="#444"/>
<rect x="1387.30" y="204.10" width="22.3" height="13.20" fill="#fff" stroke="#111" stroke-width="1.0"/><line x1="1393.80" y1="204.10" x2="1393.80" y2="217.30" stroke="#111" stroke-width="0.6"/><circle cx="1390.55" cy="207.40" r="2.20" fill="#141414"/><path d="M1389.45 206.30 L1391.65 208.50" stroke="#ddd" stroke-width="0.55"/><text x="1401.70" y="208.72" font-family="Liberation Sans, sans-serif" font-size="3.6" fill="#555" text-anchor="middle">GND</text><line x1="1387.30" y1="210.70" x2="1409.60" y2="210.70" stroke="#111" stroke-width="0.6"/><circle cx="1390.55" cy="214.00" r="2.20" fill="#141414"/><path d="M1389.45 212.90 L1391.65 215.10" stroke="#ddd" stroke-width="0.55"/><text x="1401.70" y="215.32" font-family="Liberation Sans, sans-serif" font-size="3.6" fill="#555" text-anchor="middle">SIG</text>
<rect x="1409.6" y="204.10" width="4.5" height="13.2" fill="#bdbdbd" stroke="#111" stroke-width="0.6"/>
<rect x="1414.1" y="199.90" width="11.7" height="21.6" fill="#fff" stroke="#111" stroke-width="1"/>
<path d="M1420 207.70 L1423 210.70 L1420 213.70 L1417 210.70 Z M1420 203.70 V207.70 M1420 213.70 V217.70" fill="none" stroke="#333" stroke-width="0.5"/>
<rect x="1428.5" y="206.90" width="5.5" height="7.6" fill="#333"/>
<line x1="1434" y1="210.70" x2="1474" y2="210.70" stroke="#555" stroke-width="1"/>
<path d="M1360 237.40 L1366 237.40 L1376 234.10 L1387 234.10" fill="none" stroke="#333" stroke-width="0.6"/><rect x="1381" y="233.30" width="4" height="1.6" fill="#444"/><path d="M1360 237.40 L1366 237.40 L1376 240.70 L1387 240.70" fill="none" stroke="#333" stroke-width="0.6"/><rect x="1381" y="239.90" width="4" height="1.6" fill="#444"/>
<rect x="1387.30" y="230.80" width="22.3" height="13.20" fill="#fff" stroke="#111" stroke-width="1.0"/><line x1="1393.80" y1="230.80" x2="1393.80" y2="244.00" stroke="#111" stroke-width="0.6"/><circle cx="1390.55" cy="234.10" r="2.20" fill="#141414"/><path d="M1389.45 233.00 L1391.65 235.20" stroke="#ddd" stroke-width="0.55"/><text x="1401.70" y="235.42" font-family="Liberation Sans, sans-serif" font-size="3.6" fill="#555" text-anchor="middle">GND</text><line x1="1387.30" y1="237.40" x2="1409.60" y2="237.40" stroke="#111" stroke-width="0.6"/><circle cx="1390.55" cy="240.70" r="2.20" fill="#141414"/><path d="M1389.45 239.60 L1391.65 241.80" stroke="#ddd" stroke-width="0.55"/><text x="1401.70" y="242.02" font-family="Liberation Sans, sans-serif" font-size="3.6" fill="#555" text-anchor="middle">SIG</text>
<rect x="1409.6" y="230.80" width="4.5" height="13.2" fill="#bdbdbd" stroke="#111" stroke-width="0.6"/>
<rect x="1414.1" y="226.60" width="11.7" height="21.6" fill="#fff" stroke="#111" stroke-width="1"/>
<path d="M1420 234.40 L1423 237.40 L1420 240.40 L1417 237.40 Z M1420 230.40 V234.40 M1420 240.40 V244.40" fill="none" stroke="#333" stroke-width="0.5"/>
<rect x="1428.5" y="233.60" width="5.5" height="7.6" fill="#333"/>
<line x1="1434" y1="237.40" x2="1474" y2="237.40" stroke="#555" stroke-width="1"/>
<path d="M1360 264.60 L1366 264.60 L1376 261.30 L1387 261.30" fill="none" stroke="#333" stroke-width="0.6"/><rect x="1381" y="260.50" width="4" height="1.6" fill="#444"/><path d="M1360 264.60 L1366 264.60 L1376 267.90 L1387 267.90" fill="none" stroke="#333" stroke-width="0.6"/><rect x="1381" y="267.10" width="4" height="1.6" fill="#444"/>
<rect x="1387.30" y="258.00" width="22.3" height="13.20" fill="#fff" stroke="#111" stroke-width="1.0"/><line x1="1393.80" y1="258.00" x2="1393.80" y2="271.20" stroke="#111" stroke-width="0.6"/><circle cx="1390.55" cy="261.30" r="2.20" fill="#141414"/><path d="M1389.45 260.20 L1391.65 262.40" stroke="#ddd" stroke-width="0.55"/><text x="1401.70" y="262.62" font-family="Liberation Sans, sans-serif" font-size="3.6" fill="#555" text-anchor="middle">GND</text><line x1="1387.30" y1="264.60" x2="1409.60" y2="264.60" stroke="#111" stroke-width="0.6"/><circle cx="1390.55" cy="267.90" r="2.20" fill="#141414"/><path d="M1389.45 266.80 L1391.65 269.00" stroke="#ddd" stroke-width="0.55"/><text x="1401.70" y="269.22" font-family="Liberation Sans, sans-serif" font-size="3.6" fill="#555" text-anchor="middle">SIG</text>
<rect x="1409.6" y="258.00" width="4.5" height="13.2" fill="#bdbdbd" stroke="#111" stroke-width="0.6"/>
<rect x="1414.1" y="253.80" width="11.7" height="21.6" fill="#fff" stroke="#111" stroke-width="1"/>
<path d="M1420 261.60 L1423 264.60 L1420 267.60 L1417 264.60 Z M1420 257.60 V261.60 M1420 267.60 V271.60" fill="none" stroke="#333" stroke-width="0.5"/>
<rect x="1428.5" y="260.80" width="5.5" height="7.6" fill="#333"/>
<line x1="1434" y1="264.60" x2="1474" y2="264.60" stroke="#555" stroke-width="1"/>
<path d="M1350 290.70 L1358 290.70 L1368 283.90 L1387 283.90" fill="none" stroke="#333" stroke-width="0.6"/><rect x="1381" y="283.10" width="4" height="1.6" fill="#444"/><path d="M1350 290.70 L1358 290.70 L1368 290.70 L1387 290.70" fill="none" stroke="#333" stroke-width="0.6"/><rect x="1381" y="289.90" width="4" height="1.6" fill="#444"/><path d="M1350 290.70 L1358 290.70 L1368 297.50 L1387 297.50" fill="none" stroke="#333" stroke-width="0.6"/><rect x="1381" y="296.70" width="4" height="1.6" fill="#444"/>
<rect x="1387.30" y="282.50" width="22.3" height="21.60" fill="#fff" stroke="#777" stroke-width="0.7"/><line x1="1393.80" y1="282.50" x2="1393.80" y2="304.10" stroke="#777" stroke-width="0.6"/><circle cx="1390.55" cy="286.10" r="2" fill="#fff" stroke="#777" stroke-width="0.5"/><line x1="1389.30" y1="287.10" x2="1391.80" y2="285.10" stroke="#777" stroke-width="0.4"/><text x="1401.70" y="287.54" font-family="Liberation Sans, sans-serif" font-size="3.6" fill="#555" text-anchor="middle">24 VAC</text><line x1="1387.30" y1="289.70" x2="1409.60" y2="289.70" stroke="#777" stroke-width="0.6"/><circle cx="1390.55" cy="293.30" r="2" fill="#fff" stroke="#777" stroke-width="0.5"/><line x1="1389.30" y1="294.30" x2="1391.80" y2="292.30" stroke="#777" stroke-width="0.4"/><text x="1401.70" y="294.74" font-family="Liberation Sans, sans-serif" font-size="3.6" fill="#555" text-anchor="middle">0-5 SUP</text><line x1="1387.30" y1="296.90" x2="1409.60" y2="296.90" stroke="#777" stroke-width="0.6"/><circle cx="1390.55" cy="300.50" r="2" fill="#fff" stroke="#777" stroke-width="0.5"/><line x1="1389.30" y1="301.50" x2="1391.80" y2="299.50" stroke="#777" stroke-width="0.4"/><text x="1401.70" y="301.94" font-family="Liberation Sans, sans-serif" font-size="3.6" fill="#555" text-anchor="middle">COM</text>
<rect x="1409.6" y="282.50" width="6.5" height="21.6" fill="#bdbdbd" stroke="#777" stroke-width="0.5"/>
<rect x="1416.4" y="281.10" width="18.8" height="23" fill="#fff" stroke="#666" stroke-width="0.8"/>
<rect x="1421" y="282.70" width="9" height="3" fill="#fff" stroke="#888" stroke-width="0.5"/>
<line x1="1416.4" y1="300.70" x2="1435.2" y2="300.70" stroke="#666" stroke-width="0.6"/>
<text x="1425.8" y="292.70" font-family="Liberation Sans, sans-serif" font-size="3.4" fill="#777" text-anchor="middle">DP</text>
<path d="M1425 304.10 V312.70 H1440 M1425 307.70 H1440 M1440 306.20 V309.20 M1440 311.20 V314.20" fill="none" stroke="#555" stroke-width="0.6"/>
<text x="1443" y="309.20" font-family="Liberation Sans, sans-serif" font-size="3.4" fill="#555">LO</text><text x="1443" y="314.70" font-family="Liberation Sans, sans-serif" font-size="3.4" fill="#555">HI</text>
<path d="M1350 331.60 L1358 331.60 L1368 328.30 L1387 328.30" fill="none" stroke="#333" stroke-width="0.6"/><rect x="1381" y="327.50" width="4" height="1.6" fill="#444"/><path d="M1350 331.60 L1358 331.60 L1368 334.90 L1387 334.90" fill="none" stroke="#333" stroke-width="0.6"/><rect x="1381" y="334.10" width="4" height="1.6" fill="#444"/>
<rect x="1387.30" y="325.00" width="22.3" height="13.20" fill="#fff" stroke="#111" stroke-width="1.0"/><line x1="1393.80" y1="325.00" x2="1393.80" y2="338.20" stroke="#111" stroke-width="0.6"/><circle cx="1390.55" cy="328.30" r="2.20" fill="#141414"/><path d="M1389.45 327.20 L1391.65 329.40" stroke="#ddd" stroke-width="0.55"/><text x="1401.70" y="329.62" font-family="Liberation Sans, sans-serif" font-size="3.6" fill="#555" text-anchor="middle">GND</text><line x1="1387.30" y1="331.60" x2="1409.60" y2="331.60" stroke="#111" stroke-width="0.6"/><circle cx="1390.55" cy="334.90" r="2.20" fill="#141414"/><path d="M1389.45 333.80 L1391.65 336.00" stroke="#ddd" stroke-width="0.55"/><text x="1401.70" y="336.22" font-family="Liberation Sans, sans-serif" font-size="3.6" fill="#555" text-anchor="middle">SIG</text>
<rect x="1409.6" y="325.00" width="4.5" height="13.2" fill="#bdbdbd" stroke="#111" stroke-width="0.6"/>
<rect x="1414.1" y="321.20" width="12.6" height="21.2" fill="#fff" stroke="#111" stroke-width="1"/>
<text transform="translate(1423.2,331.60) rotate(-90)" font-family="Liberation Sans, sans-serif" font-size="7" fill="#3a4a66" text-anchor="middle">FZT</text>
<rect x="1428" y="327.80" width="6" height="7.6" fill="#333"/>
<line x1="1434" y1="331.60" x2="1441" y2="331.60" stroke="#333" stroke-width="0.8"/>
<ellipse cx="1443.50" cy="331.60" rx="1.6" ry="3" fill="none" stroke="#333" stroke-width="0.7"/><ellipse cx="1446.10" cy="331.60" rx="1.6" ry="3" fill="none" stroke="#333" stroke-width="0.7"/><ellipse cx="1448.70" cy="331.60" rx="1.6" ry="3" fill="none" stroke="#333" stroke-width="0.7"/><ellipse cx="1451.30" cy="331.60" rx="1.6" ry="3" fill="none" stroke="#333" stroke-width="0.7"/><ellipse cx="1453.90" cy="331.60" rx="1.6" ry="3" fill="none" stroke="#333" stroke-width="0.7"/><ellipse cx="1456.50" cy="331.60" rx="1.6" ry="3" fill="none" stroke="#333" stroke-width="0.7"/><ellipse cx="1459.10" cy="331.60" rx="1.6" ry="3" fill="none" stroke="#333" stroke-width="0.7"/><ellipse cx="1461.70" cy="331.60" rx="1.6" ry="3" fill="none" stroke="#333" stroke-width="0.7"/><ellipse cx="1464.30" cy="331.60" rx="1.6" ry="3" fill="none" stroke="#333" stroke-width="0.7"/><ellipse cx="1466.90" cy="331.60" rx="1.6" ry="3" fill="none" stroke="#333" stroke-width="0.7"/><ellipse cx="1469.50" cy="331.60" rx="1.6" ry="3" fill="none" stroke="#333" stroke-width="0.7"/><ellipse cx="1472.10" cy="331.60" rx="1.6" ry="3" fill="none" stroke="#333" stroke-width="0.7"/><ellipse cx="1474.70" cy="331.60" rx="1.6" ry="3" fill="none" stroke="#333" stroke-width="0.7"/><ellipse cx="1477.30" cy="331.60" rx="1.6" ry="3" fill="none" stroke="#333" stroke-width="0.7"/><ellipse cx="1479.90" cy="331.60" rx="1.6" ry="3" fill="none" stroke="#333" stroke-width="0.7"/>
<path d="M1481 331.60 L1485 330.60" stroke="#333" stroke-width="0.6"/>
<path d="M1350 358.80 L1358 358.80 L1368 355.50 L1387 355.50" fill="none" stroke="#333" stroke-width="0.6"/><rect x="1381" y="354.70" width="4" height="1.6" fill="#444"/><path d="M1350 358.80 L1358 358.80 L1368 362.10 L1387 362.10" fill="none" stroke="#333" stroke-width="0.6"/><rect x="1381" y="361.30" width="4" height="1.6" fill="#444"/>
<rect x="1387.30" y="352.20" width="22.3" height="13.20" fill="#fff" stroke="#111" stroke-width="1.0"/><line x1="1393.80" y1="352.20" x2="1393.80" y2="365.40" stroke="#111" stroke-width="0.6"/><circle cx="1390.55" cy="355.50" r="2.20" fill="#141414"/><path d="M1389.45 354.40 L1391.65 356.60" stroke="#ddd" stroke-width="0.55"/><text x="1401.70" y="356.82" font-family="Liberation Sans, sans-serif" font-size="3.6" fill="#555" text-anchor="middle">GND</text><line x1="1387.30" y1="358.80" x2="1409.60" y2="358.80" stroke="#111" stroke-width="0.6"/><circle cx="1390.55" cy="362.10" r="2.20" fill="#141414"/><path d="M1389.45 361.00 L1391.65 363.20" stroke="#ddd" stroke-width="0.55"/><text x="1401.70" y="363.42" font-family="Liberation Sans, sans-serif" font-size="3.6" fill="#555" text-anchor="middle">SIG</text>
<rect x="1409.6" y="352.20" width="4.5" height="13.2" fill="#bdbdbd" stroke="#111" stroke-width="0.6"/>
<rect x="1414.1" y="351.20" width="24.4" height="15.4" fill="#fff" stroke="#111" stroke-width="1"/>
<path d="M1416 355.30 H1424 V357.30 M1416 362.30 H1424 V360.30" fill="none" stroke="#111" stroke-width="0.7"/>
<text x="1432" y="360.10" font-family="Liberation Sans, sans-serif" font-size="3.4" fill="#444" text-anchor="middle">SMK</text>
<path d="M1438.5 355.60 H1461 L1463.5 357.60 H1438.5 Z" fill="#111"/>
<line x1="1451" y1="362.60" x2="1491" y2="362.60" stroke="#111" stroke-width="1.6" stroke-dasharray="2.2,1.4"/>
<line x1="1438.5" y1="362.60" x2="1451" y2="362.60" stroke="#111" stroke-width="0.6"/>
<path d="M1350 394.10 L1358 394.10 L1368 390.80 L1387 390.80" fill="none" stroke="#333" stroke-width="0.6"/><rect x="1381" y="390.00" width="4" height="1.6" fill="#444"/><path d="M1350 394.10 L1358 394.10 L1368 397.40 L1387 397.40" fill="none" stroke="#333" stroke-width="0.6"/><rect x="1381" y="396.60" width="4" height="1.6" fill="#444"/>
<rect x="1387.30" y="387.30" width="22.3" height="13.60" fill="#fff" stroke="#111" stroke-width="1.0"/><line x1="1393.80" y1="387.30" x2="1393.80" y2="400.90" stroke="#111" stroke-width="0.6"/><circle cx="1390.55" cy="390.70" r="2.20" fill="#141414"/><path d="M1389.45 389.60 L1391.65 391.80" stroke="#ddd" stroke-width="0.55"/><text x="1401.70" y="392.06" font-family="Liberation Sans, sans-serif" font-size="3.6" fill="#555" text-anchor="middle">GND</text><line x1="1387.30" y1="394.10" x2="1409.60" y2="394.10" stroke="#111" stroke-width="0.6"/><circle cx="1390.55" cy="397.50" r="2.20" fill="#141414"/><path d="M1389.45 396.40 L1391.65 398.60" stroke="#ddd" stroke-width="0.55"/><text x="1401.70" y="398.86" font-family="Liberation Sans, sans-serif" font-size="3.6" fill="#555" text-anchor="middle">SIG</text>
<rect x="1409.6" y="387.30" width="4.5" height="13.6" fill="#bdbdbd" stroke="#111" stroke-width="0.6"/>
<rect x="1414.1" y="383.40" width="12.6" height="22" fill="#fff" stroke="#111" stroke-width="1"/>
<text transform="translate(1423.2,394.10) rotate(-90)" font-family="Liberation Sans, sans-serif" font-size="7" fill="#3a4a66" text-anchor="middle">HLS</text>
<rect x="1427" y="390.10" width="5" height="8" fill="#333"/>
<rect x="1432" y="392.30" width="20.7" height="3.6" fill="#777" stroke="#111" stroke-width="0.7"/>
<rect x="1449" y="392.10" width="4" height="4" fill="#111"/>
<path d="M1350 421.30 L1358 421.30 L1368 418.00 L1387 418.00" fill="none" stroke="#333" stroke-width="0.6"/><rect x="1381" y="417.20" width="4" height="1.6" fill="#444"/><path d="M1350 421.30 L1358 421.30 L1368 424.60 L1387 424.60" fill="none" stroke="#333" stroke-width="0.6"/><rect x="1381" y="423.80" width="4" height="1.6" fill="#444"/>
<rect x="1387.30" y="414.30" width="22.3" height="14.00" fill="#fff" stroke="#111" stroke-width="1.0"/><line x1="1393.80" y1="414.30" x2="1393.80" y2="428.30" stroke="#111" stroke-width="0.6"/><circle cx="1390.55" cy="417.80" r="2.20" fill="#141414"/><path d="M1389.45 416.70 L1391.65 418.90" stroke="#ddd" stroke-width="0.55"/><text x="1401.70" y="419.20" font-family="Liberation Sans, sans-serif" font-size="3.6" fill="#555" text-anchor="middle">GND</text><line x1="1387.30" y1="421.30" x2="1409.60" y2="421.30" stroke="#111" stroke-width="0.6"/><circle cx="1390.55" cy="424.80" r="2.20" fill="#141414"/><path d="M1389.45 423.70 L1391.65 425.90" stroke="#ddd" stroke-width="0.55"/><text x="1401.70" y="426.20" font-family="Liberation Sans, sans-serif" font-size="3.6" fill="#555" text-anchor="middle">SIG</text>
<rect x="1409.6" y="414.30" width="4.5" height="14" fill="#bdbdbd" stroke="#111" stroke-width="0.6"/>
<rect x="1414.1" y="414.30" width="5.8" height="14" rx="1.5" fill="#fff" stroke="#111" stroke-width="0.9"/>
<rect x="1420" y="419.70" width="31" height="3.2" fill="#fff" stroke="#111" stroke-width="0.7"/>
<rect x="1451" y="419.30" width="4.6" height="4" fill="#111"/>
<path d="M1350 448.20 L1358 448.20 L1368 441.40 L1387 441.40" fill="none" stroke="#333" stroke-width="0.6"/><rect x="1381" y="440.60" width="4" height="1.6" fill="#444"/><path d="M1350 448.20 L1358 448.20 L1368 448.20 L1387 448.20" fill="none" stroke="#333" stroke-width="0.6"/><rect x="1381" y="447.40" width="4" height="1.6" fill="#444"/><path d="M1350 448.20 L1358 448.20 L1368 455.00 L1387 455.00" fill="none" stroke="#333" stroke-width="0.6"/><rect x="1381" y="454.20" width="4" height="1.6" fill="#444"/>
<rect x="1387.30" y="441.20" width="22.3" height="21.00" fill="#fff" stroke="#777" stroke-width="0.7"/><line x1="1393.80" y1="441.20" x2="1393.80" y2="462.20" stroke="#777" stroke-width="0.6"/><circle cx="1390.55" cy="444.70" r="2" fill="#fff" stroke="#777" stroke-width="0.5"/><line x1="1389.30" y1="445.70" x2="1391.80" y2="443.70" stroke="#777" stroke-width="0.4"/><text x="1401.70" y="446.10" font-family="Liberation Sans, sans-serif" font-size="3.6" fill="#555" text-anchor="middle">24 VAC</text><line x1="1387.30" y1="448.20" x2="1409.60" y2="448.20" stroke="#777" stroke-width="0.6"/><circle cx="1390.55" cy="451.70" r="2" fill="#fff" stroke="#777" stroke-width="0.5"/><line x1="1389.30" y1="452.70" x2="1391.80" y2="450.70" stroke="#777" stroke-width="0.4"/><text x="1401.70" y="453.10" font-family="Liberation Sans, sans-serif" font-size="3.6" fill="#555" text-anchor="middle">0-5 SUP</text><line x1="1387.30" y1="455.20" x2="1409.60" y2="455.20" stroke="#777" stroke-width="0.6"/><circle cx="1390.55" cy="458.70" r="2" fill="#fff" stroke="#777" stroke-width="0.5"/><line x1="1389.30" y1="459.70" x2="1391.80" y2="457.70" stroke="#777" stroke-width="0.4"/><text x="1401.70" y="460.10" font-family="Liberation Sans, sans-serif" font-size="3.6" fill="#555" text-anchor="middle">COM</text>
<rect x="1409.6" y="439.20" width="7" height="22" fill="#bdbdbd" stroke="#777" stroke-width="0.5"/>
<rect x="1417" y="438.60" width="17.6" height="24" fill="#fff" stroke="#111" stroke-width="1.1"/>
<rect x="1419.5" y="440.70" width="12" height="4" fill="#fff" stroke="#777" stroke-width="0.5"/>
<rect x="1434.6" y="444.80" width="82.4" height="3.6" fill="#fff" stroke="#111" stroke-width="1"/>
<line x1="1436" y1="446.60" x2="1516" y2="446.60" stroke="#111" stroke-width="1.4" stroke-dasharray="3.5,2.3"/>
<rect x="1434.6" y="454.90" width="82.4" height="3.6" fill="#fff" stroke="#111" stroke-width="1"/>
<line x1="1436" y1="456.70" x2="1516" y2="456.70" stroke="#111" stroke-width="1.4" stroke-dasharray="3.5,2.3"/>
<path d="M1350 489.20 L1358 489.20 L1368 485.70 L1387 485.70" fill="none" stroke="#333" stroke-width="0.6"/><rect x="1381" y="484.90" width="4" height="1.6" fill="#444"/><path d="M1350 489.20 L1358 489.20 L1368 492.70 L1387 492.70" fill="none" stroke="#333" stroke-width="0.6"/><rect x="1381" y="491.90" width="4" height="1.6" fill="#444"/>
<rect x="1387.30" y="482.00" width="22.3" height="14.40" fill="#fff" stroke="#111" stroke-width="1.0"/><line x1="1393.80" y1="482.00" x2="1393.80" y2="496.40" stroke="#111" stroke-width="0.6"/><circle cx="1390.55" cy="485.60" r="2.20" fill="#141414"/><path d="M1389.45 484.50 L1391.65 486.70" stroke="#ddd" stroke-width="0.55"/><text x="1401.70" y="487.04" font-family="Liberation Sans, sans-serif" font-size="3.6" fill="#555" text-anchor="middle">GND</text><line x1="1387.30" y1="489.20" x2="1409.60" y2="489.20" stroke="#111" stroke-width="0.6"/><circle cx="1390.55" cy="492.80" r="2.20" fill="#141414"/><path d="M1389.45 491.70 L1391.65 493.90" stroke="#ddd" stroke-width="0.55"/><text x="1401.70" y="494.24" font-family="Liberation Sans, sans-serif" font-size="3.6" fill="#555" text-anchor="middle">SIG</text>
<rect x="1409.6" y="482.00" width="4.6" height="14.4" fill="#bdbdbd" stroke="#111" stroke-width="0.6"/>
<rect x="1414.2" y="482.00" width="24.3" height="14.4" fill="#fff" stroke="#111" stroke-width="1"/>
<path d="M1416 485.70 H1424 V487.70 M1416 492.70 H1424 V490.70" fill="none" stroke="#111" stroke-width="0.7"/>
<text x="1431.5" y="490.50" font-family="Liberation Sans, sans-serif" font-size="3.4" fill="#444" text-anchor="middle">SPDT</text>
<rect x="1438.5" y="480.70" width="6.8" height="19" fill="#fff" stroke="#111" stroke-width="1"/>
<line x1="1441.5" y1="479.20" x2="1441.5" y2="500.20" stroke="#111" stroke-width="0.6"/>
<path d="M1505.3 584.6 V514 Q1505.3 508.3 1511 508.3 H1555 Q1561 508.3 1561 514 V584.6 Z" fill="#fff" stroke="#444" stroke-width="0.8"/>
<line x1="1505.3" y1="520.5" x2="1561" y2="520.5" stroke="#444" stroke-width="0.7"/>
<line x1="1533.6" y1="520.5" x2="1533.6" y2="616" stroke="#555" stroke-width="0.7"/>
<line x1="1550.5" y1="584.6" x2="1550.5" y2="616" stroke="#555" stroke-width="0.7"/>
<text x="1533.5" y="516" font-family="Liberation Sans, sans-serif" font-size="3.4" fill="#555" text-anchor="middle">VFD</text>
<text x="1546.5" y="533" font-family="Liberation Sans, sans-serif" font-size="3.2" font-weight="bold" fill="#333" text-anchor="middle">ENABLE</text>
<text x="1546.5" y="554" font-family="Liberation Sans, sans-serif" font-size="3.2" font-weight="bold" fill="#333" text-anchor="middle">SPEED</text>
<text x="1546.5" y="559" font-family="Liberation Sans, sans-serif" font-size="3.2" font-weight="bold" fill="#333" text-anchor="middle">SIGNAL</text>
<rect x="1513" y="523.20" width="12.5" height="15.5" fill="#fff" stroke="#555" stroke-width="0.7"/>
<line x1="1519.5" y1="523.20" x2="1519.5" y2="538.70" stroke="#777" stroke-width="0.5"/><line x1="1513" y1="530.95" x2="1525.5" y2="530.95" stroke="#777" stroke-width="0.5"/>
<circle cx="1516.2" cy="527.10" r="2" fill="#fff" stroke="#555" stroke-width="0.5"/><circle cx="1516.2" cy="534.80" r="2" fill="#fff" stroke="#555" stroke-width="0.5"/>
<rect x="1513" y="549.50" width="12.5" height="15.5" fill="#fff" stroke="#555" stroke-width="0.7"/>
<line x1="1519.5" y1="549.50" x2="1519.5" y2="565.00" stroke="#777" stroke-width="0.5"/><line x1="1513" y1="557.25" x2="1525.5" y2="557.25" stroke="#777" stroke-width="0.5"/>
<circle cx="1516.2" cy="553.40" r="2" fill="#fff" stroke="#555" stroke-width="0.5"/><circle cx="1516.2" cy="561.10" r="2" fill="#fff" stroke="#555" stroke-width="0.5"/>
<path d="M1505.3 659.3 V628 Q1505.3 624.4 1509 624.4 H1557 Q1561 624.4 1561 628 V659.3 Z" fill="#fff" stroke="#444" stroke-width="0.8"/>
<line x1="1505.3" y1="629.8" x2="1561" y2="629.8" stroke="#444" stroke-width="0.7"/>
<line x1="1533.4" y1="629.8" x2="1533.4" y2="686" stroke="#555" stroke-width="0.7"/>
<line x1="1549.5" y1="659.3" x2="1549.5" y2="686" stroke="#555" stroke-width="0.7"/>
<text x="1533.5" y="629" font-family="Liberation Sans, sans-serif" font-size="3.4" fill="#555" text-anchor="middle">EC</text>
<text x="1546.5" y="643" font-family="Liberation Sans, sans-serif" font-size="3.2" font-weight="bold" fill="#333" text-anchor="middle">ENABLE</text>
<rect x="1513" y="632" width="12.6" height="16.3" fill="#fff" stroke="#555" stroke-width="0.7"/>
<line x1="1519.5" y1="632" x2="1519.5" y2="648.3" stroke="#777" stroke-width="0.5"/><line x1="1513" y1="640.2" x2="1525.6" y2="640.2" stroke="#777" stroke-width="0.5"/>
<circle cx="1516.2" cy="636" r="2" fill="#fff" stroke="#555" stroke-width="0.5"/><circle cx="1516.2" cy="644.2" r="2" fill="#fff" stroke="#555" stroke-width="0.5"/>
<path d="M1350 531.20 L1358 531.20 L1368 527.80 L1387 527.80" fill="none" stroke="#333" stroke-width="0.6"/><rect x="1381" y="527.00" width="4" height="1.6" fill="#444"/><path d="M1350 531.20 L1358 531.20 L1368 534.60 L1387 534.60" fill="none" stroke="#333" stroke-width="0.6"/><rect x="1381" y="533.80" width="4" height="1.6" fill="#444"/>
<rect x="1387.30" y="524.50" width="22.3" height="13.30" fill="#fff" stroke="#777" stroke-width="0.7"/><line x1="1393.80" y1="524.50" x2="1393.80" y2="537.80" stroke="#777" stroke-width="0.6"/><circle cx="1390.55" cy="527.83" r="2" fill="#fff" stroke="#777" stroke-width="0.5"/><line x1="1389.30" y1="528.83" x2="1391.80" y2="526.83" stroke="#777" stroke-width="0.4"/><text x="1401.70" y="529.15" font-family="Liberation Sans, sans-serif" font-size="3.6" fill="#555" text-anchor="middle">GND</text><line x1="1387.30" y1="531.15" x2="1409.60" y2="531.15" stroke="#777" stroke-width="0.6"/><circle cx="1390.55" cy="534.48" r="2" fill="#fff" stroke="#777" stroke-width="0.5"/><line x1="1389.30" y1="535.48" x2="1391.80" y2="533.48" stroke="#777" stroke-width="0.4"/><text x="1401.70" y="535.80" font-family="Liberation Sans, sans-serif" font-size="3.6" fill="#555" text-anchor="middle">1-5</text>
<rect x="1409.6" y="524.50" width="7" height="13.3" fill="#b5b5b5" stroke="#777" stroke-width="0.5"/>
<rect x="1435.2" y="519.80" width="32.3" height="20.9" rx="3" fill="#dcdcdf" stroke="#c8c8cc" stroke-width="0.5"/>
<text x="1446.5" y="526.40" font-family="Liberation Sans, sans-serif" font-size="6.2" fill="#8a8a96" text-anchor="middle">RIBU1C</text>
<circle cx="1462.3" cy="524.40" r="1.2" fill="#c0182a"/>
<rect x="1440" y="540.70" width="6" height="4.5" fill="#111"/>
<text x="1425.3" y="526.80" font-family="Liberation Sans, sans-serif" font-size="3.2" fill="#444" text-anchor="middle">RH/YEL</text>
<text x="1403" y="548.50" font-family="Liberation Sans, sans-serif" font-size="3.2" fill="#444" text-anchor="middle">RH/BLUE</text>
<path d="M1416.6 534.50 Q1419 534.50 1419 537.50 V545.30 Q1419 546.80 1421 546.80 H1443" fill="none" stroke="#7fa6d6" stroke-width="0.8"/>
<path d="M1421.5 529.80 V544.80" fill="none" stroke="#f7e7b4" stroke-width="0.8"/>
<path d="M1443 546.80 Q1444 548.10 1447 548.10 H1481 Q1483 548.10 1483 545.80 V537.30 Q1483 535.30 1485 535.30 H1513" fill="none" stroke="#f0a158" stroke-width="0.9"/>
<path d="M1477 547.80 V531.80 Q1477 529.30 1480 529.30 H1513" fill="none" stroke="#f8e8c0" stroke-width="0.8"/>
<path d="M1350 640.60 L1358 640.60 L1368 637.20 L1387 637.20" fill="none" stroke="#333" stroke-width="0.6"/><rect x="1381" y="636.40" width="4" height="1.6" fill="#444"/><path d="M1350 640.60 L1358 640.60 L1368 644.00 L1387 644.00" fill="none" stroke="#333" stroke-width="0.6"/><rect x="1381" y="643.20" width="4" height="1.6" fill="#444"/>
<rect x="1387.30" y="633.40" width="22.3" height="13.30" fill="#fff" stroke="#777" stroke-width="0.7"/><line x1="1393.80" y1="633.40" x2="1393.80" y2="646.70" stroke="#777" stroke-width="0.6"/><circle cx="1390.55" cy="636.73" r="2" fill="#fff" stroke="#777" stroke-width="0.5"/><line x1="1389.30" y1="637.73" x2="1391.80" y2="635.73" stroke="#777" stroke-width="0.4"/><text x="1401.70" y="638.05" font-family="Liberation Sans, sans-serif" font-size="3.6" fill="#555" text-anchor="middle">GND</text><line x1="1387.30" y1="640.05" x2="1409.60" y2="640.05" stroke="#777" stroke-width="0.6"/><circle cx="1390.55" cy="643.38" r="2" fill="#fff" stroke="#777" stroke-width="0.5"/><line x1="1389.30" y1="644.38" x2="1391.80" y2="642.38" stroke="#777" stroke-width="0.4"/><text x="1401.70" y="644.70" font-family="Liberation Sans, sans-serif" font-size="3.6" fill="#555" text-anchor="middle">1-5</text>
<rect x="1409.6" y="633.40" width="7" height="13.3" fill="#b5b5b5" stroke="#777" stroke-width="0.5"/>
<rect x="1435.2" y="628.70" width="32.3" height="20.9" rx="3" fill="#dcdcdf" stroke="#c8c8cc" stroke-width="0.5"/>
<text x="1446.5" y="635.30" font-family="Liberation Sans, sans-serif" font-size="6.2" fill="#8a8a96" text-anchor="middle">RIBU1C</text>
<circle cx="1462.3" cy="633.30" r="1.2" fill="#c0182a"/>
<rect x="1440" y="649.60" width="6" height="4.5" fill="#111"/>
<text x="1425.3" y="635.70" font-family="Liberation Sans, sans-serif" font-size="3.2" fill="#444" text-anchor="middle">RH/YEL</text>
<text x="1403" y="657.40" font-family="Liberation Sans, sans-serif" font-size="3.2" fill="#444" text-anchor="middle">RH/BLUE</text>
<path d="M1416.6 643.40 Q1419 643.40 1419 646.40 V654.20 Q1419 655.70 1421 655.70 H1443" fill="none" stroke="#7fa6d6" stroke-width="0.8"/>
<path d="M1421.5 638.70 V653.70" fill="none" stroke="#f7e7b4" stroke-width="0.8"/>
<path d="M1443 655.70 Q1444 657.00 1447 657.00 H1481 Q1483 657.00 1483 654.70 V646.20 Q1483 644.20 1485 644.20 H1513" fill="none" stroke="#f0a158" stroke-width="0.9"/>
<path d="M1477 656.70 V640.70 Q1477 638.20 1480 638.20 H1513" fill="none" stroke="#f8e8c0" stroke-width="0.8"/>
<path d="M1350 557.00 L1358 557.00 L1368 553.60 L1387 553.60" fill="none" stroke="#333" stroke-width="0.6"/><rect x="1381" y="552.80" width="4" height="1.6" fill="#444"/><path d="M1350 557.00 L1358 557.00 L1368 560.40 L1387 560.40" fill="none" stroke="#333" stroke-width="0.6"/><rect x="1381" y="559.60" width="4" height="1.6" fill="#444"/>
<rect x="1387.30" y="550.40" width="22.3" height="13.30" fill="#fff" stroke="#777" stroke-width="0.7"/><line x1="1393.80" y1="550.40" x2="1393.80" y2="563.70" stroke="#777" stroke-width="0.6"/><circle cx="1390.55" cy="553.73" r="2" fill="#fff" stroke="#777" stroke-width="0.5"/><line x1="1389.30" y1="554.73" x2="1391.80" y2="552.73" stroke="#777" stroke-width="0.4"/><text x="1401.70" y="555.05" font-family="Liberation Sans, sans-serif" font-size="3.6" fill="#555" text-anchor="middle">GND</text><line x1="1387.30" y1="557.05" x2="1409.60" y2="557.05" stroke="#777" stroke-width="0.6"/><circle cx="1390.55" cy="560.38" r="2" fill="#fff" stroke="#777" stroke-width="0.5"/><line x1="1389.30" y1="561.38" x2="1391.80" y2="559.38" stroke="#777" stroke-width="0.4"/><text x="1401.70" y="561.70" font-family="Liberation Sans, sans-serif" font-size="3.6" fill="#555" text-anchor="middle">1-5</text>
<rect x="1409.6" y="550.40" width="103.80" height="13.3" fill="#c2c2c5" stroke="#888" stroke-width="0.6"/>
<path d="M1350 600.60 L1358 600.60 L1368 597.20 L1387 597.20" fill="none" stroke="#333" stroke-width="0.6"/><rect x="1381" y="596.40" width="4" height="1.6" fill="#444"/><path d="M1350 600.60 L1358 600.60 L1368 604.00 L1387 604.00" fill="none" stroke="#333" stroke-width="0.6"/><rect x="1381" y="603.20" width="4" height="1.6" fill="#444"/>
<rect x="1387.30" y="594.00" width="22.3" height="13.30" fill="#fff" stroke="#777" stroke-width="0.7"/><line x1="1393.80" y1="594.00" x2="1393.80" y2="607.30" stroke="#777" stroke-width="0.6"/><circle cx="1390.55" cy="597.33" r="2" fill="#fff" stroke="#777" stroke-width="0.5"/><line x1="1389.30" y1="598.33" x2="1391.80" y2="596.33" stroke="#777" stroke-width="0.4"/><text x="1401.70" y="598.65" font-family="Liberation Sans, sans-serif" font-size="3.6" fill="#555" text-anchor="middle">GND</text><line x1="1387.30" y1="600.65" x2="1409.60" y2="600.65" stroke="#777" stroke-width="0.6"/><circle cx="1390.55" cy="603.98" r="2" fill="#fff" stroke="#777" stroke-width="0.5"/><line x1="1389.30" y1="604.98" x2="1391.80" y2="602.98" stroke="#777" stroke-width="0.4"/><text x="1401.70" y="605.30" font-family="Liberation Sans, sans-serif" font-size="3.6" fill="#555" text-anchor="middle">SIG</text>
<rect x="1409.6" y="594.00" width="81.50" height="13.3" fill="#c2c2c5" stroke="#888" stroke-width="0.6"/>
<path d="M1350 671.00 L1358 671.00 L1368 667.60 L1387 667.60" fill="none" stroke="#333" stroke-width="0.6"/><rect x="1381" y="666.80" width="4" height="1.6" fill="#444"/><path d="M1350 671.00 L1358 671.00 L1368 674.40 L1387 674.40" fill="none" stroke="#333" stroke-width="0.6"/><rect x="1381" y="673.60" width="4" height="1.6" fill="#444"/>
<rect x="1387.30" y="664.50" width="22.3" height="13.30" fill="#fff" stroke="#777" stroke-width="0.7"/><line x1="1393.80" y1="664.50" x2="1393.80" y2="677.80" stroke="#777" stroke-width="0.6"/><circle cx="1390.55" cy="667.83" r="2" fill="#fff" stroke="#777" stroke-width="0.5"/><line x1="1389.30" y1="668.83" x2="1391.80" y2="666.83" stroke="#777" stroke-width="0.4"/><text x="1401.70" y="669.15" font-family="Liberation Sans, sans-serif" font-size="3.6" fill="#555" text-anchor="middle">GND</text><line x1="1387.30" y1="671.15" x2="1409.60" y2="671.15" stroke="#777" stroke-width="0.6"/><circle cx="1390.55" cy="674.48" r="2" fill="#fff" stroke="#777" stroke-width="0.5"/><line x1="1389.30" y1="675.48" x2="1391.80" y2="673.48" stroke="#777" stroke-width="0.4"/><text x="1401.70" y="675.80" font-family="Liberation Sans, sans-serif" font-size="3.6" fill="#555" text-anchor="middle">SIG</text>
<rect x="1409.6" y="664.50" width="81.90" height="13.3" fill="#c2c2c5" stroke="#888" stroke-width="0.6"/>
<text transform="translate(1461,557) rotate(90)" font-family="Liberation Sans, sans-serif" font-size="3" fill="#555" text-anchor="middle">18/2</text>
<rect x="1491.3" y="590.60" width="8.7" height="20.5" fill="#fff" stroke="#777" stroke-width="0.6"/>
<circle cx="1495.6" cy="597.20" r="2.6" fill="#fff" stroke="#555" stroke-width="0.6"/><circle cx="1495.6" cy="604.00" r="2.6" fill="#fff" stroke="#555" stroke-width="0.6"/>
<rect x="1500" y="590.60" width="22" height="20.5" fill="#fff" stroke="#aaa" stroke-width="0.5"/>
<rect x="1510" y="593.00" width="8" height="15" fill="#fff" stroke="#666" stroke-width="0.6"/>
<line x1="1518" y1="588.00" x2="1518" y2="613.00" stroke="#555" stroke-width="0.9"/>
<line x1="1522" y1="592.00" x2="1522" y2="610.00" stroke="#555" stroke-width="0.6"/>
<rect x="1491.3" y="661.10" width="8.7" height="20.5" fill="#fff" stroke="#777" stroke-width="0.6"/>
<circle cx="1495.6" cy="667.70" r="2.6" fill="#fff" stroke="#555" stroke-width="0.6"/><circle cx="1495.6" cy="674.50" r="2.6" fill="#fff" stroke="#555" stroke-width="0.6"/>
<rect x="1500" y="661.10" width="22" height="20.5" fill="#fff" stroke="#aaa" stroke-width="0.5"/>
<rect x="1510" y="663.50" width="8" height="15" fill="#fff" stroke="#666" stroke-width="0.6"/>
<line x1="1518" y1="658.50" x2="1518" y2="683.50" stroke="#555" stroke-width="0.9"/>
<line x1="1522" y1="662.50" x2="1522" y2="680.50" stroke="#555" stroke-width="0.6"/>
<path d="M1350 708.70 L1358 708.70 L1368 707.20 L1387 707.20" fill="none" stroke="#333" stroke-width="0.6"/><rect x="1381" y="706.40" width="4" height="1.6" fill="#444"/><path d="M1350 708.70 L1358 708.70 L1368 714.00 L1387 714.00" fill="none" stroke="#333" stroke-width="0.6"/><rect x="1381" y="713.20" width="4" height="1.6" fill="#444"/><path d="M1350 708.70 L1358 708.70 L1368 720.80 L1387 720.80" fill="none" stroke="#333" stroke-width="0.6"/><rect x="1381" y="720.00" width="4" height="1.6" fill="#444"/>
<rect x="1386.50" y="703.80" width="23" height="27.20" fill="#fff" stroke="#777" stroke-width="0.7"/><line x1="1393.00" y1="703.80" x2="1393.00" y2="731.00" stroke="#777" stroke-width="0.6"/><circle cx="1389.75" cy="707.20" r="2" fill="#fff" stroke="#777" stroke-width="0.5"/><line x1="1388.50" y1="708.20" x2="1391.00" y2="706.20" stroke="#777" stroke-width="0.4"/><text x="1400.90" y="708.56" font-family="Liberation Sans, sans-serif" font-size="3.6" fill="#555" text-anchor="middle">GND</text><line x1="1386.50" y1="710.60" x2="1409.50" y2="710.60" stroke="#777" stroke-width="0.6"/><circle cx="1389.75" cy="714.00" r="2" fill="#fff" stroke="#777" stroke-width="0.5"/><line x1="1388.50" y1="715.00" x2="1391.00" y2="713.00" stroke="#777" stroke-width="0.4"/><text x="1400.90" y="715.36" font-family="Liberation Sans, sans-serif" font-size="3.6" fill="#555" text-anchor="middle">24VAC</text><line x1="1386.50" y1="717.40" x2="1409.50" y2="717.40" stroke="#777" stroke-width="0.6"/><circle cx="1389.75" cy="720.80" r="2" fill="#fff" stroke="#777" stroke-width="0.5"/><line x1="1388.50" y1="721.80" x2="1391.00" y2="719.80" stroke="#777" stroke-width="0.4"/><text x="1400.90" y="722.16" font-family="Liberation Sans, sans-serif" font-size="3.6" fill="#555" text-anchor="middle">2-10</text><line x1="1386.50" y1="724.20" x2="1409.50" y2="724.20" stroke="#777" stroke-width="0.6"/><circle cx="1389.75" cy="727.60" r="2" fill="#fff" stroke="#777" stroke-width="0.5"/><line x1="1388.50" y1="728.60" x2="1391.00" y2="726.60" stroke="#777" stroke-width="0.4"/><text x="1400.90" y="728.96" font-family="Liberation Sans, sans-serif" font-size="3.6" fill="#555" text-anchor="middle">FBK</text>
<rect x="1409.5" y="703.80" width="7.1" height="27.2" fill="#c2c2c5" stroke="#777" stroke-width="0.5"/>
<text transform="translate(1414.5,717.40) rotate(-90)" font-family="Liberation Sans, sans-serif" font-size="3.4" fill="#333" text-anchor="middle">ACTUATOR</text>
<rect x="1466" y="697.50" width="35.7" height="38.6" rx="2.5" fill="#fff" stroke="#777" stroke-width="0.7"/>
<rect x="1427.2" y="697.50" width="39.4" height="38.6" rx="3" fill="#ee7a1c"/>
<path d="M1416.6 706.50 H1426 L1430 704.50 H1437 V727.50 H1430 L1426 725.50 H1416.6 Z" fill="#111"/>
<rect x="1431" y="708.50" width="5" height="16" fill="none" stroke="#555" stroke-width="0.5"/>
<path d="M1442.3 699.00 H1447.8 L1447 711.00 H1442.8 Z" fill="#111"/>
<circle cx="1460" cy="729.00" r="1.6" fill="#111"/><circle cx="1460" cy="729.00" r="0.6" fill="#ee7a1c"/>
<path d="M1486 708.50 Q1477 708.50 1476 716.50 Q1477 724.50 1486 724.50" fill="#eee" stroke="#555" stroke-width="0.7"/>
<circle cx="1484.5" cy="716.50" r="3.2" fill="#fff" stroke="#555" stroke-width="0.7"/>
<rect x="1486" y="708.50" width="6" height="3.2" fill="#ddd" stroke="#555" stroke-width="0.6"/><rect x="1486" y="721.30" width="6" height="3.2" fill="#ddd" stroke="#555" stroke-width="0.6"/>
<circle cx="1494.8" cy="710.10" r="1.8" fill="#eee" stroke="#555" stroke-width="0.6"/><circle cx="1494.8" cy="722.90" r="1.8" fill="#eee" stroke="#555" stroke-width="0.6"/>
<line x1="1491" y1="707.50" x2="1491" y2="725.50" stroke="#555" stroke-width="0.6"/>
<path d="M1350 750.30 L1358 750.30 L1368 748.10 L1387 748.10" fill="none" stroke="#333" stroke-width="0.6"/><rect x="1381" y="747.30" width="4" height="1.6" fill="#444"/><path d="M1350 750.30 L1358 750.30 L1368 754.90 L1387 754.90" fill="none" stroke="#333" stroke-width="0.6"/><rect x="1381" y="754.10" width="4" height="1.6" fill="#444"/><path d="M1350 750.30 L1358 750.30 L1368 761.70 L1387 761.70" fill="none" stroke="#333" stroke-width="0.6"/><rect x="1381" y="760.90" width="4" height="1.6" fill="#444"/>
<rect x="1386.50" y="744.70" width="23" height="27.20" fill="#fff" stroke="#777" stroke-width="0.7"/><line x1="1393.00" y1="744.70" x2="1393.00" y2="771.90" stroke="#777" stroke-width="0.6"/><circle cx="1389.75" cy="748.10" r="2" fill="#fff" stroke="#777" stroke-width="0.5"/><line x1="1388.50" y1="749.10" x2="1391.00" y2="747.10" stroke="#777" stroke-width="0.4"/><text x="1400.90" y="749.46" font-family="Liberation Sans, sans-serif" font-size="3.6" fill="#555" text-anchor="middle">GND</text><line x1="1386.50" y1="751.50" x2="1409.50" y2="751.50" stroke="#777" stroke-width="0.6"/><circle cx="1389.75" cy="754.90" r="2" fill="#fff" stroke="#777" stroke-width="0.5"/><line x1="1388.50" y1="755.90" x2="1391.00" y2="753.90" stroke="#777" stroke-width="0.4"/><text x="1400.90" y="756.26" font-family="Liberation Sans, sans-serif" font-size="3.6" fill="#555" text-anchor="middle">24VAC</text><line x1="1386.50" y1="758.30" x2="1409.50" y2="758.30" stroke="#777" stroke-width="0.6"/><circle cx="1389.75" cy="761.70" r="2" fill="#fff" stroke="#777" stroke-width="0.5"/><line x1="1388.50" y1="762.70" x2="1391.00" y2="760.70" stroke="#777" stroke-width="0.4"/><text x="1400.90" y="763.06" font-family="Liberation Sans, sans-serif" font-size="3.6" fill="#555" text-anchor="middle">2-10</text><line x1="1386.50" y1="765.10" x2="1409.50" y2="765.10" stroke="#777" stroke-width="0.6"/><circle cx="1389.75" cy="768.50" r="2" fill="#fff" stroke="#777" stroke-width="0.5"/><line x1="1388.50" y1="769.50" x2="1391.00" y2="767.50" stroke="#777" stroke-width="0.4"/><text x="1400.90" y="769.86" font-family="Liberation Sans, sans-serif" font-size="3.6" fill="#555" text-anchor="middle">FBK</text>
<rect x="1409.5" y="744.70" width="7.1" height="27.2" fill="#c2c2c5" stroke="#777" stroke-width="0.5"/>
<text transform="translate(1414.5,758.30) rotate(-90)" font-family="Liberation Sans, sans-serif" font-size="3.4" fill="#333" text-anchor="middle">ACTUATOR</text>
<rect x="1466" y="738.40" width="35.7" height="38.6" rx="2.5" fill="#fff" stroke="#777" stroke-width="0.7"/>
<rect x="1427.2" y="738.40" width="39.4" height="38.6" rx="3" fill="#ee7a1c"/>
<path d="M1416.6 747.40 H1426 L1430 745.40 H1437 V768.40 H1430 L1426 766.40 H1416.6 Z" fill="#111"/>
<rect x="1431" y="749.40" width="5" height="16" fill="none" stroke="#555" stroke-width="0.5"/>
<path d="M1442.3 739.90 H1447.8 L1447 751.90 H1442.8 Z" fill="#111"/>
<circle cx="1460" cy="769.90" r="1.6" fill="#111"/><circle cx="1460" cy="769.90" r="0.6" fill="#ee7a1c"/>
<path d="M1486 749.40 Q1477 749.40 1476 757.40 Q1477 765.40 1486 765.40" fill="#eee" stroke="#555" stroke-width="0.7"/>
<circle cx="1484.5" cy="757.40" r="3.2" fill="#fff" stroke="#555" stroke-width="0.7"/>
<rect x="1486" y="749.40" width="6" height="3.2" fill="#ddd" stroke="#555" stroke-width="0.6"/><rect x="1486" y="762.20" width="6" height="3.2" fill="#ddd" stroke="#555" stroke-width="0.6"/>
<circle cx="1494.8" cy="751.00" r="1.8" fill="#eee" stroke="#555" stroke-width="0.6"/><circle cx="1494.8" cy="763.80" r="1.8" fill="#eee" stroke="#555" stroke-width="0.6"/>
<line x1="1491" y1="748.40" x2="1491" y2="766.40" stroke="#555" stroke-width="0.6"/>
<path d="M1350 791.30 L1358 791.30 L1368 791.10 L1387 791.10" fill="none" stroke="#333" stroke-width="0.6"/><rect x="1381" y="790.30" width="4" height="1.6" fill="#444"/><path d="M1350 791.30 L1358 791.30 L1368 797.90 L1387 797.90" fill="none" stroke="#333" stroke-width="0.6"/><rect x="1381" y="797.10" width="4" height="1.6" fill="#444"/><path d="M1350 791.30 L1358 791.30 L1368 804.70 L1387 804.70" fill="none" stroke="#333" stroke-width="0.6"/><rect x="1381" y="803.90" width="4" height="1.6" fill="#444"/>
<rect x="1386.50" y="787.70" width="23" height="27.20" fill="#fff" stroke="#777" stroke-width="0.7"/><line x1="1393.00" y1="787.70" x2="1393.00" y2="814.90" stroke="#777" stroke-width="0.6"/><circle cx="1389.75" cy="791.10" r="2" fill="#fff" stroke="#777" stroke-width="0.5"/><line x1="1388.50" y1="792.10" x2="1391.00" y2="790.10" stroke="#777" stroke-width="0.4"/><text x="1400.90" y="792.46" font-family="Liberation Sans, sans-serif" font-size="3.6" fill="#555" text-anchor="middle">GND</text><line x1="1386.50" y1="794.50" x2="1409.50" y2="794.50" stroke="#777" stroke-width="0.6"/><circle cx="1389.75" cy="797.90" r="2" fill="#fff" stroke="#777" stroke-width="0.5"/><line x1="1388.50" y1="798.90" x2="1391.00" y2="796.90" stroke="#777" stroke-width="0.4"/><text x="1400.90" y="799.26" font-family="Liberation Sans, sans-serif" font-size="3.6" fill="#555" text-anchor="middle">24VAC</text><line x1="1386.50" y1="801.30" x2="1409.50" y2="801.30" stroke="#777" stroke-width="0.6"/><circle cx="1389.75" cy="804.70" r="2" fill="#fff" stroke="#777" stroke-width="0.5"/><line x1="1388.50" y1="805.70" x2="1391.00" y2="803.70" stroke="#777" stroke-width="0.4"/><text x="1400.90" y="806.06" font-family="Liberation Sans, sans-serif" font-size="3.6" fill="#555" text-anchor="middle">2-10</text><line x1="1386.50" y1="808.10" x2="1409.50" y2="808.10" stroke="#777" stroke-width="0.6"/><circle cx="1389.75" cy="811.50" r="2" fill="#fff" stroke="#777" stroke-width="0.5"/><line x1="1388.50" y1="812.50" x2="1391.00" y2="810.50" stroke="#777" stroke-width="0.4"/><text x="1400.90" y="812.86" font-family="Liberation Sans, sans-serif" font-size="3.6" fill="#555" text-anchor="middle">FBK</text>
<rect x="1409.5" y="787.70" width="7.1" height="27.2" fill="#c2c2c5" stroke="#777" stroke-width="0.5"/>
<text transform="translate(1414.5,801.30) rotate(-90)" font-family="Liberation Sans, sans-serif" font-size="3.4" fill="#333" text-anchor="middle">ACTUATOR</text>
<rect x="1466" y="781.40" width="35.7" height="38.6" rx="2.5" fill="#fff" stroke="#777" stroke-width="0.7"/>
<rect x="1427.2" y="781.40" width="39.4" height="38.6" rx="3" fill="#ee7a1c"/>
<path d="M1416.6 790.40 H1426 L1430 788.40 H1437 V811.40 H1430 L1426 809.40 H1416.6 Z" fill="#111"/>
<rect x="1431" y="792.40" width="5" height="16" fill="none" stroke="#555" stroke-width="0.5"/>
<path d="M1442.3 782.90 H1447.8 L1447 794.90 H1442.8 Z" fill="#111"/>
<circle cx="1460" cy="812.90" r="1.6" fill="#111"/><circle cx="1460" cy="812.90" r="0.6" fill="#ee7a1c"/>
<path d="M1486 792.40 Q1477 792.40 1476 800.40 Q1477 808.40 1486 808.40" fill="#eee" stroke="#555" stroke-width="0.7"/>
<circle cx="1484.5" cy="800.40" r="3.2" fill="#fff" stroke="#555" stroke-width="0.7"/>
<rect x="1486" y="792.40" width="6" height="3.2" fill="#ddd" stroke="#555" stroke-width="0.6"/><rect x="1486" y="805.20" width="6" height="3.2" fill="#ddd" stroke="#555" stroke-width="0.6"/>
<circle cx="1494.8" cy="794.00" r="1.8" fill="#eee" stroke="#555" stroke-width="0.6"/><circle cx="1494.8" cy="806.80" r="1.8" fill="#eee" stroke="#555" stroke-width="0.6"/>
<line x1="1491" y1="791.40" x2="1491" y2="809.40" stroke="#555" stroke-width="0.6"/>
<path d="M1350 835.80 L1358 835.80 L1368 834.40 L1387 834.40" fill="none" stroke="#333" stroke-width="0.6"/><rect x="1381" y="833.60" width="4" height="1.6" fill="#444"/><path d="M1350 835.80 L1358 835.80 L1368 841.20 L1387 841.20" fill="none" stroke="#333" stroke-width="0.6"/><rect x="1381" y="840.40" width="4" height="1.6" fill="#444"/><path d="M1350 835.80 L1358 835.80 L1368 848.00 L1387 848.00" fill="none" stroke="#333" stroke-width="0.6"/><rect x="1381" y="847.20" width="4" height="1.6" fill="#444"/>
<rect x="1386.50" y="831.00" width="23" height="27.20" fill="#fff" stroke="#777" stroke-width="0.7"/><line x1="1393.00" y1="831.00" x2="1393.00" y2="858.20" stroke="#777" stroke-width="0.6"/><circle cx="1389.75" cy="834.40" r="2" fill="#fff" stroke="#777" stroke-width="0.5"/><line x1="1388.50" y1="835.40" x2="1391.00" y2="833.40" stroke="#777" stroke-width="0.4"/><text x="1400.90" y="835.76" font-family="Liberation Sans, sans-serif" font-size="3.6" fill="#555" text-anchor="middle">GND</text><line x1="1386.50" y1="837.80" x2="1409.50" y2="837.80" stroke="#777" stroke-width="0.6"/><circle cx="1389.75" cy="841.20" r="2" fill="#fff" stroke="#777" stroke-width="0.5"/><line x1="1388.50" y1="842.20" x2="1391.00" y2="840.20" stroke="#777" stroke-width="0.4"/><text x="1400.90" y="842.56" font-family="Liberation Sans, sans-serif" font-size="3.6" fill="#555" text-anchor="middle">24VAC</text><line x1="1386.50" y1="844.60" x2="1409.50" y2="844.60" stroke="#777" stroke-width="0.6"/><circle cx="1389.75" cy="848.00" r="2" fill="#fff" stroke="#777" stroke-width="0.5"/><line x1="1388.50" y1="849.00" x2="1391.00" y2="847.00" stroke="#777" stroke-width="0.4"/><text x="1400.90" y="849.36" font-family="Liberation Sans, sans-serif" font-size="3.6" fill="#555" text-anchor="middle">2-10</text><line x1="1386.50" y1="851.40" x2="1409.50" y2="851.40" stroke="#777" stroke-width="0.6"/><circle cx="1389.75" cy="854.80" r="2" fill="#fff" stroke="#777" stroke-width="0.5"/><line x1="1388.50" y1="855.80" x2="1391.00" y2="853.80" stroke="#777" stroke-width="0.4"/><text x="1400.90" y="856.16" font-family="Liberation Sans, sans-serif" font-size="3.6" fill="#555" text-anchor="middle">FBK</text>
<rect x="1409.5" y="831.00" width="7.1" height="27.2" fill="#c2c2c5" stroke="#777" stroke-width="0.5"/>
<text transform="translate(1414.5,844.60) rotate(-90)" font-family="Liberation Sans, sans-serif" font-size="3.4" fill="#333" text-anchor="middle">ACTUATOR</text>
<rect x="1466" y="824.70" width="35.7" height="38.6" rx="2.5" fill="#fff" stroke="#777" stroke-width="0.7"/>
<rect x="1427.2" y="824.70" width="39.4" height="38.6" rx="3" fill="#ee7a1c"/>
<path d="M1416.6 833.70 H1426 L1430 831.70 H1437 V854.70 H1430 L1426 852.70 H1416.6 Z" fill="#111"/>
<rect x="1431" y="835.70" width="5" height="16" fill="none" stroke="#555" stroke-width="0.5"/>
<path d="M1442.3 826.20 H1447.8 L1447 838.20 H1442.8 Z" fill="#111"/>
<circle cx="1460" cy="856.20" r="1.6" fill="#111"/><circle cx="1460" cy="856.20" r="0.6" fill="#ee7a1c"/>
<path d="M1486 835.70 Q1477 835.70 1476 843.70 Q1477 851.70 1486 851.70" fill="#eee" stroke="#555" stroke-width="0.7"/>
<circle cx="1484.5" cy="843.70" r="3.2" fill="#fff" stroke="#555" stroke-width="0.7"/>
<rect x="1486" y="835.70" width="6" height="3.2" fill="#ddd" stroke="#555" stroke-width="0.6"/><rect x="1486" y="848.50" width="6" height="3.2" fill="#ddd" stroke="#555" stroke-width="0.6"/>
<circle cx="1494.8" cy="837.30" r="1.8" fill="#eee" stroke="#555" stroke-width="0.6"/><circle cx="1494.8" cy="850.10" r="1.8" fill="#eee" stroke="#555" stroke-width="0.6"/>
<line x1="1491" y1="834.70" x2="1491" y2="852.70" stroke="#555" stroke-width="0.6"/>
<path d="M1350 878.70 L1358 878.70 L1368 877.30 L1387 877.30" fill="none" stroke="#333" stroke-width="0.6"/><rect x="1381" y="876.50" width="4" height="1.6" fill="#444"/><path d="M1350 878.70 L1358 878.70 L1368 884.10 L1387 884.10" fill="none" stroke="#333" stroke-width="0.6"/><rect x="1381" y="883.30" width="4" height="1.6" fill="#444"/><path d="M1350 878.70 L1358 878.70 L1368 890.90 L1387 890.90" fill="none" stroke="#333" stroke-width="0.6"/><rect x="1381" y="890.10" width="4" height="1.6" fill="#444"/>
<rect x="1386.50" y="873.90" width="23" height="27.20" fill="#fff" stroke="#777" stroke-width="0.7"/><line x1="1393.00" y1="873.90" x2="1393.00" y2="901.10" stroke="#777" stroke-width="0.6"/><circle cx="1389.75" cy="877.30" r="2" fill="#fff" stroke="#777" stroke-width="0.5"/><line x1="1388.50" y1="878.30" x2="1391.00" y2="876.30" stroke="#777" stroke-width="0.4"/><text x="1400.90" y="878.66" font-family="Liberation Sans, sans-serif" font-size="3.6" fill="#555" text-anchor="middle">GND</text><line x1="1386.50" y1="880.70" x2="1409.50" y2="880.70" stroke="#777" stroke-width="0.6"/><circle cx="1389.75" cy="884.10" r="2" fill="#fff" stroke="#777" stroke-width="0.5"/><line x1="1388.50" y1="885.10" x2="1391.00" y2="883.10" stroke="#777" stroke-width="0.4"/><text x="1400.90" y="885.46" font-family="Liberation Sans, sans-serif" font-size="3.6" fill="#555" text-anchor="middle">24VAC</text><line x1="1386.50" y1="887.50" x2="1409.50" y2="887.50" stroke="#777" stroke-width="0.6"/><circle cx="1389.75" cy="890.90" r="2" fill="#fff" stroke="#777" stroke-width="0.5"/><line x1="1388.50" y1="891.90" x2="1391.00" y2="889.90" stroke="#777" stroke-width="0.4"/><text x="1400.90" y="892.26" font-family="Liberation Sans, sans-serif" font-size="3.6" fill="#555" text-anchor="middle">2-10</text><line x1="1386.50" y1="894.30" x2="1409.50" y2="894.30" stroke="#777" stroke-width="0.6"/><circle cx="1389.75" cy="897.70" r="2" fill="#fff" stroke="#777" stroke-width="0.5"/><line x1="1388.50" y1="898.70" x2="1391.00" y2="896.70" stroke="#777" stroke-width="0.4"/><text x="1400.90" y="899.06" font-family="Liberation Sans, sans-serif" font-size="3.6" fill="#555" text-anchor="middle">FBK</text>
<rect x="1409.5" y="873.90" width="7.1" height="27.2" fill="#c2c2c5" stroke="#777" stroke-width="0.5"/>
<text transform="translate(1414.5,887.50) rotate(-90)" font-family="Liberation Sans, sans-serif" font-size="3.4" fill="#333" text-anchor="middle">ACTUATOR</text>
<rect x="1466" y="867.60" width="35.7" height="38.6" rx="2.5" fill="#fff" stroke="#777" stroke-width="0.7"/>
<rect x="1427.2" y="867.60" width="39.4" height="38.6" rx="3" fill="#ee7a1c"/>
<path d="M1416.6 876.60 H1426 L1430 874.60 H1437 V897.60 H1430 L1426 895.60 H1416.6 Z" fill="#111"/>
<rect x="1431" y="878.60" width="5" height="16" fill="none" stroke="#555" stroke-width="0.5"/>
<path d="M1442.3 869.10 H1447.8 L1447 881.10 H1442.8 Z" fill="#111"/>
<circle cx="1460" cy="899.10" r="1.6" fill="#111"/><circle cx="1460" cy="899.10" r="0.6" fill="#ee7a1c"/>
<path d="M1486 878.60 Q1477 878.60 1476 886.60 Q1477 894.60 1486 894.60" fill="#eee" stroke="#555" stroke-width="0.7"/>
<circle cx="1484.5" cy="886.60" r="3.2" fill="#fff" stroke="#555" stroke-width="0.7"/>
<rect x="1486" y="878.60" width="6" height="3.2" fill="#ddd" stroke="#555" stroke-width="0.6"/><rect x="1486" y="891.40" width="6" height="3.2" fill="#ddd" stroke="#555" stroke-width="0.6"/>
<circle cx="1494.8" cy="880.20" r="1.8" fill="#eee" stroke="#555" stroke-width="0.6"/><circle cx="1494.8" cy="893.00" r="1.8" fill="#eee" stroke="#555" stroke-width="0.6"/>
<line x1="1491" y1="877.60" x2="1491" y2="895.60" stroke="#555" stroke-width="0.6"/>
<rect x="1570" y="201.35" width="49.2" height="18.7" rx="2.6" fill="#fff" stroke="#222" stroke-width="1"/><text x="1594.6" y="206.20" font-family="Liberation Sans, sans-serif" font-size="3" fill="#222" text-anchor="middle">MAT</text><text x="1594.6" y="209.90" font-family="Liberation Sans, sans-serif" font-size="3" fill="#222" text-anchor="middle">AI1</text><text x="1594.6" y="213.60" font-family="Liberation Sans, sans-serif" font-size="3.2" font-weight="bold" fill="#222" text-anchor="middle">Drawing in Manual</text>
<rect x="1570" y="228.55" width="49.2" height="18.7" rx="2.6" fill="#fff" stroke="#222" stroke-width="1"/><text x="1594.6" y="233.40" font-family="Liberation Sans, sans-serif" font-size="3" fill="#222" text-anchor="middle">MAT</text><text x="1594.6" y="237.10" font-family="Liberation Sans, sans-serif" font-size="3" fill="#222" text-anchor="middle">AI1</text><text x="1594.6" y="240.80" font-family="Liberation Sans, sans-serif" font-size="3.2" font-weight="bold" fill="#222" text-anchor="middle">Drawing in Manual</text>
<rect x="1570" y="255.35" width="49.2" height="18.7" rx="2.6" fill="#fff" stroke="#222" stroke-width="1"/><text x="1594.6" y="260.20" font-family="Liberation Sans, sans-serif" font-size="3" fill="#222" text-anchor="middle">MAT</text><text x="1594.6" y="263.90" font-family="Liberation Sans, sans-serif" font-size="3" fill="#222" text-anchor="middle">AI1</text><text x="1594.6" y="267.60" font-family="Liberation Sans, sans-serif" font-size="3.2" font-weight="bold" fill="#222" text-anchor="middle">Drawing in Manual</text>
<rect x="1570" y="281.35" width="49.2" height="18.7" rx="2.6" fill="#fff" stroke="#222" stroke-width="1"/><text x="1594.6" y="286.20" font-family="Liberation Sans, sans-serif" font-size="3" fill="#222" text-anchor="middle">SA_SP</text><text x="1594.6" y="289.90" font-family="Liberation Sans, sans-serif" font-size="3" fill="#222" text-anchor="middle">AI1</text><text x="1594.6" y="293.60" font-family="Liberation Sans, sans-serif" font-size="3.2" font-weight="bold" fill="#222" text-anchor="middle">Drawing in Manual</text>
<rect x="1570" y="322.25" width="49.2" height="18.7" rx="2.6" fill="#fff" stroke="#222" stroke-width="1"/><text x="1594.6" y="327.10" font-family="Liberation Sans, sans-serif" font-size="3" fill="#222" text-anchor="middle">FZ</text><text x="1594.6" y="330.80" font-family="Liberation Sans, sans-serif" font-size="3" fill="#222" text-anchor="middle">AI1</text><text x="1594.6" y="334.50" font-family="Liberation Sans, sans-serif" font-size="3.2" font-weight="bold" fill="#222" text-anchor="middle">Drawing in Manual</text>
<rect x="1570" y="349.45" width="49.2" height="18.7" rx="2.6" fill="#fff" stroke="#222" stroke-width="1"/><text x="1594.6" y="354.30" font-family="Liberation Sans, sans-serif" font-size="3" fill="#222" text-anchor="middle">SA_SMK</text><text x="1594.6" y="358.00" font-family="Liberation Sans, sans-serif" font-size="3" fill="#222" text-anchor="middle">AI1</text><text x="1594.6" y="361.70" font-family="Liberation Sans, sans-serif" font-size="3.2" font-weight="bold" fill="#222" text-anchor="middle">Drawing in Manual</text>
<rect x="1570" y="384.75" width="49.2" height="18.7" rx="2.6" fill="#fff" stroke="#222" stroke-width="1"/><text x="1594.6" y="389.60" font-family="Liberation Sans, sans-serif" font-size="3" fill="#222" text-anchor="middle">RAH</text><text x="1594.6" y="393.30" font-family="Liberation Sans, sans-serif" font-size="3" fill="#222" text-anchor="middle">AI1</text><text x="1594.6" y="397.00" font-family="Liberation Sans, sans-serif" font-size="3.2" font-weight="bold" fill="#222" text-anchor="middle">Drawing in Manual</text>
<rect x="1570" y="411.95" width="49.2" height="18.7" rx="2.6" fill="#fff" stroke="#222" stroke-width="1"/><text x="1594.6" y="416.80" font-family="Liberation Sans, sans-serif" font-size="3" fill="#222" text-anchor="middle">RA_CO2</text><text x="1594.6" y="420.50" font-family="Liberation Sans, sans-serif" font-size="3" fill="#222" text-anchor="middle">AI1</text><text x="1594.6" y="424.20" font-family="Liberation Sans, sans-serif" font-size="3.2" font-weight="bold" fill="#222" text-anchor="middle">Drawing in Manual</text>
<rect x="1570" y="438.85" width="49.2" height="18.7" rx="2.6" fill="#fff" stroke="#222" stroke-width="1"/><text x="1594.6" y="443.70" font-family="Liberation Sans, sans-serif" font-size="3" fill="#222" text-anchor="middle">OA_AFS</text><text x="1594.6" y="447.40" font-family="Liberation Sans, sans-serif" font-size="3" fill="#222" text-anchor="middle">AI1</text><text x="1594.6" y="451.10" font-family="Liberation Sans, sans-serif" font-size="3.2" font-weight="bold" fill="#222" text-anchor="middle">Drawing in Manual</text>
<rect x="1570" y="479.85" width="49.2" height="18.7" rx="2.6" fill="#fff" stroke="#222" stroke-width="1"/><text x="1594.6" y="484.70" font-family="Liberation Sans, sans-serif" font-size="3" fill="#222" text-anchor="middle">FILT_S</text><text x="1594.6" y="488.40" font-family="Liberation Sans, sans-serif" font-size="3" fill="#222" text-anchor="middle">AI1</text><text x="1594.6" y="492.10" font-family="Liberation Sans, sans-serif" font-size="3.2" font-weight="bold" fill="#222" text-anchor="middle">Drawing in Manual</text>
<rect x="1570" y="509.85" width="49.2" height="18.7" rx="2.6" fill="#fff" stroke="#222" stroke-width="1"/><text x="1594.6" y="514.70" font-family="Liberation Sans, sans-serif" font-size="3" fill="#222" text-anchor="middle">SFC</text><text x="1594.6" y="518.40" font-family="Liberation Sans, sans-serif" font-size="3" fill="#222" text-anchor="middle">AI1</text><text x="1594.6" y="522.10" font-family="Liberation Sans, sans-serif" font-size="3.2" font-weight="bold" fill="#222" text-anchor="middle">Drawing in Manual</text>
<rect x="1570" y="529.55" width="49.2" height="18.7" rx="2.6" fill="#fff" stroke="#222" stroke-width="1"/><text x="1594.6" y="534.40" font-family="Liberation Sans, sans-serif" font-size="3" fill="#222" text-anchor="middle">SFS</text><text x="1594.6" y="538.10" font-family="Liberation Sans, sans-serif" font-size="3" fill="#222" text-anchor="middle">AI1</text><text x="1594.6" y="541.80" font-family="Liberation Sans, sans-serif" font-size="3.2" font-weight="bold" fill="#222" text-anchor="middle">Drawing in Manual</text>
<rect x="1570" y="549.25" width="49.2" height="18.7" rx="2.6" fill="#fff" stroke="#222" stroke-width="1"/><text x="1594.6" y="554.10" font-family="Liberation Sans, sans-serif" font-size="3" fill="#222" text-anchor="middle">SF_MOD</text><text x="1594.6" y="557.80" font-family="Liberation Sans, sans-serif" font-size="3" fill="#222" text-anchor="middle">AI1</text><text x="1594.6" y="561.50" font-family="Liberation Sans, sans-serif" font-size="3.2" font-weight="bold" fill="#222" text-anchor="middle">Drawing in Manual</text>
<rect x="1570" y="626.05" width="49.2" height="18.7" rx="2.6" fill="#fff" stroke="#222" stroke-width="1"/><text x="1594.6" y="630.90" font-family="Liberation Sans, sans-serif" font-size="3" fill="#222" text-anchor="middle">HWP_C</text><text x="1594.6" y="634.60" font-family="Liberation Sans, sans-serif" font-size="3" fill="#222" text-anchor="middle">AI1</text><text x="1594.6" y="638.30" font-family="Liberation Sans, sans-serif" font-size="3.2" font-weight="bold" fill="#222" text-anchor="middle">Drawing in Manual</text>
<rect x="1570" y="645.65" width="49.2" height="18.7" rx="2.6" fill="#fff" stroke="#222" stroke-width="1"/><text x="1594.6" y="650.50" font-family="Liberation Sans, sans-serif" font-size="3" fill="#222" text-anchor="middle">HWP_S</text><text x="1594.6" y="654.20" font-family="Liberation Sans, sans-serif" font-size="3" fill="#222" text-anchor="middle">AI1</text><text x="1594.6" y="657.90" font-family="Liberation Sans, sans-serif" font-size="3.2" font-weight="bold" fill="#222" text-anchor="middle">Drawing in Manual</text>
<rect x="1570" y="699.40" width="49.2" height="18.7" rx="2.6" fill="#fff" stroke="#222" stroke-width="1"/><text x="1594.6" y="704.25" font-family="Liberation Sans, sans-serif" font-size="3" fill="#222" text-anchor="middle">OAD_M</text><text x="1594.6" y="707.95" font-family="Liberation Sans, sans-serif" font-size="3" fill="#222" text-anchor="middle">AI1</text><text x="1594.6" y="711.65" font-family="Liberation Sans, sans-serif" font-size="3.2" font-weight="bold" fill="#222" text-anchor="middle">Drawing in Manual</text>
<rect x="1570" y="739.65" width="49.2" height="18.7" rx="2.6" fill="#fff" stroke="#222" stroke-width="1"/><text x="1594.6" y="744.50" font-family="Liberation Sans, sans-serif" font-size="3" fill="#222" text-anchor="middle">HVC_M</text><text x="1594.6" y="748.20" font-family="Liberation Sans, sans-serif" font-size="3" fill="#222" text-anchor="middle">AI1</text><text x="1594.6" y="751.90" font-family="Liberation Sans, sans-serif" font-size="3.2" font-weight="bold" fill="#222" text-anchor="middle">Drawing in Manual</text>
<rect x="1570" y="782.15" width="49.2" height="18.7" rx="2.6" fill="#fff" stroke="#222" stroke-width="1"/><text x="1594.6" y="787.00" font-family="Liberation Sans, sans-serif" font-size="3" fill="#222" text-anchor="middle">CVC_M</text><text x="1594.6" y="790.70" font-family="Liberation Sans, sans-serif" font-size="3" fill="#222" text-anchor="middle">AI1</text><text x="1594.6" y="794.40" font-family="Liberation Sans, sans-serif" font-size="3.2" font-weight="bold" fill="#222" text-anchor="middle">Drawing in Manual</text>
<rect x="1570" y="825.65" width="49.2" height="18.7" rx="2.6" fill="#fff" stroke="#222" stroke-width="1"/><text x="1594.6" y="830.50" font-family="Liberation Sans, sans-serif" font-size="3" fill="#222" text-anchor="middle">OAD_M</text><text x="1594.6" y="834.20" font-family="Liberation Sans, sans-serif" font-size="3" fill="#222" text-anchor="middle">AI1</text><text x="1594.6" y="837.90" font-family="Liberation Sans, sans-serif" font-size="3.2" font-weight="bold" fill="#222" text-anchor="middle">Drawing in Manual</text>
<rect x="1570" y="868.65" width="49.2" height="18.7" rx="2.6" fill="#fff" stroke="#222" stroke-width="1"/><text x="1594.6" y="873.50" font-family="Liberation Sans, sans-serif" font-size="3" fill="#222" text-anchor="middle">RAD_M</text><text x="1594.6" y="877.20" font-family="Liberation Sans, sans-serif" font-size="3" fill="#222" text-anchor="middle">AI1</text><text x="1594.6" y="880.90" font-family="Liberation Sans, sans-serif" font-size="3.2" font-weight="bold" fill="#222" text-anchor="middle">Drawing in Manual</text><clipPath id="bbclip"><rect x="1125.5" y="920" width="541" height="78.5"/></clipPath><rect x="1125.5" y="920" width="541" height="78.5" fill="#f4f3f6"/><g clip-path="url(#bbclip)"><g filter="url(#blur6)"><ellipse cx="1268" cy="939" rx="82" ry="12" fill="#c4c3c9"/><ellipse cx="1272" cy="972" rx="26" ry="24" fill="#e2e1e6"/><rect x="1420" y="915" width="250" height="90" fill="#ebeaee"/><ellipse cx="1534" cy="944" rx="9" ry="12" fill="#f3d2bd"/><rect x="1556" y="940" width="78" height="9" fill="#dddce1"/><rect x="1565" y="970" width="75" height="8" fill="#dddce1"/><rect x="1630" y="915" width="50" height="90" fill="#f2f1f4"/></g></g></svg>
</body></html>
